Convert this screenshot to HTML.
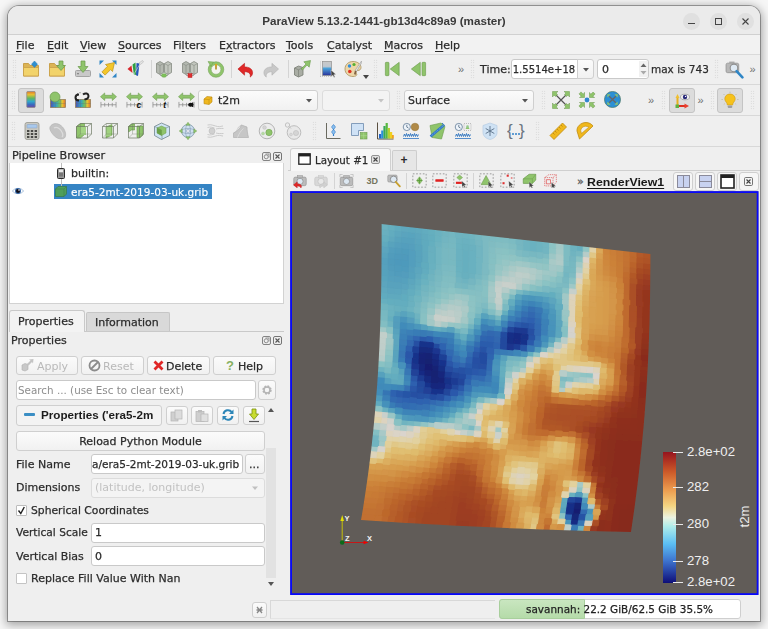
<!DOCTYPE html>
<html><head><meta charset="utf-8"><title>ParaView</title>
<style>
*{box-sizing:border-box;margin:0;padding:0}
html,body{width:768px;height:629px;overflow:hidden;background:#f6f6f6}
body{font-family:"DejaVu Sans","Liberation Sans",sans-serif;font-size:10.8px;color:#2c2c2c;position:relative}
.a{position:absolute}
.x{position:absolute;white-space:nowrap;line-height:1}
.btn{position:absolute;border:1px solid #cfcfcf;border-radius:3px;background:linear-gradient(#fbfbfb,#f1f1f1)}
.fld{position:absolute;border:1px solid #c9c9c9;border-radius:3px;background:#fff}
u{text-decoration:underline;text-underline-offset:1.5px;text-decoration-thickness:1px}
</style></head><body>
<div class="a" style="left:8px;top:6px;width:752px;height:615px;background:#efefef;border-radius:11px 11px 0 0;box-shadow:0 0 0 1px rgba(0,0,0,.30),0 2px 10px 2px rgba(0,0,0,.34)"></div>
<div class="a" style="left:8px;top:6px;width:752px;height:29px;background:#ebebeb;border-radius:11px 11px 0 0;border-bottom:1px solid #d0d0d0"></div>
<div class="x" style="left:8px;top:16px;font-size:11px;font-family:'Liberation Sans',sans-serif;font-weight:bold;color:#3a3a3a;width:752px;text-align:center;transform:scaleX(1.06);transform-origin:50% 50%;">ParaView 5.13.2-1441-gb13d4c89a9 (master)</div>
<div class="a" style="left:683px;top:13px;width:17px;height:17px;border-radius:50%;background:#e0e0e0"></div>
<div class="a" style="left:710px;top:13px;width:17px;height:17px;border-radius:50%;background:#e0e0e0"></div>
<div class="a" style="left:737px;top:13px;width:17px;height:17px;border-radius:50%;background:#e0e0e0"></div>
<svg class="a" style="left:683px;top:13px" width="17" height="17" viewBox="0 0 17 17"><path d="M5 10.500h7" stroke="#444" stroke-width="1" fill="none"/></svg>
<svg class="a" style="left:710px;top:13px" width="17" height="17" viewBox="0 0 17 17"><rect x="5.500" y="5.500" width="6" height="6" stroke="#444" stroke-width="1" fill="none"/></svg>
<svg class="a" style="left:737px;top:13px" width="17" height="17" viewBox="0 0 17 17"><path d="M5.500 5.500l6 6M11.500 5.500l-6 6" stroke="#444" stroke-width="1.100" fill="none"/></svg>
<div class="a" style="left:8px;top:35px;width:752px;height:19.5px;background:#f2f2f2;border-bottom:1px solid #dadada"></div>
<div class="x" style="left:16px;top:41px;font-size:10.8px;transform:scaleX(1.02);transform-origin:0 50%;-webkit-text-stroke:0.25px;"><u>F</u>ile</div>
<div class="x" style="left:47px;top:41px;font-size:10.8px;transform:scaleX(1.02);transform-origin:0 50%;-webkit-text-stroke:0.25px;"><u>E</u>dit</div>
<div class="x" style="left:80px;top:41px;font-size:10.8px;transform:scaleX(1.02);transform-origin:0 50%;-webkit-text-stroke:0.25px;"><u>V</u>iew</div>
<div class="x" style="left:118px;top:41px;font-size:10.8px;transform:scaleX(1.02);transform-origin:0 50%;-webkit-text-stroke:0.25px;"><u>S</u>ources</div>
<div class="x" style="left:173px;top:41px;font-size:10.8px;transform:scaleX(1.02);transform-origin:0 50%;-webkit-text-stroke:0.25px;">Fi<u>l</u>ters</div>
<div class="x" style="left:219px;top:41px;font-size:10.8px;transform:scaleX(1.02);transform-origin:0 50%;-webkit-text-stroke:0.25px;">E<u>x</u>tractors</div>
<div class="x" style="left:286px;top:41px;font-size:10.8px;transform:scaleX(1.02);transform-origin:0 50%;-webkit-text-stroke:0.25px;"><u>T</u>ools</div>
<div class="x" style="left:327px;top:41px;font-size:10.8px;transform:scaleX(1.02);transform-origin:0 50%;-webkit-text-stroke:0.25px;"><u>C</u>atalyst</div>
<div class="x" style="left:384px;top:41px;font-size:10.8px;transform:scaleX(1.02);transform-origin:0 50%;-webkit-text-stroke:0.25px;"><u>M</u>acros</div>
<div class="x" style="left:435px;top:41px;font-size:10.8px;transform:scaleX(1.02);transform-origin:0 50%;-webkit-text-stroke:0.25px;"><u>H</u>elp</div>
<div class="a" style="left:8px;top:55px;width:752px;height:30px;background:#efefef;border-bottom:1px solid #d8d8d8"></div>
<div class="a" style="left:8px;top:85px;width:752px;height:31px;background:#efefef;border-bottom:1px solid #d8d8d8"></div>
<div class="a" style="left:8px;top:116px;width:752px;height:31px;background:#efefef;border-bottom:1px solid #d8d8d8"></div>
<div class="x" style="left:11.5px;top:151px;font-size:10.8px;transform:scaleX(1.04);transform-origin:0 50%;-webkit-text-stroke:0.25px;">Pipeline Browser</div>
<div class="a" style="left:9px;top:163px;width:275px;height:141px;background:#fff;border:1px solid #d2d2d2;border-top:none"></div>
<div class="x" style="left:71px;top:169px;font-size:10.8px;transform:scaleX(1.02);transform-origin:0 50%;-webkit-text-stroke:0.25px;">builtin:</div>
<div class="a" style="left:54px;top:184px;width:158px;height:15px;background:#3584c4"></div>
<div class="x" style="left:71px;top:188px;font-size:10.8px;color:#fff;transform:scaleX(0.975);transform-origin:0 50%;-webkit-text-stroke:0.15px;">era5-2mt-2019-03-uk.grib</div>
<div class="a" style="left:86px;top:312px;width:84px;height:20px;background:#d9d9d9;border:1px solid #c6c6c6;border-bottom:none;border-radius:2px 2px 0 0"></div>
<div class="a" style="left:9px;top:331px;width:275px;height:1px;background:#c9c9c9"></div>
<div class="a" style="left:9px;top:310px;width:76px;height:22px;background:#f3f3f3;border:1px solid #c9c9c9;border-bottom:none;border-radius:3px 3px 0 0"></div>
<div class="x" style="left:18px;top:317px;font-size:10.8px;transform:scaleX(1.02);transform-origin:0 50%;-webkit-text-stroke:0.25px;">Properties</div>
<div class="x" style="left:95px;top:318px;font-size:10.8px;transform:scaleX(1.02);transform-origin:0 50%;-webkit-text-stroke:0.25px;">Information</div>
<div class="x" style="left:11px;top:336px;font-size:10.8px;transform:scaleX(1.02);transform-origin:0 50%;-webkit-text-stroke:0.25px;">Properties</div>
<div class="btn" style="left:16px;top:356px;width:62px;height:19px"></div>
<div class="btn" style="left:81px;top:356px;width:63px;height:19px"></div>
<div class="btn" style="left:147px;top:356px;width:63px;height:19px"></div>
<div class="btn" style="left:213px;top:356px;width:63px;height:19px"></div>
<div class="x" style="left:37px;top:362px;font-size:10.8px;color:#b9b9b9;transform:scaleX(1.02);transform-origin:0 50%;">Apply</div>
<div class="x" style="left:103px;top:362px;font-size:10.8px;color:#b9b9b9;transform:scaleX(1.02);transform-origin:0 50%;">Reset</div>
<div class="x" style="left:166px;top:362px;font-size:10.8px;transform:scaleX(1.02);transform-origin:0 50%;-webkit-text-stroke:0.25px;">Delete</div>
<div class="x" style="left:238px;top:362px;font-size:10.8px;transform:scaleX(1.02);transform-origin:0 50%;-webkit-text-stroke:0.25px;">Help</div>
<div class="fld" style="left:16px;top:380px;width:240px;height:20px"></div>
<div class="x" style="left:18px;top:386px;font-size:10.8px;color:#8d8d8d;transform:scaleX(0.96);transform-origin:0 50%;">Search ... (use Esc to clear text)</div>
<div class="btn" style="left:258px;top:380px;width:18px;height:20px"></div>
<div class="btn" style="left:16px;top:405px;width:146px;height:21px;background:#f3f3f3"></div>
<div class="a" style="left:24px;top:413px;width:11px;height:3px;background:#3a8ec4;border-radius:1px"></div>
<div class="x" style="left:41px;top:410px;font-size:11px;font-family:'Liberation Sans',sans-serif;font-weight:bold;color:#1c1c1c;transform:scaleX(1.06);transform-origin:0 50%;width:114px;overflow:hidden;">Properties ('era5-2m</div>
<div class="btn" style="left:166px;top:406px;width:22px;height:19px"></div>
<div class="btn" style="left:191px;top:406px;width:22px;height:19px"></div>
<div class="btn" style="left:217px;top:406px;width:22px;height:19px"></div>
<div class="btn" style="left:243px;top:406px;width:22px;height:19px"></div>
<div class="a" style="left:266px;top:448px;width:10px;height:130px;background:#e2e2e2"></div>
<svg class="a" style="left:265.5px;top:405.5px" width="10" height="8" viewBox="0 0 10 8"><path d="M2 6l3-4 3 4z" fill="#555"/></svg>
<svg class="a" style="left:266px;top:580px" width="10" height="8" viewBox="0 0 10 8"><path d="M2 2l3 4 3-4z" fill="#555"/></svg>
<div class="btn" style="left:16px;top:431px;width:249px;height:20px"></div>
<div class="x" style="left:16px;top:437px;font-size:10.8px;width:249px;text-align:center;transform:scaleX(1.02);transform-origin:50% 50%;-webkit-text-stroke:0.25px;">Reload Python Module</div>
<div class="x" style="left:16px;top:460px;font-size:10.8px;transform:scaleX(1.02);transform-origin:0 50%;-webkit-text-stroke:0.25px;">File Name</div>
<div class="fld" style="left:91px;top:454px;width:152px;height:20px;overflow:hidden"></div>
<div class="x" style="left:92px;top:460px;font-size:10.8px;transform:scaleX(0.975);transform-origin:0 50%;-webkit-text-stroke:0.25px;">a/era5-2mt-2019-03-uk.grib</div>
<div class="btn" style="left:245px;top:454px;width:20px;height:20px"></div>
<div class="x" style="left:249px;top:460px;font-size:10.8px;transform:scaleX(1.02);transform-origin:0 50%;-webkit-text-stroke:0.25px;">...</div>
<div class="x" style="left:16px;top:483px;font-size:10.8px;transform:scaleX(1.02);transform-origin:0 50%;-webkit-text-stroke:0.25px;">Dimensions</div>
<div class="fld" style="left:91px;top:478px;width:174px;height:20px;background:#f4f4f4;border-color:#dcdcdc"></div>
<div class="x" style="left:95px;top:483px;font-size:10.8px;color:#c2c2c2;transform:scaleX(1.02);transform-origin:0 50%;">(latitude, longitude)</div>
<svg class="a" style="left:251px;top:485px" width="8" height="6" viewBox="0 0 8 6"><path d="M1 1.500l3 3.500 3-3.500z" fill="#c0c0c0"/></svg>
<div class="fld" style="left:16px;top:505px;width:11px;height:11px;border-radius:1px;border-color:#bdbdbd"></div>
<svg class="a" style="left:16px;top:505px" width="11" height="11" viewBox="0 0 11 11"><path d="M2.500 5.500l2.300 3 3.500-6.500" stroke="#222" stroke-width="1.400" fill="none"/></svg>
<div class="x" style="left:31px;top:506px;font-size:10.8px;transform:scaleX(0.995);transform-origin:0 50%;-webkit-text-stroke:0.25px;">Spherical Coordinates</div>
<div class="x" style="left:16px;top:528px;font-size:10.8px;transform:scaleX(0.985);transform-origin:0 50%;-webkit-text-stroke:0.25px;">Vertical Scale</div>
<div class="fld" style="left:91px;top:523px;width:174px;height:20px"></div>
<div class="x" style="left:95px;top:528px;font-size:10.8px;transform:scaleX(1.02);transform-origin:0 50%;-webkit-text-stroke:0.25px;">1</div>
<div class="x" style="left:16px;top:552px;font-size:10.8px;transform:scaleX(1.02);transform-origin:0 50%;-webkit-text-stroke:0.25px;">Vertical Bias</div>
<div class="fld" style="left:91px;top:546px;width:174px;height:20px"></div>
<div class="x" style="left:95px;top:552px;font-size:10.8px;transform:scaleX(1.02);transform-origin:0 50%;-webkit-text-stroke:0.25px;">0</div>
<div class="fld" style="left:16px;top:573px;width:11px;height:11px;border-radius:1px;border-color:#c4c4c4"></div>
<div class="x" style="left:31px;top:574px;font-size:10.8px;transform:scaleX(1.02);transform-origin:0 50%;-webkit-text-stroke:0.25px;">Replace Fill Value With Nan</div>
<div class="a" style="left:288px;top:170px;width:472px;height:1px;background:#cfcfcf"></div>
<div class="a" style="left:290px;top:148px;width:101px;height:23px;background:#f7f7f7;border:1px solid #d0d0d0;border-bottom:none;border-radius:3px 3px 0 0"></div>
<div class="a" style="left:392px;top:150px;width:25px;height:20px;background:#e6e6e6;border:1px solid #cdcdcd;border-bottom:none;border-radius:2px 2px 0 0"></div>
<div class="x" style="left:314.5px;top:156px;font-size:10.8px;transform:scaleX(0.95);transform-origin:0 50%;-webkit-text-stroke:0.25px;">Layout #1</div>
<div class="x" style="left:400.5px;top:154px;font-size:12px;font-family:'Liberation Sans',sans-serif;font-weight:bold;transform:scaleX(1);transform-origin:0 50%;">+</div>
<div class="x" style="left:587px;top:177px;font-size:11px;font-family:'Liberation Sans',sans-serif;font-weight:bold;color:#1a1a1a;transform:scaleX(1.12);transform-origin:0 50%;"><u>RenderView1</u></div>
<div class="x" style="left:577px;top:176px;font-size:11px;color:#555;transform:scaleX(1);transform-origin:0 50%;-webkit-text-stroke:0.25px;">»</div>
<div class="btn" style="left:673px;top:172px;width:20px;height:19px;background:#f6f6f6"></div>
<div class="btn" style="left:695px;top:172px;width:20px;height:19px;background:#f6f6f6"></div>
<div class="btn" style="left:717px;top:172px;width:20px;height:19px;background:#f6f6f6"></div>
<div class="btn" style="left:739px;top:172px;width:20px;height:19px;background:#f6f6f6"></div>
<div class="btn" style="left:252px;top:602px;width:15px;height:16px"></div>
<div class="a" style="left:270px;top:600px;width:225px;height:19px;border:1px solid #d8d8d8;border-right:none;border-bottom-color:#e4e4e4"></div>
<div class="fld" style="left:499px;top:599px;width:242px;height:20px;border-color:#cfcfcf"></div>
<div class="a" style="left:499px;top:599px;width:86px;height:20px;background:linear-gradient(#c9e6c0,#b5dba9);border:1px solid #a8cf9c;border-radius:3px 0 0 3px"></div>
<div class="x" style="left:526px;top:605px;font-size:10.8px;color:#222;transform:scaleX(0.967);transform-origin:0 50%;-webkit-text-stroke:0.25px;">savannah: 22.2 GiB/62.5 GiB 35.5%</div>
<div class="a" style="left:12px;top:59px;width:5px;height:20px;background-image:radial-gradient(circle,#cdcdcd 0.600px,transparent 0.800px);background-size:2.500px 2.500px"></div>
<svg class="a" style="left:22px;top:60px;" width="18" height="18" viewBox="0 0 18 18"><path d="M1.500 3.500h5l1.500 2h8.500v10.500h-15z" fill="#dcb455" stroke="#c9a04a" stroke-width="1"/><path d="M1.500 16v-8.500h15v8.500z" fill="#f2d36b" stroke="#c9a04a" stroke-width=".8"/><path d="M12.500 1l3 3.200-3 3.200-3-3.200z" fill="#2f8fd0" stroke="#2a78b0" stroke-width=".5"/></svg>
<svg class="a" style="left:48px;top:60px;" width="18" height="18" viewBox="0 0 18 18"><path d="M1.500 3.500h5l1.500 2h8.500v10.500h-15z" fill="#dcb455" stroke="#c9a04a" stroke-width="1"/><path d="M1.500 16v-8.500h15v8.500z" fill="#f2d36b" stroke="#c9a04a" stroke-width=".8"/><path d="M11 1h4v4.500h2.500l-4.500 5-4.500-5h2.500z" fill="#8fc46b" stroke="#6a9a4c" stroke-width=".7"/></svg>
<svg class="a" style="left:74px;top:60px;" width="18" height="18" viewBox="0 0 18 18"><rect x="1.500" y="10.500" width="15" height="6" rx="1" fill="#c9c9c9" stroke="#a4a4a4"/><rect x="3" y="13" width="2" height="1.300" fill="#8a8a8a"/><path d="M7 1h4v5.500h3l-5 6-5-6h3z" fill="#8fc46b" stroke="#6a9a4c" stroke-width=".7"/></svg>
<svg class="a" style="left:99px;top:60px;" width="18" height="18" viewBox="0 0 18 18"><g fill="#2f86c6"><path d="M.5 .5h4.500l-4.500 4.500z"/><path d="M17.500 .5v4.500l-4.500-4.500z"/><path d="M.5 17.500v-4.500l4.500 4.500z"/><path d="M17.500 17.500h-4.500l4.500-4.500z"/></g><path d="M6.100 15.100l5.500-5.500 1.900 1.900 2-9-9 2 1.900 1.900-5.500 5.500z" fill="#f3c62a" stroke="#b8901c" stroke-width=".7" stroke-linejoin="round"/></svg>
<svg class="a" style="left:126px;top:60px;" width="18" height="18" viewBox="0 0 18 18"><path d="M1.500 9l4-3.500 1 7.500z" fill="#d8262c"/><path d="M6.500 4.500l3-2 0.500 12.500-2.200-.8z" fill="#2f9e44"/><path d="M10.500 3l3 .5-1.500 12.500-2-.7z" fill="#2657b8"/><path d="M13 3l3.500-2.500 1 1.500-3.300 2.600z" fill="#e6e6e6" stroke="#aaa" stroke-width=".5"/><path d="M8 14l6-10" stroke="#ddd" stroke-width=".6"/></svg>
<div class="a" style="left:151px;top:60px;width:1px;height:18px;background:#d4d4d4"></div>
<svg class="a" style="left:155px;top:60px;" width="18" height="18" viewBox="0 0 18 18"><path d="M1.500 3.500l3.500-2 3.500 2v9l-3.500 2-3.500-2z" fill="#b4b8b0" stroke="#858a82" stroke-width=".8"/><path d="M5 5.500v9" stroke="#858a82" stroke-width=".6"/><path d="M9.500 3.500l3.500-2 3.500 2v9l-3.500 2-3.500-2z" fill="#c2c6be" stroke="#858a82" stroke-width=".8"/><path d="M13 5.500v9" stroke="#858a82" stroke-width=".6"/><path d="M1.500 3.500l3.500 2 3.500-2M9.500 3.500l3.500 2 3.500-2" fill="none" stroke="#858a82" stroke-width=".6"/><path d="M5 15.500h8" stroke="#9a9a9a" stroke-width=".8"/><ellipse cx="9" cy="15.500" rx="2.600" ry="1.800" fill="#7ec35a" stroke="#5e9a42" stroke-width=".5"/></svg>
<svg class="a" style="left:181px;top:60px;" width="18" height="18" viewBox="0 0 18 18"><path d="M1.500 3.500l3.500-2 3.500 2v9l-3.500 2-3.500-2z" fill="#b4b8b0" stroke="#858a82" stroke-width=".8"/><path d="M5 5.500v9" stroke="#858a82" stroke-width=".6"/><path d="M9.500 3.500l3.500-2 3.500 2v9l-3.500 2-3.500-2z" fill="#c2c6be" stroke="#858a82" stroke-width=".8"/><path d="M13 5.500v9" stroke="#858a82" stroke-width=".6"/><path d="M1.500 3.500l3.500 2 3.500-2M9.500 3.500l3.500 2 3.500-2" fill="none" stroke="#858a82" stroke-width=".6"/><path d="M5 15.500h8" stroke="#9a9a9a" stroke-width=".8"/><rect x="7" y="13.500" width="4" height="4" fill="#e03030" stroke="#b02020" stroke-width=".5"/></svg>
<svg class="a" style="left:207px;top:60px;" width="18" height="18" viewBox="0 0 18 18"><circle cx="9" cy="9.500" r="6.300" fill="none" stroke="#8fc46b" stroke-width="3"/><circle cx="9" cy="9.500" r="7.800" fill="none" stroke="#6a9a4c" stroke-width=".5"/><circle cx="9" cy="9.500" r="4.800" fill="#f4f4f0" stroke="#6a9a4c" stroke-width=".5"/><path d="M1 1.500l5.500.5-2.500 4.500z" fill="#8fc46b" stroke="#6a9a4c" stroke-width=".5"/><path d="M9 4.500v5" stroke="#b08a20" stroke-width="1.600"/><circle cx="9" cy="5" r="1.200" fill="#d8a820"/></svg>
<div class="a" style="left:231px;top:60px;width:1px;height:18px;background:#d4d4d4"></div>
<svg class="a" style="left:237px;top:61px;" width="17" height="17" viewBox="0 0 18 18"><path d="M1 8.500l7-6v3.800c5 0 8.500 2.200 8.500 6.200 0 2-1 3.500-2.500 4.500 .8-3.500-1.500-5.700-6-5.700v3.700z" fill="#e02828" stroke="#b81818" stroke-width=".6"/></svg>
<svg class="a" style="left:262px;top:61px;" width="18" height="17" viewBox="0 0 18 18"><path d="M17 8.500l-7-6v3.800c-5 0-8.500 2.200-8.500 6.200 0 2 1 3.500 2.500 4.500-.8-3.500 1.500-5.700 6-5.700v3.700z" fill="#c8c8c8" stroke="#b0b0b0" stroke-width=".6"/></svg>
<div class="a" style="left:288px;top:60px;width:1px;height:18px;background:#d4d4d4"></div>
<svg class="a" style="left:293px;top:60px;" width="18" height="18" viewBox="0 0 18 18"><path d="M1.500 8l4-2 4.500 1.500v7.500l-4.500 2-4-2z" fill="#a9ada4" stroke="#777b72" stroke-width=".8"/><path d="M1.500 8l4 1.800 4.500-2.300M5.500 9.800v7" fill="none" stroke="#777b72" stroke-width=".6"/><path d="M8 9l5-5-2.200-2.200 6.700-1.300-1.300 6.700-2.200-2.200-4.500 5z" fill="#8fc46b" stroke="#6a9a4c" stroke-width=".6"/></svg>
<svg class="a" style="left:319px;top:60px;" width="18" height="18" viewBox="0 0 18 18"><defs><linearGradient id="lgc12" x1="0" y1="0" x2="0" y2="1"><stop offset="0" stop-color="#c8c8c8"/><stop offset=".35" stop-color="#c0c8d0"/><stop offset=".5" stop-color="#4aa0d8"/><stop offset="1" stop-color="#28309a"/></linearGradient></defs><rect x="3.500" y="1.500" width="9" height="14" fill="url(#lgc12)" stroke="#909090" stroke-width=".7"/><path d="M1.500 1.500v15M1 16.500h12" stroke="#aaa" stroke-width=".6" stroke-dasharray="1 1"/><path d="M12 10l5 4.500-2.200.2 1.200 2.300-1 .5-1.200-2.300-1.600 1.500z" fill="#444" stroke="#eee" stroke-width=".4"/></svg>
<svg class="a" style="left:344px;top:60px;" width="18" height="18" viewBox="0 0 18 18"><path d="M9 1.500c5 0 8 3 8 6 0 2-1.500 3-3 3-1.200 0-2 .6-2 1.600 0 1 .8 1.400.8 2.400 0 1.200-1.500 2-3.800 2-4.500 0-8-3-8-7.500s3.500-7.500 8-7.500z" fill="#ecd6a8" stroke="#a8905c" stroke-width=".8"/><circle cx="5.500" cy="6" r="1.700" fill="#2f8fe0"/><circle cx="10" cy="4.500" r="1.600" fill="#58b030"/><circle cx="5.800" cy="11.500" r="1.800" fill="#e03020"/><path d="M17.500 1l-6.500 9.500 1.500 1 5.500-9.500z" fill="#e8e8e8" stroke="#888" stroke-width=".5"/><path d="M11 10.500l1.500 1-1 3.500-1.500-1z" fill="#806040"/></svg>
<svg class="a" style="left:363px;top:75px" width="6" height="4" viewBox="0 0 6 4"><path d="M0 0h6l-3 4z" fill="#444"/></svg>
<div class="a" style="left:373px;top:59px;width:5px;height:20px;background-image:radial-gradient(circle,#cdcdcd 0.600px,transparent 0.800px);background-size:2.500px 2.500px"></div>
<svg class="a" style="left:384px;top:61px;" width="17" height="16" viewBox="0 0 18 18"><rect x="1" y="1.500" width="4" height="15" rx=".8" fill="#8fc46b" stroke="#6a9a4c" stroke-width=".7"/><path d="M16.500 1.500v15l-10-7.500z" fill="#8fc46b" stroke="#6a9a4c" stroke-width=".7"/></svg>
<svg class="a" style="left:410px;top:61px;" width="17" height="16" viewBox="0 0 18 18"><rect x="13" y="1.500" width="4" height="15" rx=".8" fill="#8fc46b" stroke="#6a9a4c" stroke-width=".7"/><path d="M11 1.500v15l-10-7.500z" fill="#8fc46b" stroke="#6a9a4c" stroke-width=".7"/></svg>
<div class="x" style="left:458px;top:64px;font-size:11px;font-family:'Liberation Sans',sans-serif;color:#707070;transform:scaleX(1);transform-origin:0 50%;">»</div>
<div class="a" style="left:470px;top:59px;width:5px;height:20px;background-image:radial-gradient(circle,#cdcdcd 0.600px,transparent 0.800px);background-size:2.500px 2.500px"></div>
<div class="x" style="left:479.5px;top:65px;font-size:10.8px;transform:scaleX(1.02);transform-origin:0 50%;-webkit-text-stroke:0.25px;">Time:</div>
<div class="fld" style="left:511px;top:59px;width:67px;height:20px;border-radius:3px 0 0 3px"></div>
<div class="a" style="left:512px;top:60px;width:64px;height:18px;overflow:hidden"><div class="x" style="right:1px;top:5px;font-size:10.8px;-webkit-text-stroke:.25px;transform:scaleX(.93);transform-origin:100% 50%">1.5514e+18</div></div>
<div class="btn" style="left:577px;top:59px;width:17px;height:20px;border-radius:0 3px 3px 0"></div>
<svg class="a" style="left:582px;top:67px" width="8" height="5" viewBox="0 0 8 5"><path d="M1 1h6l-3 3.500z" fill="#555"/></svg>
<div class="fld" style="left:597px;top:59px;width:52px;height:20px"></div>
<div class="x" style="left:602px;top:65px;font-size:10.8px;transform:scaleX(1.02);transform-origin:0 50%;-webkit-text-stroke:0.25px;">0</div>
<svg class="a" style="left:639px;top:61px" width="9" height="16" viewBox="0 0 9 16"><rect width="9" height="16" fill="#f1f1f1"/><path d="M1.500 6l3-3.500 3 3.500z" fill="#666"/><path d="M1.500 10l3 3.500 3-3.500z" fill="#aaa"/></svg>
<div class="x" style="left:651px;top:65px;font-size:10.8px;transform:scaleX(0.97);transform-origin:0 50%;-webkit-text-stroke:0.25px;">max is 743</div>
<div class="a" style="left:714px;top:59px;width:5px;height:20px;background-image:radial-gradient(circle,#cdcdcd 0.600px,transparent 0.800px);background-size:2.500px 2.500px"></div>
<svg class="a" style="left:725px;top:60px;" width="19" height="19" viewBox="0 0 18 18"><rect x="1" y="3" width="12" height="9" rx="1.500" fill="#b8b8b8" stroke="#8e8e8e" stroke-width=".7"/><rect x="4" y="1.500" width="5" height="2" fill="#a8a8a8"/><circle cx="8.500" cy="7.500" r="3.600" fill="#dfeaf4" stroke="#8e8e8e" stroke-width="1"/><path d="M11 10.500l5.500 6" stroke="#2f86c6" stroke-width="2.400" stroke-linecap="round"/></svg>
<div class="x" style="left:749.5px;top:64px;font-size:11px;font-family:'Liberation Sans',sans-serif;color:#707070;transform:scaleX(1);transform-origin:0 50%;">»</div>
<div class="a" style="left:11px;top:90px;width:5px;height:20px;background-image:radial-gradient(circle,#cdcdcd 0.600px,transparent 0.800px);background-size:2.500px 2.500px"></div>
<div class="a" style="left:18px;top:88px;width:26px;height:25px;background:#dcdcdc;border:1px solid #c4c4c4;border-radius:3px"></div>
<svg class="a" style="left:22px;top:91px;" width="18" height="17" viewBox="0 0 18 18"><defs><linearGradient id="rb17" x1="0" y1="0" x2="0" y2="1"><stop offset="0" stop-color="#e07830"/><stop offset=".2" stop-color="#e8c030"/><stop offset=".42" stop-color="#60b860"/><stop offset=".62" stop-color="#30a8c8"/><stop offset=".82" stop-color="#3868c0"/><stop offset="1" stop-color="#7048a0"/></linearGradient></defs><rect x="4.500" y=".5" width="9" height="17" rx="1" fill="url(#rb17)" stroke="#8a8a8a" stroke-width=".8"/></svg>
<svg class="a" style="left:49px;top:91px;" width="18" height="18" viewBox="0 0 18 18"><defs><linearGradient id="bk18" x1="0" y1="0" x2="1" y2="0"><stop offset="0" stop-color="#5050b0"/><stop offset=".35" stop-color="#30a0c8"/><stop offset=".6" stop-color="#70c060"/><stop offset=".8" stop-color="#e8c030"/><stop offset="1" stop-color="#e07030"/></linearGradient></defs><rect x="1.500" y="8.500" width="15" height="8" fill="url(#bk18)" stroke="#8a7a50" stroke-width=".7"/><path d="M1.500 12.500h15M6.500 8.500v8M11.500 8.500v8" stroke="#6a6a6a" stroke-width=".5" opacity=".6"/><circle cx="6" cy="6" r="5" fill="#8fc46b" stroke="#6a9a4c" stroke-width=".7"/></svg>
<svg class="a" style="left:74px;top:91px;" width="18" height="18" viewBox="0 0 18 18"><defs><linearGradient id="bk19" x1="0" y1="0" x2="1" y2="0"><stop offset="0" stop-color="#5050b0"/><stop offset=".35" stop-color="#30a0c8"/><stop offset=".6" stop-color="#70c060"/><stop offset=".8" stop-color="#e8c030"/><stop offset="1" stop-color="#e07030"/></linearGradient></defs><rect x="1.500" y="8.500" width="15" height="8" fill="url(#bk19)" stroke="#8a7a50" stroke-width=".7"/><path d="M1.500 12.500h15M6.500 8.500v8M11.500 8.500v8" stroke="#6a6a6a" stroke-width=".5" opacity=".6"/><path d="M5 9.500c-2.500 0-3.500-1.500-3.500-3s1.200-3 3.500-3M9 3.500c2.500-2 5.500-1 5.500 1.500s-2 3.500-4 3" fill="none" stroke="#222" stroke-width="2"/><path d="M3 2l1 1M6 1v1.300M1.500 4.500l1 .5" stroke="#444" stroke-width=".6"/></svg>
<svg class="a" style="left:99px;top:92px;" width="19" height="17" viewBox="0 0 18 18"><path d="M.5 5l4.500-4v2.500h8v-2.500l4.500 4-4.500 4v-2.500h-8v2.500z" fill="#8fc46b" stroke="#6a9a4c" stroke-width=".6"/><path d="M1 13.500h16M1 10.500v6M5 11.500v4M9 11.500v4M13 11.500v4M17 10.500v6" stroke="#8a8a8a" stroke-width=".8" fill="none"/></svg>
<svg class="a" style="left:125px;top:92px;" width="19" height="17" viewBox="0 0 18 18"><path d="M.5 5l4.500-4v2.500h8v-2.500l4.500 4-4.500 4v-2.500h-8v2.500z" fill="#8fc46b" stroke="#6a9a4c" stroke-width=".6"/><path d="M1 13.500h16M1 10.500v6M5 11.500v4M9 11.500v4M13 11.500v4M17 10.500v6" stroke="#8a8a8a" stroke-width=".8" fill="none"/><text x="11" y="17" font-family="Liberation Sans" font-weight="bold" font-style="italic" font-size="9" fill="#111">c</text></svg>
<svg class="a" style="left:151px;top:92px;" width="19" height="17" viewBox="0 0 18 18"><path d="M.5 5l4.500-4v2.500h8v-2.500l4.500 4-4.500 4v-2.500h-8v2.500z" fill="#8fc46b" stroke="#6a9a4c" stroke-width=".6"/><path d="M1 13.500h16M1 10.500v6M5 11.500v4M9 11.500v4M13 11.500v4M17 10.500v6" stroke="#8a8a8a" stroke-width=".8" fill="none"/><text x="12" y="17" font-family="Liberation Sans" font-weight="bold" font-style="italic" font-size="9" fill="#111">t</text></svg>
<svg class="a" style="left:177px;top:92px;" width="19" height="17" viewBox="0 0 18 18"><path d="M.5 5l4.500-4v2.500h8v-2.500l4.500 4-4.500 4v-2.500h-8v2.500z" fill="#8fc46b" stroke="#6a9a4c" stroke-width=".6"/><path d="M1 13.500h16M1 10.500v6M5 11.500v4M9 11.500v4M13 11.500v4M17 10.500v6" stroke="#8a8a8a" stroke-width=".8" fill="none"/><ellipse cx="13.500" cy="13.500" rx="2.800" ry="2.200" fill="#111"/><path d="M15.500 11v5" stroke="#111" stroke-width="1.200"/></svg>
<div class="btn" style="left:198px;top:90px;width:120px;height:21px"></div>
<svg class="a" style="left:203px;top:95px;" width="10" height="11" viewBox="0 0 10 11"><path d="M1 4l3-2.500 5 .5v5l-3 2.500-5-.8z" fill="#f0b820" stroke="#b88810" stroke-width=".6"/><path d="M1 4l5 .7 3-2.700M6 4.700v4.800" fill="none" stroke="#b88810" stroke-width=".5"/></svg>
<div class="x" style="left:218px;top:96px;font-size:10.8px;transform:scaleX(1.02);transform-origin:0 50%;-webkit-text-stroke:0.25px;">t2m</div>
<svg class="a" style="left:305px;top:98px" width="8" height="5" viewBox="0 0 8 5"><path d="M1 1h6l-3 3.500z" fill="#555"/></svg>
<div class="btn" style="left:322px;top:90px;width:68px;height:21px;border-color:#dcdcdc;background:#f3f3f3"></div>
<svg class="a" style="left:377px;top:98px" width="8" height="5" viewBox="0 0 8 5"><path d="M1 1h6l-3 3.500z" fill="#c4c4c4"/></svg>
<div class="a" style="left:396px;top:90px;width:5px;height:20px;background-image:radial-gradient(circle,#cdcdcd 0.600px,transparent 0.800px);background-size:2.500px 2.500px"></div>
<div class="btn" style="left:404px;top:90px;width:130px;height:21px"></div>
<div class="x" style="left:408px;top:96px;font-size:10.8px;transform:scaleX(1.02);transform-origin:0 50%;-webkit-text-stroke:0.25px;">Surface</div>
<svg class="a" style="left:521px;top:98px" width="8" height="5" viewBox="0 0 8 5"><path d="M1 1h6l-3 3.500z" fill="#555"/></svg>
<div class="a" style="left:541px;top:90px;width:5px;height:20px;background-image:radial-gradient(circle,#cdcdcd 0.600px,transparent 0.800px);background-size:2.500px 2.500px"></div>
<svg class="a" style="left:551.5px;top:91px;" width="18" height="18" viewBox="0 0 18 18"><path d="M3 3l12 12M15 3l-12 12" stroke="#555" stroke-width="1.200"/><g fill="#8fc46b" stroke="#6a9a4c" stroke-width=".5"><path d="M.5.500h5.500l-2 1.500 1.500 1.500-2 2-1.500-1.500-1.500 2z"/><path d="M17.500.5v5.500l-1.500-2-1.500 1.500-2-2 1.500-1.500-2-1.500z"/><path d="M.5 17.500v-5.500l1.500 2 1.500-1.500 2 2-1.500 1.500 2 1.500z"/><path d="M17.500 17.500h-5.500l2-1.500-1.500-1.500 2-2 1.500 1.500 1.500-2z"/></g></svg>
<svg class="a" style="left:577.5px;top:91px;" width="18" height="18" viewBox="0 0 18 18"><g fill="#8fc46b" stroke="#6a9a4c" stroke-width=".5"><path d="M6.500 6.500h-5l1.800-1.300-2.300-2.300 2-2 2.300 2.300 1.200-1.800z"/><path d="M11.500 6.500v-5l1.300 1.800 2.300-2.300 2 2-2.300 2.300 1.800 1.200z"/><path d="M6.500 11.500v5l-1.300-1.800-2.300 2.300-2-2 2.300-2.300-1.800-1.200z"/><path d="M11.500 11.500h5l-1.800 1.300 2.300 2.300-2 2-2.300-2.300-1.200 1.800z"/></g><circle cx="9" cy="9" r="2.400" fill="#2f86d0"/></svg>
<svg class="a" style="left:603.5px;top:91px;" width="17" height="17" viewBox="0 0 18 18"><circle cx="9" cy="9" r="8.500" fill="#2b8fd6" stroke="#4a7a6a" stroke-width=".8"/><path d="M5.500 5.500l7 7M12.500 5.500l-7 7" stroke="#666" stroke-width="1.400"/><g fill="#8fc46b"><path d="M3.500 3.500h3.500l-3.500 3.500z"/><path d="M14.500 3.500v3.500l-3.500-3.500z"/><path d="M3.500 14.500v-3.500l3.500 3.500z"/><path d="M14.500 14.500h-3.500l3.500-3.500z"/></g></svg>
<div class="x" style="left:648px;top:95px;font-size:11px;font-family:'Liberation Sans',sans-serif;color:#707070;transform:scaleX(1);transform-origin:0 50%;">»</div>
<div class="a" style="left:661px;top:90px;width:5px;height:20px;background-image:radial-gradient(circle,#cdcdcd 0.600px,transparent 0.800px);background-size:2.500px 2.500px"></div>
<div class="a" style="left:669px;top:88px;width:26px;height:25px;background:#dcdcdc;border:1px solid #c4c4c4;border-radius:3px"></div>
<svg class="a" style="left:673px;top:92px;" width="18" height="18" viewBox="0 0 18 18"><path d="M4.500 14.500v-9" stroke="#e8b020" stroke-width="2"/><path d="M2.500 6l2-4 2 4z" fill="#f0c030"/><path d="M5 14h7" stroke="#e03020" stroke-width="2"/><path d="M11.500 11.500l4.500 2.500-4.500 2.500z" fill="#e84030"/><rect x="2.500" y="12.500" width="3.500" height="3.500" fill="#60b040"/><ellipse cx="12" cy="5" rx="4.500" ry="2.800" fill="#f4f4f4" stroke="#888" stroke-width=".6"/><circle cx="12" cy="5" r="2.200" fill="#282878"/><circle cx="12.600" cy="4.400" r=".7" fill="#fff"/></svg>
<div class="x" style="left:697.5px;top:95px;font-size:11px;font-family:'Liberation Sans',sans-serif;color:#707070;transform:scaleX(1);transform-origin:0 50%;">»</div>
<div class="a" style="left:710px;top:90px;width:5px;height:20px;background-image:radial-gradient(circle,#cdcdcd 0.600px,transparent 0.800px);background-size:2.500px 2.500px"></div>
<div class="a" style="left:717px;top:88px;width:26px;height:25px;background:#dcdcdc;border:1px solid #c4c4c4;border-radius:3px"></div>
<svg class="a" style="left:721px;top:91px;" width="18" height="19" viewBox="0 0 18 18"><path d="M9 2.500c3.200 0 5.200 2.200 5.200 4.800 0 2-1.200 3-2 4.200-.4.600-.5 1.500-.5 2h-5.400c0-.5-.1-1.400-.5-2-.8-1.200-2-2.200-2-4.200 0-2.600 2-4.800 5.200-4.800z" fill="#f6c21c" stroke="#d09a10" stroke-width=".6"/><rect x="6.800" y="14" width="4.400" height="2.600" rx=".8" fill="#a0a0a0"/><path d="M9 .2v1.300M2.500 2.500l1 1M15.500 2.500l-1 1M.5 8h1.300M16.200 8h1.300M2.800 13l.9-.8M15.200 13l-.9-.8" stroke="#b8b8a0" stroke-width=".8"/></svg>
<div class="a" style="left:750px;top:90px;width:5px;height:20px;background-image:radial-gradient(circle,#cdcdcd 0.600px,transparent 0.800px);background-size:2.500px 2.500px"></div>
<div class="a" style="left:11px;top:121px;width:5px;height:20px;background-image:radial-gradient(circle,#cdcdcd 0.600px,transparent 0.800px);background-size:2.500px 2.500px"></div>
<svg class="a" style="left:23px;top:122px;" width="18" height="18" viewBox="0 0 18 18"><rect x="2" y=".5" width="14" height="17" rx="2" fill="#c9c9c2" stroke="#96968e" stroke-width=".8"/><rect x="4" y="2.500" width="10" height="3.500" rx=".6" fill="#a8c8ec" stroke="#88a0c0" stroke-width=".5"/><g fill="#4a4a46"><rect x="4" y="8" width="2.400" height="2"/><rect x="7.800" y="8" width="2.400" height="2"/><rect x="11.600" y="8" width="2.400" height="2"/><rect x="4" y="11" width="2.400" height="2"/><rect x="7.800" y="11" width="2.400" height="2"/><rect x="11.600" y="11" width="2.400" height="2"/><rect x="4" y="14" width="2.400" height="2"/><rect x="7.800" y="14" width="2.400" height="2"/><rect x="11.600" y="14" width="2.400" height="2"/></g></svg>
<svg class="a" style="left:49px;top:122px;" width="18" height="18" viewBox="0 0 18 18"><path d="M2 3.500c3-3 8-2.500 11.500 1.500s4 9 2 11c-2.500 2-8 1-11.500-3.500s-4-7-2-9z" fill="#c4c4c4" stroke="#b0b0b0" stroke-width=".6"/><path d="M5 6c2-1.500 5-.5 7 2.500s2 5.500 1 6.500" fill="none" stroke="#dcdcdc" stroke-width="1.300"/></svg>
<svg class="a" style="left:75px;top:122px;" width="18" height="18" viewBox="0 0 18 18"><path d="M1.500 4.500l4-3h4v11l-4 3.500h-4z" fill="#8fc46b" stroke="#6a9a4c" stroke-width=".6"/><path d="M5.500 5h5.500v8h-5.500z" fill="#a4d484"/><path d="M1.500 4.500l4-3h11v10.500l-4 4h-11zM1.500 4.500h11v11.500M12.500 4.500l4-3" fill="none" stroke="#6e7a64" stroke-width=".7"/><path d="M5.500 1.500v10.500h11M5.500 12l-4 4" fill="none" stroke="#6e7a64" stroke-width=".5" opacity=".7"/></svg>
<svg class="a" style="left:101px;top:122px;" width="18" height="18" viewBox="0 0 18 18"><path d="M5 5l6-2.500v10.500l-6 3z" fill="#8fc46b" stroke="#6a9a4c" stroke-width=".6"/><path d="M5 5h5v9h-5z" fill="#a4d484" opacity=".8"/><path d="M1.500 4.500l4-3h11v10.500l-4 4h-11zM1.500 4.500h11v11.500M12.500 4.500l4-3" fill="none" stroke="#6e7a64" stroke-width=".7"/><path d="M5.500 1.500v10.500h11M5.500 12l-4 4" fill="none" stroke="#6e7a64" stroke-width=".5" opacity=".7"/></svg>
<svg class="a" style="left:127px;top:122px;" width="18" height="18" viewBox="0 0 18 18"><path d="M1.500 4.500l3-2.500h3v6h-3l-3 2zM10 4h6v9l-3 2.500h-3z" fill="#8fc46b" stroke="#6a9a4c" stroke-width=".6"/><path d="M1.500 4.500l4-3h11v10.500l-4 4h-11zM1.500 4.500h11v11.500M12.500 4.500l4-3" fill="none" stroke="#6e7a64" stroke-width=".7"/><path d="M5.500 1.500v10.500h11M5.500 12l-4 4" fill="none" stroke="#6e7a64" stroke-width=".5" opacity=".7"/></svg>
<svg class="a" style="left:153px;top:122px;" width="18" height="18" viewBox="0 0 18 18"><path d="M1.500 4.500l7-3.500 8 3.500v9l-8 4-7-4z" fill="#cfe4f4" stroke="#70848c" stroke-width=".8"/><path d="M1.500 4.500l7.500 3 7.500-3M9 7.500v10" fill="none" stroke="#70848c" stroke-width=".6"/><path d="M4 6l4.500-2 4.500 2v5l-4.500 2.500-4.500-2.500z" fill="#8fc46b" stroke="#6a9a4c" stroke-width=".5"/><path d="M4 6l4.500 2v5.500" fill="none" stroke="#6a9a4c" stroke-width=".5"/><path d="M4 6l4.500 2 0 5.500-4.500-2.500z" fill="#6aa048"/></svg>
<svg class="a" style="left:179px;top:122px;" width="18" height="18" viewBox="0 0 18 18"><circle cx="9" cy="9" r="6.500" fill="#cfe0f0" stroke="#7890a8" stroke-width=".8"/><ellipse cx="9" cy="9" rx="6.500" ry="2.500" fill="none" stroke="#7890a8" stroke-width=".5"/><ellipse cx="9" cy="9" rx="2.500" ry="6.500" fill="none" stroke="#7890a8" stroke-width=".5"/><g fill="#8fc46b" stroke="#6a9a4c" stroke-width=".4"><path d="M9 .2l2.200 3h-4.400z"/><path d="M9 17.800l2.200-3h-4.400z"/><path d="M.2 9l3-2.200v4.400z"/><path d="M17.800 9l-3-2.200v4.400z"/></g><circle cx="9" cy="9" r="1.600" fill="#e8e8f0" stroke="#7890a8" stroke-width=".4"/></svg>
<svg class="a" style="left:206px;top:122px;" width="18" height="18" viewBox="0 0 18 18"><circle cx="6" cy="9" r="3" fill="#d0d0d0" stroke="#bcbcbc" stroke-width=".6"/><path d="M1.500 3c4-1 7 1 10 1.500s4-.5 5.500-.5M1.500 15c4 1 7-1 10-1.500s4 .5 5.500.5M10 7c2.500-.8 5-.5 7.500-.5M10 11c2.500.8 5 .5 7.500.5M1.500 5.500c3-1 5 0 7 .5M1.500 12.500c3 1 5 0 7-.5" fill="none" stroke="#c6c6c6" stroke-width=".9"/></svg>
<svg class="a" style="left:232px;top:122px;" width="18" height="18" viewBox="0 0 18 18"><path d="M1.500 15.500v-4.500c3-1 6-3.500 8-8l5.500 2c0 3 .5 7 1.500 10.500z" fill="#c6c6c6" stroke="#b0b0b0" stroke-width=".7"/><path d="M9.500 3l-3 2c-1 3-3 5-5 6" fill="none" stroke="#b8b8b8" stroke-width=".6"/><path d="M5.500 15.500c1.500-4 3.500-7 6-9" fill="none" stroke="#dadada" stroke-width="1"/></svg>
<svg class="a" style="left:258px;top:122px;" width="18" height="18" viewBox="0 0 18 18"><circle cx="9" cy="9" r="7.800" fill="#ececec" stroke="#b4b4b4" stroke-width="1"/><circle cx="11" cy="10.500" r="3.200" fill="#8fc46b" stroke="#6a9a4c" stroke-width=".5"/><circle cx="6.500" cy="5.500" r="1.800" fill="#d4d4d4" stroke="#bbb" stroke-width=".5"/><circle cx="5" cy="11.500" r="1.500" fill="#b8d8a0" stroke="#9c9" stroke-width=".4"/></svg>
<svg class="a" style="left:284px;top:122px;" width="18" height="18" viewBox="0 0 18 18"><circle cx="10" cy="10.500" r="6.800" fill="#e8e8e8" stroke="#bdbdbd" stroke-width="1"/><circle cx="3.500" cy="3" r="2.200" fill="#ececec" stroke="#bdbdbd" stroke-width=".9"/><path d="M5 4.500l2 2" stroke="#bdbdbd" stroke-width=".9"/><circle cx="12" cy="11" r="2.600" fill="#d4d4d4" stroke="#c0c0c0" stroke-width=".6"/><circle cx="7" cy="12.500" r="1.400" fill="#d8d8d8" stroke="#c0c0c0" stroke-width=".5"/></svg>
<div class="a" style="left:312px;top:121px;width:5px;height:20px;background-image:radial-gradient(circle,#cdcdcd 0.600px,transparent 0.800px);background-size:2.500px 2.500px"></div>
<svg class="a" style="left:324px;top:122px;" width="18" height="18" viewBox="0 0 18 18"><path d="M2.500 1v15.500h14" fill="none" stroke="#6a6a60" stroke-width="1"/><path d="M9.500 3v11" stroke="#3080d0" stroke-width="1.200"/><path d="M9.500 2.500l2 2.500-2 2.500 2 2.500-2 2.500-2-2.500 2-2.500-2-2.500z" fill="#8cc0f0" stroke="#2f78c4" stroke-width=".6"/></svg>
<svg class="a" style="left:350px;top:122px;" width="18" height="18" viewBox="0 0 18 18"><path d="M1.500 1.500h12v7h-5v5h-7z" fill="#cfe2f6" stroke="#7894b4" stroke-width=".9"/><rect x="10.500" y="10.500" width="6.500" height="6.500" fill="#8fc46b" stroke="#6a9a4c" stroke-width=".6"/><path d="M10.500 13.700h6.500M13.700 10.500v6.500" stroke="#b4dc9c" stroke-width=".5"/></svg>
<svg class="a" style="left:376px;top:122px;" width="18" height="18" viewBox="0 0 18 18"><path d="M1.500 .5v16.500h16" fill="none" stroke="#5a5040" stroke-width="1"/><rect x="3" y="12" width="2.200" height="4.500" fill="#2468c8"/><rect x="5.200" y="8.500" width="2.200" height="8" fill="#2a90d8"/><rect x="7.400" y="4" width="2.200" height="12.500" fill="#38a858"/><rect x="9.600" y="1" width="2.200" height="15.500" fill="#58b840"/><rect x="11.800" y="6" width="2.200" height="10.500" fill="#b8d030"/><rect x="14" y="10" width="2.200" height="6.500" fill="#f0d020"/><rect x="16" y="13" width="1.800" height="3.500" fill="#f0a020"/></svg>
<svg class="a" style="left:402px;top:122px;" width="18" height="18" viewBox="0 0 18 18"><circle cx="4.8" cy="5" r="3.6" fill="#eef4fa" stroke="#7088a0" stroke-width=".9"/><path d="M4.8 2.8v2.300l1.700 1" fill="none" stroke="#506880" stroke-width=".8"/><circle cx="13" cy="5" r="3.800" fill="#b08a48" stroke="#907030" stroke-width=".5"/><path d="M1 16.500h16" stroke="#2f74c0" stroke-width=".8"/><path d="M1.500 14.500l1-2.500 1 2.500 1-3 1 3 1-2.500 1 2.500 1-3 1 3 1-2.500 1 2.500 1-3 1 3 1-2.500 1 2.500 1-2" fill="none" stroke="#2f74c0" stroke-width=".9"/></svg>
<svg class="a" style="left:428px;top:122px;" width="18" height="18" viewBox="0 0 18 18"><path d="M2 3.500l11-2.500 4 3.500-3.500 12.500-9.500-1.500z" fill="#8fc46b" stroke="#6a9a4c" stroke-width=".6"/><path d="M2.500 14.500l13-11" stroke="#2f78c8" stroke-width="2.600"/><path d="M2.500 14.500l13-11" stroke="#88c0f0" stroke-width=".7" stroke-dasharray="1.200 1"/><path d="M14 1l3 2.800" stroke="#2f78c8" stroke-width="1"/></svg>
<svg class="a" style="left:454px;top:122px;" width="18" height="18" viewBox="0 0 18 18"><circle cx="4.8" cy="5" r="3.6" fill="#eef4fa" stroke="#7088a0" stroke-width=".9"/><path d="M4.8 2.8v2.300l1.700 1" fill="none" stroke="#506880" stroke-width=".8"/><rect x="10" y="1.500" width="7" height="7" fill="none" stroke="#999" stroke-width=".6" stroke-dasharray="1 1"/><path d="M11.500 7l2-4 2 4z" fill="#8fc46b"/><rect x="12" y="3.500" width="3" height="2.500" fill="#9c9" opacity=".7"/><path d="M1 16.500h16" stroke="#2f74c0" stroke-width=".8"/><path d="M1.500 14.500l1-2.500 1 2.500 1-3 1 3 1-2.500 1 2.500 1-3 1 3 1-2.500 1 2.500 1-3 1 3 1-2.500 1 2.500 1-2" fill="none" stroke="#2f74c0" stroke-width=".9"/></svg>
<svg class="a" style="left:481px;top:122px;" width="18" height="18" viewBox="0 0 18 18"><path d="M2 3.500l7-2.500 7 2.500v7c0 3.500-3 6-7 7-4-1-7-3.500-7-7z" fill="#cfe2f4" stroke="#b4cce4" stroke-width=".7"/><path d="M9 4v10M4.700 6.500l8.600 5M13.300 6.500l-8.600 5" stroke="#5a7088" stroke-width=".9"/></svg>
<svg class="a" style="left:507px;top:122px;" width="18" height="18" viewBox="0 0 18 18"><text x="0" y="14" font-family="Liberation Sans" font-size="17" fill="#6a7480">{</text><text x="12" y="14" font-family="Liberation Sans" font-size="17" fill="#6a7480">}</text><circle cx="6" cy="12" r="1" fill="#3080c8"/><circle cx="9" cy="12" r="1" fill="#3080c8"/><circle cx="12" cy="12" r="1" fill="#3080c8"/></svg>
<div class="a" style="left:535px;top:121px;width:5px;height:20px;background-image:radial-gradient(circle,#cdcdcd 0.600px,transparent 0.800px);background-size:2.500px 2.500px"></div>
<svg class="a" style="left:549px;top:122px;" width="18" height="18" viewBox="0 0 18 18"><path d="M1 13.500l12.500-12.500 4 4-12.500 12.500z" fill="#f0b81c" stroke="#c08c10" stroke-width=".8"/><path d="M4 11l1.500 1.500M6 9l1.500 1.500M8 7l1.500 1.500M10 5l1.500 1.500M12 3l1.500 1.500" stroke="#b07c08" stroke-width=".7"/></svg>
<svg class="a" style="left:576px;top:122px;" width="18" height="18" viewBox="0 0 18 18"><path d="M3.500 17l-2.500-8c-.5-4 3.500-8.500 9-8.500 3 0 5.500 1.500 7 3.500z" fill="#f0b81c" stroke="#c08c10" stroke-width=".8"/><path d="M5.500 11.500l-.8-2.800c0-2.500 2.500-4.500 5-4.500 1.200 0 2.200.5 3 1z" fill="#efefef" stroke="#c08c10" stroke-width=".6"/></svg>
<svg class="a" style="left:262px;top:152px" width="9" height="9" viewBox="0 0 9 9"><rect x=".5" y=".5" width="8" height="8" rx="1.500" fill="none" stroke="#777" stroke-width=".9"/><circle cx="4.200" cy="4.800" r="2" fill="none" stroke="#777" stroke-width=".8"/><path d="M3.500 2h3.500v3.500" fill="none" stroke="#777" stroke-width=".7"/></svg>
<svg class="a" style="left:273px;top:152px" width="9" height="9" viewBox="0 0 9 9"><rect x=".5" y=".5" width="8" height="8" rx="1.500" fill="none" stroke="#666" stroke-width=".9"/><path d="M2.500 2.500l4 4M6.500 2.500l-4 4" stroke="#555" stroke-width="1.100"/></svg>
<svg class="a" style="left:262px;top:336px" width="9" height="9" viewBox="0 0 9 9"><rect x=".5" y=".5" width="8" height="8" rx="1.500" fill="none" stroke="#777" stroke-width=".9"/><circle cx="4.200" cy="4.800" r="2" fill="none" stroke="#777" stroke-width=".8"/><path d="M3.500 2h3.500v3.500" fill="none" stroke="#777" stroke-width=".7"/></svg>
<svg class="a" style="left:273px;top:336px" width="9" height="9" viewBox="0 0 9 9"><rect x=".5" y=".5" width="8" height="8" rx="1.500" fill="none" stroke="#666" stroke-width=".9"/><path d="M2.500 2.500l4 4M6.500 2.500l-4 4" stroke="#555" stroke-width="1.100"/></svg>
<svg class="a" style="left:12px;top:187px" width="12" height="8" viewBox="0 0 12 8"><path d="M.5 4c2-3.500 9-3.500 11 0-2 3.500-9 3.500-11 0z" fill="#fff" stroke="#8aaad0" stroke-width=".7"/><circle cx="6" cy="4" r="3" fill="#3a6aa8"/><circle cx="6" cy="4" r="2" fill="#10101c"/><circle cx="7" cy="3" r=".8" fill="#fff"/></svg>
<div class="a" style="left:61px;top:163px;width:1px;height:5px;background:#bdbdbd"></div>
<div class="a" style="left:61px;top:179px;width:1px;height:7px;background:#bdbdbd"></div>
<svg class="a" style="left:57px;top:168px" width="8" height="11" viewBox="0 0 8 11"><rect x=".5" y=".5" width="7" height="10" rx="1" fill="#9a9a9a" stroke="#2a2a2a" stroke-width="1"/><rect x="2" y="1.500" width="4" height="2.500" fill="#e8e8e8"/><rect x="2" y="5" width="4" height="3.500" fill="#777"/></svg>
<svg class="a" style="left:55px;top:186px" width="12" height="11" viewBox="0 0 12 11"><path d="M.5 3l2.500-2.500h8.500v7.500l-2.500 2.500h-8.500z" fill="#4f9e5a" stroke="#3a7a48" stroke-width=".7"/><path d="M.5 3h8.500v7.500M9 3l2.500-2.500" fill="none" stroke="#3a7a48" stroke-width=".5"/></svg>
<svg class="a" style="left:21px;top:359px" width="13" height="13" viewBox="0 0 13 13"><path d="M1 6l3-1.500 3 1v5l-3 1.500-3-1z" fill="#c8c8c8" stroke="#b0b0b0" stroke-width=".6"/><path d="M6 5l3.500-3.500-1.500-1 4.500-.5-.5 4.500-1-1.500-3.500 3.500z" fill="#c4c4c4"/></svg>
<svg class="a" style="left:88px;top:359px" width="13" height="13" viewBox="0 0 13 13"><circle cx="6.500" cy="6.500" r="5" fill="none" stroke="#8c8c8c" stroke-width="1.800"/><path d="M3 10l7-7" stroke="#8c8c8c" stroke-width="1.800"/></svg>
<svg class="a" style="left:153px;top:360px" width="11" height="11" viewBox="0 0 11 11"><path d="M1.500 1.500l8 8M9.500 1.500l-8 8" stroke="#e02626" stroke-width="2.800"/></svg>
<div class="x" style="left:226px;top:359px;font-size:13px;font-family:'Liberation Sans',sans-serif;font-weight:bold;color:#86b060;transform:scaleX(1);transform-origin:0 50%;">?</div>
<svg class="a" style="left:261px;top:384px" width="12" height="12" viewBox="0 0 12 12"><circle cx="6" cy="6" r="3.600" fill="none" stroke="#b4b4b4" stroke-width="2.200" stroke-dasharray="1.700 1.130"/><circle cx="6" cy="6" r="3" fill="none" stroke="#b4b4b4" stroke-width="1.400"/></svg>
<svg class="a" style="left:170px;top:409px" width="14" height="13" viewBox="0 0 14 13"><rect x="1" y="3" width="7" height="9" fill="#d0d0d0" stroke="#b4b4b4" stroke-width=".7"/><rect x="5" y="1" width="7" height="9" fill="#dcdcdc" stroke="#b4b4b4" stroke-width=".7"/></svg>
<svg class="a" style="left:195px;top:409px" width="14" height="13" viewBox="0 0 14 13"><rect x="1" y="2.500" width="8" height="10" fill="#cfcfcf" stroke="#b4b4b4" stroke-width=".7"/><rect x="3" y="1" width="4" height="2.500" fill="#bdbdbd"/><rect x="6" y="5" width="7" height="7.500" fill="#e0e0e0" stroke="#b4b4b4" stroke-width=".7"/></svg>
<svg class="a" style="left:221px;top:408px" width="14" height="14" viewBox="0 0 14 14"><path d="M2.500 6a4.600 4.600 0 0 1 8.300-1.800" fill="none" stroke="#2c86b8" stroke-width="2"/><path d="M12.500 1.500v4.500h-4.500z" fill="#2c86b8"/><path d="M11.500 8a4.600 4.600 0 0 1-8.300 1.800" fill="none" stroke="#2c86b8" stroke-width="2"/><path d="M1.500 12.500v-4.500h4.500z" fill="#2c86b8"/></svg>
<svg class="a" style="left:247px;top:408px" width="14" height="15" viewBox="0 0 14 15"><path d="M5 1h4v5h2.500l-4.500 5.500-4.500-5.500h2.500z" fill="#c8dc30" stroke="#7a9010" stroke-width=".8"/><path d="M2 13.500h10" stroke="#555" stroke-width="1.200"/></svg>
<svg class="a" style="left:298px;top:153px" width="13" height="12" viewBox="0 0 13 12"><rect x=".8" y=".8" width="11.400" height="10.400" fill="#fff" stroke="#222" stroke-width="1.300"/><rect x=".8" y=".8" width="11.400" height="2.600" fill="#222"/></svg>
<svg class="a" style="left:371px;top:155px" width="9" height="9" viewBox="0 0 9 9"><rect x=".5" y=".5" width="8" height="8" rx="1.500" fill="#e4e4e4" stroke="#888" stroke-width=".9"/><path d="M2.500 2.500l4 4M6.500 2.500l-4 4" stroke="#444" stroke-width="1.100"/></svg>
<svg class="a" style="left:293px;top:174px;" width="14" height="14" viewBox="0 0 18 18"><rect x="1" y="4" width="16" height="11" rx="2" fill="#bcbcbc" stroke="#909090" stroke-width=".8"/><rect x="5.500" y="2" width="7" height="3" fill="#bcbcbc" stroke="#909090" stroke-width=".6"/><circle cx="9" cy="9.500" r="4" fill="#dde8f2" stroke="#909090" stroke-width="1"/><path d="M.5 14l5-4v2.500c3.500 0 5.500 1.500 5.500 3.500 0 1-.5 1.800-1.200 2.300.2-1.800-1.300-2.800-4.300-2.800v2.500z" fill="#e02828" stroke="#b01818" stroke-width=".4"/></svg>
<svg class="a" style="left:314px;top:174px;" width="14" height="14" viewBox="0 0 18 18"><rect x="1" y="4" width="16" height="11" rx="2" fill="#d8d8d8" stroke="#c4c4c4" stroke-width=".8"/><rect x="5.500" y="2" width="7" height="3" fill="#d8d8d8" stroke="#c4c4c4" stroke-width=".6"/><circle cx="9" cy="9.500" r="4" fill="#e8e8e8" stroke="#c4c4c4" stroke-width="1"/><path d="M17.500 14l-5-4v2.500c-3.500 0-5.500 1.500-5.500 3.500 0 1 .5 1.800 1.200 2.300-.2-1.800 1.300-2.800 4.300-2.800v2.500z" fill="#d0d0d0" stroke="#bbb" stroke-width=".4"/></svg>
<div class="a" style="left:334px;top:173px;width:1px;height:16px;background:#d4d4d4"></div>
<svg class="a" style="left:339px;top:174px;" width="15" height="14" viewBox="0 0 18 18"><rect x="1" y="4" width="16" height="11" rx="2" fill="#bcbcbc" stroke="#909090" stroke-width=".8"/><rect x="5.500" y="2" width="7" height="3" fill="#bcbcbc" stroke="#909090" stroke-width=".6"/><circle cx="9" cy="9.500" r="4" fill="#dde8f2" stroke="#909090" stroke-width="1"/><path d="M.5 4v-3.500h3.500M14 .5h3.500v3.500M17.500 14v3.500h-3.500M4 17.500h-3.500v-3.500" fill="none" stroke="#aaa" stroke-width=".8"/></svg>
<div class="x" style="left:366.5px;top:177px;font-size:9px;font-family:'Liberation Sans',sans-serif;font-weight:bold;color:#74745e;transform:scaleX(1);transform-origin:0 50%;">3D</div>
<svg class="a" style="left:387px;top:173px;" width="14" height="15" viewBox="0 0 18 18"><rect x="1" y="2" width="12" height="9" rx="1.500" fill="#bcbcbc" stroke="#909090" stroke-width=".7"/><circle cx="8.500" cy="7.500" r="4.200" fill="#dde8f2" stroke="#888" stroke-width="1.200"/><path d="M11.500 11l5 5.500" stroke="#c8a030" stroke-width="2.400" stroke-linecap="round"/></svg>
<div class="a" style="left:406px;top:173px;width:1px;height:16px;background:#d4d4d4"></div>
<svg class="a" style="left:412px;top:173px;" width="15" height="15" viewBox="0 0 18 18"><rect x="1" y="1" width="16" height="16" fill="none" stroke="#8a8a8a" stroke-width="1" stroke-dasharray="2 2"/><path d="M9 4.500l3.500 4.500-3.500 4.500-3.500-4.500z" fill="#8fc46b" stroke="#6a9a4c" stroke-width=".5"/><path d="M9 5.500v7M5.800 9h6.400" stroke="#5a9a3a" stroke-width="1"/></svg>
<svg class="a" style="left:432px;top:173px;" width="15" height="15" viewBox="0 0 18 18"><rect x="1" y="1" width="16" height="16" fill="none" stroke="#8a8a8a" stroke-width="1" stroke-dasharray="2 2"/><rect x="4" y="7.500" width="10" height="3" rx=".5" fill="#e02020"/></svg>
<svg class="a" style="left:453px;top:173px;" width="15" height="15" viewBox="0 0 18 18"><rect x="1" y="1" width="16" height="16" fill="none" stroke="#8a8a8a" stroke-width="1" stroke-dasharray="2 2"/><path d="M8 2.500l3.500 3-3.500 3-3.500-3z" fill="#8fc46b" stroke="#6a9a4c" stroke-width=".5"/><rect x="3.500" y="10.500" width="8" height="2.600" fill="#e02020"/><path d="M10.5 9.5l5.500 5-2.300.2 1.200 2.400-1.100.5-1.200-2.400-1.700 1.500z" fill="#444" stroke="#eee" stroke-width=".3"/></svg>
<div class="a" style="left:473px;top:173px;width:1px;height:16px;background:#d4d4d4"></div>
<svg class="a" style="left:479px;top:173px;" width="15" height="15" viewBox="0 0 18 18"><rect x="1" y="1" width="16" height="16" fill="none" stroke="#8a8a8a" stroke-width="1" stroke-dasharray="2 2"/><path d="M8.500 3l6 11h-12z" fill="#8fc46b" stroke="#6a9a4c" stroke-width=".7"/><path d="M11 10l5.500 5-2.300.2 1.200 2.400-1.100.5-1.200-2.400-1.700 1.500z" fill="#444" stroke="#eee" stroke-width=".3"/></svg>
<svg class="a" style="left:500px;top:173px;" width="15" height="15" viewBox="0 0 18 18"><rect x="1" y="1" width="16" height="16" fill="none" stroke="#8a8a8a" stroke-width="1" stroke-dasharray="2 2"/><rect x="8" y="2" width="2.500" height="2.500" fill="#e03030"/><rect x="3" y="11" width="2.500" height="2.500" fill="#e03030"/><rect x="13" y="5" width="2" height="2" fill="#e03030" opacity=".6"/><path d="M10.5 9.5l5.500 5-2.300.2 1.200 2.400-1.100.5-1.200-2.400-1.700 1.500z" fill="#444" stroke="#eee" stroke-width=".3"/></svg>
<svg class="a" style="left:522px;top:173px;" width="15" height="15" viewBox="0 0 18 18"><path d="M1.500 7l7-5.500h8v7l-4 4h-11z" fill="#8fc46b" stroke="#6a9a4c" stroke-width=".8"/><path d="M1.500 7h11l4-5.500M12.500 7v5.500" fill="none" stroke="#6a9a4c" stroke-width=".6"/><path d="M8.5 10.5l5.500 5-2.300.2 1.200 2.400-1.100.5-1.200-2.400-1.700 1.500z" fill="#444" stroke="#eee" stroke-width=".3"/></svg>
<svg class="a" style="left:543px;top:173px;" width="15" height="15" viewBox="0 0 18 18"><path d="M2 5.500l5-3.500h9v9l-4 4.500h-10z M2 5.500h10v10M12 5.500l4-3.500" fill="none" stroke="#e06060" stroke-width=".9" stroke-dasharray="1.500 1"/><path d="M4 8h5v5h-5z" fill="none" stroke="#e04040" stroke-width=".8"/><path d="M10 11l5.500 5-2.300.2 1.200 2.400-1.100.5-1.200-2.400-1.700 1.500z" fill="#444" stroke="#eee" stroke-width=".3"/></svg>
<svg class="a" style="left:677px;top:175px" width="13" height="13" viewBox="0 0 13 13"><rect x=".5" y=".5" width="12" height="12" fill="#c8d2f0" stroke="#8a8a9a" stroke-width="1"/><path d="M6.500 .5v12" stroke="#8a8a9a" stroke-width="1"/></svg>
<svg class="a" style="left:699px;top:175px" width="13" height="13" viewBox="0 0 13 13"><rect x=".5" y=".5" width="12" height="12" fill="#c8d2f0" stroke="#8a8a9a" stroke-width="1"/><path d="M.5 6.500h12" stroke="#8a8a9a" stroke-width="1"/></svg>
<svg class="a" style="left:720px;top:174px" width="15" height="15" viewBox="0 0 15 15"><rect x="1" y="1" width="13" height="13" fill="#fff" stroke="#222" stroke-width="1.600"/><rect x="1" y="1" width="13" height="3" fill="#222"/></svg>
<svg class="a" style="left:744px;top:177px" width="9" height="9" viewBox="0 0 9 9"><rect x=".5" y=".5" width="8" height="8" rx="1.200" fill="none" stroke="#666" stroke-width=".9"/><path d="M2.500 2.500l4 4M6.500 2.500l-4 4" stroke="#444" stroke-width="1.100"/></svg>
<svg class="a" style="left:255px;top:605px" width="9" height="10" viewBox="0 0 9 10"><path d="M2 2l5 6M7 2l-5 6M1.500 5h6" stroke="#888" stroke-width="1.300"/></svg>
<svg class="a" style="left:290px;top:191px" width="469" height="404" viewBox="0 0 469 404">
<defs><clipPath id="mc"><path d="M91.6 33.0L102.8 34.3L114.0 35.5L125.2 36.8L136.4 38.0L147.6 39.2L158.8 40.5L170.0 41.8L181.2 43.0L192.4 44.2L203.6 45.5L214.8 46.8L226.0 48.0L237.2 49.2L248.4 50.5L259.6 51.8L270.8 53.0L282.0 54.2L293.2 55.5L304.4 56.8L315.6 58.0L326.8 59.2L338.0 60.5L349.2 61.8L360.4 63.0L360.4 74.6L360.3 86.2L360.2 97.8L360.0 109.3L359.8 120.9L359.5 132.5L359.1 144.1L358.7 155.7L358.2 167.2L357.6 178.8L356.9 190.4L356.2 202.0L355.4 213.6L354.5 225.2L353.5 236.8L352.4 248.3L351.3 259.9L350.1 271.5L348.8 283.1L347.4 294.7L345.9 306.2L344.4 317.8L342.7 329.4L341.0 341.0L329.8 340.8L318.5 340.5L307.2 340.2L296.0 339.9L284.8 339.6L273.5 339.2L262.2 338.8L251.0 338.4L239.8 338.0L228.5 337.6L217.2 337.1L206.0 336.6L194.8 336.1L183.5 335.6L172.2 335.0L161.0 334.4L149.8 333.8L138.5 333.2L127.2 332.6L116.0 331.9L104.8 331.2L93.5 330.5L82.2 329.8L71.0 329.0L73.1 316.7L75.0 304.3L76.8 292.0L78.5 279.7L80.1 267.3L81.6 255.0L82.9 242.7L84.1 230.3L85.2 218.0L86.2 205.7L87.2 193.3L88.0 181.0L88.7 168.7L89.3 156.3L89.8 144.0L90.3 131.7L90.7 119.3L91.0 107.0L91.2 94.7L91.4 82.3L91.5 70.0L91.6 57.7L91.6 45.3z"/></clipPath><filter id="bl" x="-5%" y="-5%" width="110%" height="110%"><feGaussianBlur stdDeviation="0.7"/></filter>
<linearGradient id="lg" x1="0" y1="1" x2="0" y2="0">
<stop offset="0.0000" stop-color="#0e0e78"/>
<stop offset="0.1716" stop-color="#3e75cf"/>
<stop offset="0.2985" stop-color="#5bbef3"/>
<stop offset="0.4321" stop-color="#afedea"/>
<stop offset="0.5000" stop-color="#ecf3e1"/>
<stop offset="0.5882" stop-color="#f4d582"/>
<stop offset="0.7061" stop-color="#ed9e50"/>
<stop offset="0.8476" stop-color="#cc5a29"/>
<stop offset="1.0000" stop-color="#96141e"/>
</linearGradient></defs>
<rect x=".3" y=".3" width="468" height="403.500" fill="#615c58"/>
<g clip-path="url(#mc)"><g filter="url(#bl)">
<path d="M91.6 33.0L102.8 34.3L114.0 35.5L125.2 36.8L136.4 38.0L147.6 39.2L158.8 40.5L170.0 41.8L181.2 43.0L192.4 44.2L203.6 45.5L214.8 46.8L226.0 48.0L237.2 49.2L248.4 50.5L259.6 51.8L270.8 53.0L282.0 54.2L293.2 55.5L304.4 56.8L315.6 58.0L326.8 59.2L338.0 60.5L349.2 61.8L360.4 63.0L360.4 74.6L360.3 86.2L360.2 97.8L360.0 109.3L359.8 120.9L359.5 132.5L359.1 144.1L358.7 155.7L358.2 167.2L357.6 178.8L356.9 190.4L356.2 202.0L355.4 213.6L354.5 225.2L353.5 236.8L352.4 248.3L351.3 259.9L350.1 271.5L348.8 283.1L347.4 294.7L345.9 306.2L344.4 317.8L342.7 329.4L341.0 341.0L329.8 340.8L318.5 340.5L307.2 340.2L296.0 339.9L284.8 339.6L273.5 339.2L262.2 338.8L251.0 338.4L239.8 338.0L228.5 337.6L217.2 337.1L206.0 336.6L194.8 336.1L183.5 335.6L172.2 335.0L161.0 334.4L149.8 333.8L138.5 333.2L127.2 332.6L116.0 331.9L104.8 331.2L93.5 330.5L82.2 329.8L71.0 329.0L73.1 316.7L75.0 304.3L76.8 292.0L78.5 279.7L80.1 267.3L81.6 255.0L82.9 242.7L84.1 230.3L85.2 218.0L86.2 205.7L87.2 193.3L88.0 181.0L88.7 168.7L89.3 156.3L89.8 144.0L90.3 131.7L90.7 119.3L91.0 107.0L91.2 94.7L91.4 82.3L91.5 70.0L91.6 57.7L91.6 45.3z" fill="#b07040"/>
<path fill="#6cb2c0" stroke="#6cb2c0" stroke-width="1" d="M91.6 33.0L98.3 33.8L98.3 39.4L91.6 38.7zM165.5 46.9L172.2 47.6L172.2 53.2L165.5 52.5zM138.5 77.8L145.2 78.5L145.1 84.1L138.4 83.4zM178.8 82.0L185.5 82.7L185.4 88.3L178.7 87.6zM97.5 113.4L104.2 114.0L104.1 119.7L97.4 119.0zM92.2 215.7L98.9 216.3L98.4 222.0L91.7 221.4zM287.8 334.2L294.6 334.4L293.8 339.8L287.0 339.6z"/>
<path fill="#66afbf" stroke="#66afbf" stroke-width="1" d="M98.3 33.8L105.0 34.5L105.0 40.2L98.3 39.4zM286.5 54.8L293.2 55.5L293.2 61.0L286.5 60.2zM172.2 58.8L178.9 59.6L178.9 65.2L172.2 64.5zM172.2 64.5L178.9 65.2L178.9 70.8L172.2 70.1zM172.2 70.1L178.9 70.8L178.8 76.4L172.1 75.7zM172.1 75.7L178.8 76.4L178.8 82.0L172.1 81.3zM124.8 93.4L131.6 94.1L131.5 99.7L124.7 99.0zM91.0 107.0L97.7 107.7L97.5 113.4L90.8 112.7zM111.0 114.7L117.7 115.4L117.5 121.0L110.8 120.4z"/>
<path fill="#61abbf" stroke="#61abbf" stroke-width="1" d="M105.0 34.5L111.8 35.3L111.8 40.9L105.0 40.2zM245.8 100.0L252.5 100.6L252.4 106.1L245.7 105.5zM91.1 101.3L97.8 102.0L97.7 107.7L91.0 107.0zM102.0 170.8L108.7 171.4L108.4 177.1L101.7 176.5zM209.0 185.7L215.7 186.2L215.4 191.8L208.7 191.2zM85.9 209.5L92.7 210.0L92.2 215.7L85.5 215.2z"/>
<path fill="#5ea8be" stroke="#5ea8be" stroke-width="1" d="M111.8 35.3L118.5 36.0L118.5 41.7L111.8 40.9zM98.3 45.1L105.0 45.9L105.0 51.5L98.3 50.8zM125.0 82.0L131.7 82.7L131.6 88.4L124.9 87.7zM91.2 95.6L97.9 96.3L97.8 102.0L91.1 101.3zM111.3 97.7L118.0 98.4L117.9 104.0L111.2 103.3zM265.5 123.9L272.2 124.6L272.1 130.0L265.3 129.4zM150.7 135.6L157.4 136.2L157.2 141.8L150.5 141.2zM108.1 182.8L114.8 183.4L114.4 189.1L107.7 188.5zM208.7 191.2L215.4 191.8L215.0 197.3L208.3 196.8zM271.6 306.2L278.3 306.5L277.6 311.9L270.8 311.6z"/>
<path fill="#5da8be" stroke="#5da8be" stroke-width="1" d="M118.5 36.0L125.2 36.8L125.2 42.4L118.5 41.7zM137.3 134.3L144.0 134.9L143.8 140.6L137.1 139.9zM166.4 216.0L173.1 216.6L172.7 222.2L166.0 221.7z"/>
<path fill="#5fa9be" stroke="#5fa9be" stroke-width="1" d="M125.2 36.8L131.9 37.5L131.9 43.2L125.2 42.4zM131.9 60.1L138.6 60.8L138.6 66.5L131.9 65.8zM131.9 65.8L138.6 66.5L138.5 72.1L131.8 71.4zM118.1 92.7L124.8 93.4L124.7 99.0L118.0 98.4zM97.8 102.0L104.5 102.7L104.4 108.4L97.7 107.7zM104.5 102.7L111.2 103.3L111.1 109.0L104.4 108.4zM104.1 119.7L110.8 120.4L110.7 126.0L103.9 125.4zM101.0 187.9L107.7 188.5L107.3 194.1L100.6 193.6z"/>
<path fill="#62acbf" stroke="#62acbf" stroke-width="1" d="M131.9 37.5L138.6 38.2L138.6 43.9L131.9 43.2zM98.3 39.4L105.0 40.2L105.0 45.9L98.3 45.1zM131.8 77.1L138.5 77.8L138.4 83.4L131.7 82.7zM124.9 87.7L131.6 88.4L131.6 94.1L124.8 93.4zM239.1 99.3L245.8 100.0L245.7 105.5L239.0 104.8zM252.5 100.6L259.2 101.3L259.2 106.8L252.4 106.1zM159.2 221.1L166.0 221.7L165.5 227.3L158.8 226.8z"/>
<path fill="#65afbf" stroke="#65afbf" stroke-width="1" d="M138.6 38.2L145.4 39.0L145.4 44.6L138.6 43.9zM138.6 49.5L145.4 50.3L145.3 55.9L138.6 55.2zM131.7 82.7L138.4 83.4L138.4 89.1L131.6 88.4zM97.2 124.7L103.9 125.4L103.8 131.1L97.1 130.4zM124.1 127.4L130.8 128.0L130.6 133.7L123.9 133.0zM209.6 174.5L216.3 175.1L216.0 180.7L209.3 180.1z"/>
<path fill="#6bb1c0" stroke="#6bb1c0" stroke-width="1" d="M145.4 39.0L152.1 39.8L152.1 45.4L145.4 44.6zM239.4 49.5L246.2 50.2L246.2 55.8L239.4 55.0zM239.4 55.0L246.2 55.8L246.1 61.3L239.4 60.6zM165.4 69.4L172.2 70.1L172.1 75.7L165.4 75.0z"/>
<path fill="#70b4c0" stroke="#70b4c0" stroke-width="1" d="M152.1 39.8L158.8 40.5L158.8 46.1L152.1 45.4zM179.0 42.8L185.7 43.5L185.7 49.1L179.0 48.4zM279.8 59.5L286.5 60.2L286.5 65.7L279.7 65.0zM177.8 132.5L184.5 133.1L184.3 138.7L177.6 138.1zM216.9 164.0L223.6 164.6L223.3 170.1L216.6 169.5zM111.3 228.7L118.0 229.3L117.5 234.9L110.8 234.4z"/>
<path fill="#73b6c1" stroke="#73b6c1" stroke-width="1" d="M158.8 40.5L165.5 41.2L165.5 46.9L158.8 46.1zM272.9 80.7L279.7 81.4L279.6 86.9L272.9 86.2zM145.3 72.9L152.0 73.6L151.9 79.2L145.2 78.5z"/>
<path fill="#6eb3c0" stroke="#6eb3c0" stroke-width="1" d="M165.5 41.2L172.2 42.0L172.2 47.6L165.5 46.9zM232.7 48.8L239.4 49.5L239.4 55.0L232.7 54.3zM232.7 54.3L239.4 55.0L239.4 60.6L232.7 59.8zM145.4 50.3L152.1 51.0L152.1 56.7L145.3 55.9zM172.0 86.9L178.7 87.6L178.7 93.2L171.9 92.5zM124.2 121.7L130.9 122.3L130.8 128.0L124.1 127.4zM97.1 130.4L103.8 131.1L103.6 136.8L96.9 136.1zM88.3 175.3L95.0 175.9L94.7 181.6L88.0 181.0z"/>
<path fill="#6db3c0" stroke="#6db3c0" stroke-width="1" d="M172.2 42.0L179.0 42.8L179.0 48.4L172.2 47.6zM246.2 50.2L252.9 51.0L252.9 56.5L246.2 55.8zM279.8 54.0L286.5 54.8L286.5 60.2L279.8 59.5zM179.0 48.4L185.7 49.1L185.7 54.7L179.0 54.0zM246.2 55.8L252.9 56.5L252.9 62.0L246.1 61.3zM165.4 80.6L172.1 81.3L172.0 86.9L165.3 86.2zM117.7 115.4L124.4 116.0L124.2 121.7L117.5 121.0zM164.2 136.8L170.9 137.4L170.7 143.1L164.0 142.4zM152.1 226.3L158.8 226.8L158.3 232.4L151.6 231.9z"/>
<path fill="#75b7c1" stroke="#75b7c1" stroke-width="1" d="M185.7 43.5L192.4 44.2L192.4 49.8L185.7 49.1zM158.8 46.1L165.5 46.9L165.5 52.5L158.8 51.8zM226.0 53.6L232.7 54.3L232.7 59.8L226.0 59.1zM152.1 51.0L158.8 51.8L158.8 57.4L152.1 56.7zM185.5 82.7L192.2 83.4L192.2 89.0L185.4 88.3zM259.3 95.8L266.0 96.5L266.0 102.0L259.2 101.3zM171.9 92.5L178.7 93.2L178.6 98.8L171.9 98.1zM204.9 123.8L211.6 124.4L211.5 130.0L204.8 129.4zM173.1 216.6L179.8 217.1L179.4 222.7L172.7 222.2zM118.0 229.3L124.7 229.8L124.2 235.5L117.5 234.9z"/>
<path fill="#7cbac2" stroke="#7cbac2" stroke-width="1" d="M192.4 44.2L199.1 45.0L199.1 50.6L192.4 49.8zM192.4 49.8L199.1 50.6L199.1 56.2L192.4 55.4zM192.4 55.4L199.1 56.2L199.1 61.8L192.4 61.0zM192.4 61.0L199.1 61.8L199.1 67.3L192.4 66.6zM192.4 66.6L199.1 67.3L199.0 72.9L192.3 72.2zM272.8 91.6L279.6 92.3L279.5 97.8L272.8 97.1z"/>
<path fill="#7dbbc2" stroke="#7dbbc2" stroke-width="1" d="M199.1 45.0L205.8 45.7L205.8 51.3L199.1 50.6zM252.9 62.0L259.6 62.8L259.6 68.3L252.9 67.5zM279.7 81.4L286.4 82.1L286.3 87.5L279.6 86.9zM151.9 79.2L158.6 79.9L158.6 85.5L151.9 84.8zM158.6 79.9L165.4 80.6L165.3 86.2L158.6 85.5zM266.1 91.0L272.8 91.6L272.8 97.1L266.0 96.5z"/>
<path fill="#7ebcc2" stroke="#7ebcc2" stroke-width="1" d="M205.8 45.7L212.6 46.5L212.6 52.1L205.8 51.3zM273.0 53.2L279.8 54.0L279.8 59.5L273.0 58.7zM273.0 58.7L279.8 59.5L279.7 65.0L273.0 64.2zM273.0 64.2L279.7 65.0L279.7 70.4L273.0 69.7zM138.2 100.4L144.9 101.1L144.8 106.7L138.1 106.0z"/>
<path fill="#7fbcc2" stroke="#7fbcc2" stroke-width="1" d="M212.6 46.5L219.3 47.2L219.3 52.8L212.6 52.1zM192.2 83.4L198.9 84.1L198.9 89.7L192.2 89.0zM264.8 145.9L271.5 146.5L271.3 152.0L264.6 151.4z"/>
<path fill="#7cbbc2" stroke="#7cbbc2" stroke-width="1" d="M219.3 47.2L226.0 48.0L226.0 53.6L219.3 52.8zM273.0 69.7L279.7 70.4L279.7 75.9L273.0 75.2zM185.4 88.3L192.2 89.0L192.1 94.6L185.4 93.9zM178.7 93.2L185.4 93.9L185.3 99.5L178.6 98.8zM230.3 165.1L237.0 165.7L236.8 171.2L230.0 170.7z"/>
<path fill="#74b6c1" stroke="#74b6c1" stroke-width="1" d="M226.0 48.0L232.7 48.8L232.7 54.3L226.0 53.6zM185.7 49.1L192.4 49.8L192.4 55.4L185.7 54.7zM279.7 65.0L286.5 65.7L286.4 71.1L279.7 70.4zM178.7 87.6L185.4 88.3L185.4 93.9L178.7 93.2zM138.4 89.1L145.1 89.8L145.0 95.4L138.3 94.7zM124.5 110.4L131.2 111.0L131.1 116.7L124.4 116.0z"/>
<path fill="#71b5c1" stroke="#71b5c1" stroke-width="1" d="M252.9 51.0L259.6 51.8L259.6 57.3L252.9 56.5zM145.3 55.9L152.1 56.7L152.0 62.3L145.3 61.6zM145.3 61.6L152.0 62.3L152.0 67.9L145.3 67.2zM185.6 65.9L192.4 66.6L192.3 72.2L185.6 71.5zM145.3 67.2L152.0 67.9L152.0 73.6L145.3 72.9zM185.6 71.5L192.3 72.2L192.3 77.8L185.6 77.1zM185.6 77.1L192.3 77.8L192.2 83.4L185.5 82.7zM191.7 116.9L198.4 117.6L198.2 123.2L191.5 122.5zM184.8 121.9L191.5 122.5L191.4 128.1L184.6 127.5z"/>
<path fill="#8cc3c4" stroke="#8cc3c4" stroke-width="1" d="M259.6 51.8L266.3 52.5L266.3 58.0L259.6 57.3zM205.8 62.5L212.5 63.2L212.5 68.8L205.8 68.1zM226.0 64.7L232.7 65.4L232.7 70.9L225.9 70.2zM171.0 131.8L177.8 132.5L177.6 138.1L170.9 137.4zM85.5 215.2L92.2 215.7L91.7 221.4L85.0 220.8z"/>
<path fill="#a2c8c6" stroke="#a2c8c6" stroke-width="1" d="M266.3 52.5L273.0 53.2L273.0 58.7L266.3 58.0zM144.7 112.4L151.4 113.0L151.2 118.7L144.5 118.0zM90.1 135.5L96.9 136.1L96.6 141.8L89.9 141.2zM96.6 141.8L103.4 142.4L103.1 148.1L96.4 147.5zM283.1 185.9L289.8 186.4L289.5 191.9L282.8 191.4zM88.9 249.8L95.6 250.4L95.0 256.1L88.3 255.5z"/>
<path fill="#90c5c4" stroke="#90c5c4" stroke-width="1" d="M293.2 55.5L299.9 56.2L299.9 61.7L293.2 61.0z"/>
<path fill="#e1d2a8" stroke="#e1d2a8" stroke-width="1" d="M299.9 56.2L306.6 57.0L306.6 62.4L299.9 61.7zM96.2 244.7L102.9 245.2L102.3 250.9L95.6 250.4zM116.4 246.3L123.1 246.8L122.5 252.4L115.8 251.9z"/>
<path fill="#daa758" stroke="#daa758" stroke-width="1" d="M306.6 57.0L313.4 57.8L313.4 63.2L306.6 62.4zM299.7 94.4L306.4 95.0L306.3 100.5L299.6 99.8zM156.6 249.3L163.3 249.7L162.7 255.3L156.0 254.9z"/>
<path fill="#cd843a" stroke="#cd843a" stroke-width="1" d="M313.4 57.8L320.1 58.5L320.1 63.9L313.4 63.2zM305.1 149.4L311.8 150.0L311.6 155.4L304.8 154.8zM311.6 155.4L318.3 155.9L318.0 161.4L311.3 160.8zM284.7 251.9L291.4 252.3L290.8 257.7L284.1 257.4zM148.1 265.7L154.8 266.1L154.1 271.7L147.4 271.3zM133.3 276.0L140.0 276.5L139.3 282.1L132.6 281.6zM104.9 285.4L111.6 285.9L110.9 291.6L104.2 291.1zM84.0 289.6L90.7 290.1L89.9 295.8L83.2 295.3zM216.2 314.7L222.9 315.1L222.1 320.6L215.3 320.3zM255.8 322.0L262.5 322.3L261.7 327.8L255.0 327.5z"/>
<path fill="#ca7e37" stroke="#ca7e37" stroke-width="1" d="M320.1 58.5L326.8 59.2L326.8 64.7L320.1 63.9zM244.9 244.0L251.7 244.4L251.1 249.9L244.4 249.5zM176.2 256.3L182.9 256.7L182.3 262.3L175.6 261.9zM282.4 273.7L289.1 274.1L288.4 279.5L281.7 279.2zM125.8 281.2L132.6 281.6L131.8 287.3L125.1 286.8zM76.4 294.8L83.2 295.3L82.3 301.0L75.6 300.5zM83.2 295.3L89.9 295.8L89.1 301.5L82.3 301.0zM215.3 320.3L222.1 320.6L221.2 326.1L214.5 325.8z"/>
<path fill="#c77935" stroke="#c77935" stroke-width="1" d="M326.8 59.2L333.5 60.0L333.5 65.4L326.8 64.7zM325.0 156.5L331.7 157.1L331.4 162.4L324.7 161.9zM323.6 183.5L330.4 184.0L330.0 189.4L323.3 188.9zM315.9 199.3L322.7 199.7L322.3 205.1L315.6 204.7zM241.4 204.9L248.1 205.4L247.7 210.9L241.0 210.4zM285.2 246.5L291.9 246.8L291.4 252.3L284.7 251.9zM189.0 262.8L195.7 263.2L195.1 268.8L188.3 268.3zM147.4 271.3L154.1 271.7L153.4 277.4L146.7 276.9z"/>
<path fill="#c37332" stroke="#c37332" stroke-width="1" d="M333.5 60.0L340.2 60.8L340.2 66.1L333.5 65.4zM239.7 227.0L246.4 227.5L246.0 233.0L239.2 232.5zM168.8 261.4L175.6 261.9L174.9 267.5L168.2 267.0z"/>
<path fill="#be692d" stroke="#be692d" stroke-width="1" d="M340.2 60.8L347.0 61.5L347.0 66.9L340.2 66.1zM333.4 92.4L340.1 93.0L340.0 98.4L333.3 97.7zM333.3 97.7L340.0 98.4L339.9 103.8L333.2 103.1zM295.1 208.7L301.8 209.2L301.4 214.6L294.7 214.2zM154.1 271.7L160.8 272.2L160.1 277.8L153.4 277.4zM192.3 291.1L199.1 291.4L198.3 297.0L191.6 296.6zM116.8 297.7L123.5 298.1L122.7 303.8L116.0 303.3zM94.1 313.3L100.8 313.8L99.9 319.4L93.1 319.0zM254.1 333.0L260.9 333.3L260.0 338.7L253.2 338.5z"/>
<path fill="#b35a29" stroke="#b35a29" stroke-width="1" d="M347.0 61.5L353.7 62.2L353.7 67.6L347.0 66.9zM254.5 211.4L261.2 211.9L260.7 217.4L254.0 216.9z"/>
<path fill="#b05627" stroke="#b05627" stroke-width="1" d="M353.7 62.2L360.4 63.0L360.4 68.3L353.7 67.6zM338.8 146.8L345.5 147.4L345.3 152.8L338.6 152.2zM261.2 211.9L267.9 212.3L267.4 217.8L260.7 217.4zM254.0 216.9L260.7 217.4L260.3 222.9L253.6 222.4zM160.1 277.8L166.9 278.2L166.2 283.8L159.4 283.4zM180.3 279.1L187.0 279.5L186.3 285.1L179.6 284.7zM185.6 290.7L192.3 291.1L191.6 296.6L184.9 296.3z"/>
<path fill="#69b0c0" stroke="#69b0c0" stroke-width="1" d="M91.6 38.7L98.3 39.4L98.3 45.1L91.6 44.4zM232.4 98.6L239.1 99.3L239.0 104.8L232.3 104.2z"/>
<path fill="#5da7be" stroke="#5da7be" stroke-width="1" d="M105.0 40.2L111.8 40.9L111.8 46.6L105.0 45.9zM145.4 225.7L152.1 226.3L151.6 231.9L144.8 231.4zM270.8 311.6L277.6 311.9L276.8 317.4L270.0 317.1z"/>
<path fill="#5aa4be" stroke="#5aa4be" stroke-width="1" d="M111.8 40.9L118.5 41.7L118.5 47.3L111.8 46.6zM111.4 92.0L118.1 92.7L118.0 98.4L111.3 97.7z"/>
<path fill="#59a4be" stroke="#59a4be" stroke-width="1" d="M118.5 41.7L125.2 42.4L125.2 48.1L118.5 47.3zM125.1 70.7L131.8 71.4L131.8 77.1L125.1 76.4z"/>
<path fill="#5ca6be" stroke="#5ca6be" stroke-width="1" d="M125.2 42.4L131.9 43.2L131.9 48.8L125.2 48.1zM177.6 138.1L184.3 138.7L184.1 144.3L177.4 143.7z"/>
<path fill="#60aabe" stroke="#60aabe" stroke-width="1" d="M131.9 43.2L138.6 43.9L138.6 49.5L131.9 48.8zM91.6 50.1L98.3 50.8L98.3 56.5L91.6 55.8zM265.6 118.4L272.3 119.1L272.2 124.6L265.5 123.9zM198.2 123.2L204.9 123.8L204.8 129.4L198.1 128.8z"/>
<path fill="#64aebf" stroke="#64aebf" stroke-width="1" d="M138.6 43.9L145.4 44.6L145.4 50.3L138.6 49.5zM259.2 101.3L266.0 102.0L265.9 107.5L259.2 106.8zM97.7 107.7L104.4 108.4L104.2 114.0L97.5 113.4zM211.8 118.9L218.5 119.5L218.4 125.1L211.6 124.4zM237.3 160.1L244.0 160.7L243.7 166.2L237.0 165.7zM94.7 181.6L101.4 182.2L101.0 187.9L94.3 187.3z"/>
<path fill="#6bb2c0" stroke="#6bb2c0" stroke-width="1" d="M145.4 44.6L152.1 45.4L152.1 51.0L145.4 50.3zM165.5 52.5L172.2 53.2L172.2 58.8L165.5 58.1zM165.4 75.0L172.1 75.7L172.1 81.3L165.4 80.6zM131.6 88.4L138.4 89.1L138.3 94.7L131.6 94.1zM124.7 99.0L131.5 99.7L131.4 105.4L124.6 104.7zM97.4 119.0L104.1 119.7L103.9 125.4L97.2 124.7z"/>
<path fill="#72b5c1" stroke="#72b5c1" stroke-width="1" d="M152.1 45.4L158.8 46.1L158.8 51.8L152.1 51.0zM252.9 56.5L259.6 57.3L259.6 62.8L252.9 62.0zM185.7 54.7L192.4 55.4L192.4 61.0L185.7 60.3zM185.7 60.3L192.4 61.0L192.4 66.6L185.6 65.9zM165.3 86.2L172.0 86.9L171.9 92.5L165.2 91.8zM257.9 150.8L264.6 151.4L264.4 156.9L257.7 156.3zM223.6 164.6L230.3 165.1L230.0 170.7L223.3 170.1zM82.8 243.6L89.5 244.2L88.9 249.8L82.2 249.3z"/>
<path fill="#6ab1c0" stroke="#6ab1c0" stroke-width="1" d="M172.2 47.6L179.0 48.4L179.0 54.0L172.2 53.2zM179.0 54.0L185.7 54.7L185.7 60.3L178.9 59.6zM165.5 58.1L172.2 58.8L172.2 64.5L165.5 63.7zM165.5 63.7L172.2 64.5L172.2 70.1L165.4 69.4zM117.8 109.7L124.5 110.4L124.4 116.0L117.7 115.4z"/>
<path fill="#80bcc2" stroke="#80bcc2" stroke-width="1" d="M199.1 50.6L205.8 51.3L205.8 56.9L199.1 56.2zM124.7 229.8L131.4 230.3L130.9 236.0L124.2 235.5z"/>
<path fill="#83bec3" stroke="#83bec3" stroke-width="1" d="M205.8 51.3L212.6 52.1L212.5 57.6L205.8 56.9zM199.1 56.2L205.8 56.9L205.8 62.5L199.1 61.8z"/>
<path fill="#84bfc3" stroke="#84bfc3" stroke-width="1" d="M212.6 52.1L219.3 52.8L219.3 58.4L212.5 57.6zM199.1 61.8L205.8 62.5L205.8 68.1L199.1 67.3zM259.4 90.3L266.1 91.0L266.0 96.5L259.3 95.8zM158.5 91.2L165.2 91.8L165.1 97.5L158.4 96.8zM178.6 98.8L185.3 99.5L185.2 105.1L178.5 104.4zM185.1 110.7L191.8 111.3L191.7 116.9L184.9 116.3zM216.3 175.1L223.0 175.7L222.7 181.2L216.0 180.7zM276.4 185.4L283.1 185.9L282.8 191.4L276.1 190.9zM83.4 237.9L90.1 238.5L89.5 244.2L82.8 243.6z"/>
<path fill="#80bdc2" stroke="#80bdc2" stroke-width="1" d="M219.3 52.8L226.0 53.6L226.0 59.1L219.3 58.4zM151.9 84.8L158.6 85.5L158.5 91.2L151.8 90.5zM245.9 94.4L252.6 95.1L252.5 100.6L245.8 100.0zM145.0 95.4L151.7 96.1L151.6 101.7L144.9 101.1zM184.9 116.3L191.7 116.9L191.5 122.5L184.8 121.9zM158.8 226.8L165.5 227.3L165.0 232.9L158.3 232.4z"/>
<path fill="#8ec4c4" stroke="#8ec4c4" stroke-width="1" d="M259.6 57.3L266.3 58.0L266.3 63.5L259.6 62.8zM212.5 63.2L219.3 63.9L219.2 69.5L212.5 68.8zM266.2 80.0L272.9 80.7L272.9 86.2L266.2 85.5zM259.5 84.8L266.2 85.5L266.1 91.0L259.4 90.3zM144.8 106.7L151.5 107.4L151.4 113.0L144.7 112.4zM178.2 115.6L184.9 116.3L184.8 121.9L178.1 121.2zM272.1 130.0L278.8 130.7L278.6 136.1L271.9 135.5zM286.5 295.9L293.2 296.1L292.5 301.6L285.8 301.3z"/>
<path fill="#a5c9c7" stroke="#a5c9c7" stroke-width="1" d="M266.3 58.0L273.0 58.7L273.0 64.2L266.3 63.5zM239.2 88.2L246.0 88.9L245.9 94.4L239.2 93.8zM158.2 108.0L164.9 108.7L164.8 114.3L158.1 113.7zM138.1 230.9L144.8 231.4L144.3 237.0L137.6 236.5zM81.6 255.0L88.3 255.5L87.6 261.2L80.9 260.7z"/>
<path fill="#76b7c1" stroke="#76b7c1" stroke-width="1" d="M286.5 60.2L293.2 61.0L293.2 66.4L286.5 65.7zM145.2 78.5L151.9 79.2L151.9 84.8L145.1 84.1zM131.5 99.7L138.2 100.4L138.1 106.0L131.4 105.4z"/>
<path fill="#b6ccc9" stroke="#b6ccc9" stroke-width="1" d="M293.2 61.0L299.9 61.7L299.9 67.1L293.2 66.4zM164.8 114.3L171.5 115.0L171.4 120.6L164.7 120.0zM144.5 118.0L151.2 118.7L151.1 124.3L144.4 123.6zM104.1 233.9L110.8 234.4L110.2 240.1L103.5 239.5z"/>
<path fill="#e1c785" stroke="#e1c785" stroke-width="1" d="M299.9 61.7L306.6 62.4L306.6 67.9L299.9 67.1zM144.3 237.0L151.0 237.5L150.5 243.1L143.8 242.6zM122.5 252.4L129.2 252.9L128.6 258.6L121.8 258.1zM240.6 332.5L247.4 332.8L246.5 338.3L239.8 338.0z"/>
<path fill="#d89f50" stroke="#d89f50" stroke-width="1" d="M306.6 62.4L313.4 63.2L313.3 68.6L306.6 67.9z"/>
<path fill="#ce863c" stroke="#ce863c" stroke-width="1" d="M313.4 63.2L320.1 63.9L320.1 69.3L313.3 68.6zM304.6 160.3L311.3 160.8L311.1 166.2L304.4 165.7zM231.5 243.1L238.2 243.6L237.7 249.1L231.0 248.7zM259.6 294.6L266.3 294.9L265.6 300.4L258.8 300.1zM294.6 334.4L301.3 334.6L300.5 340.0L293.8 339.8z"/>
<path fill="#cb8038" stroke="#cb8038" stroke-width="1" d="M320.1 63.9L326.8 64.7L326.8 70.1L320.1 69.3zM326.7 86.3L333.4 87.0L333.4 92.4L326.6 91.7zM249.2 188.9L255.9 189.4L255.6 194.9L248.9 194.4zM233.0 226.5L239.7 227.0L239.2 232.5L232.5 232.1zM283.0 268.3L289.7 268.6L289.1 274.1L282.4 273.7zM195.1 268.8L201.8 269.2L201.1 274.7L194.4 274.3z"/>
<path fill="#c77a35" stroke="#c77a35" stroke-width="1" d="M326.8 64.7L333.5 65.4L333.5 70.8L326.8 70.1zM140.0 276.5L146.7 276.9L146.0 282.5L139.3 282.1z"/>
<path fill="#c47332" stroke="#c47332" stroke-width="1" d="M333.5 65.4L340.2 66.1L340.2 71.5L333.5 70.8zM324.5 167.3L331.2 167.8L330.9 173.2L324.2 172.7zM324.2 172.7L330.9 173.2L330.6 178.6L323.9 178.1zM272.3 240.2L279.0 240.6L278.5 246.1L271.8 245.7z"/>
<path fill="#bd682d" stroke="#bd682d" stroke-width="1" d="M340.2 66.1L347.0 66.9L346.9 72.2L340.2 71.5zM322.7 199.7L329.4 200.2L329.0 205.6L322.3 205.1zM247.7 210.9L254.5 211.4L254.0 216.9L247.3 216.4zM92.2 324.7L99.0 325.1L98.0 330.8L91.2 330.3z"/>
<path fill="#b15728" stroke="#b15728" stroke-width="1" d="M347.0 66.9L353.7 67.6L353.7 73.0L346.9 72.2zM295.2 279.8L301.9 280.2L301.2 285.6L294.5 285.3zM115.1 309.0L121.9 309.4L121.0 315.1L114.3 314.6z"/>
<path fill="#ae5326" stroke="#ae5326" stroke-width="1" d="M353.7 67.6L360.4 68.3L360.4 73.7L353.7 73.0zM339.0 141.5L345.7 142.0L345.5 147.4L338.8 146.8zM329.4 200.2L336.1 200.6L335.7 206.0L329.0 205.6zM260.7 217.4L267.4 217.8L267.0 223.3L260.3 222.9zM253.6 222.4L260.3 222.9L259.8 228.3L253.1 227.9zM266.6 228.8L273.3 229.2L272.8 234.7L266.1 234.3zM152.0 288.6L158.7 289.0L158.0 294.6L151.2 294.2zM190.8 302.2L197.6 302.6L196.8 308.1L190.0 307.8zM129.5 304.2L136.2 304.6L135.4 310.3L128.6 309.9zM112.5 326.0L119.2 326.4L118.2 332.0L111.5 331.6z"/>
<path fill="#65aebf" stroke="#65aebf" stroke-width="1" d="M91.6 44.4L98.3 45.1L98.3 50.8L91.6 50.1zM144.0 134.9L150.7 135.6L150.5 141.2L143.8 140.6zM209.3 180.1L216.0 180.7L215.7 186.2L209.0 185.7z"/>
<path fill="#59a3bd" stroke="#59a3bd" stroke-width="1" d="M105.0 45.9L111.8 46.6L111.7 52.3L105.0 51.5zM125.2 59.4L131.9 60.1L131.9 65.8L125.1 65.1zM110.8 120.4L117.5 121.0L117.4 126.7L110.7 126.0zM102.3 165.2L109.0 165.8L108.7 171.4L102.0 170.8zM270.0 317.1L276.8 317.4L276.0 322.8L269.3 322.6z"/>
<path fill="#56a1bd" stroke="#56a1bd" stroke-width="1" d="M111.8 46.6L118.5 47.3L118.5 53.0L111.7 52.3zM91.5 72.8L98.2 73.6L98.1 79.2L91.4 78.5zM111.5 86.3L118.2 87.0L118.1 92.7L111.4 92.0zM164.0 142.4L170.7 143.1L170.4 148.7L163.7 148.1zM88.0 181.0L94.7 181.6L94.3 187.3L87.6 186.7zM98.9 216.3L105.6 216.8L105.1 222.5L98.4 222.0z"/>
<path fill="#57a1bd" stroke="#57a1bd" stroke-width="1" d="M118.5 47.3L125.2 48.1L125.2 53.7L118.5 53.0zM218.6 114.0L225.4 114.6L225.2 120.1L218.5 119.5zM108.4 177.1L115.1 177.7L114.8 183.4L108.1 182.8z"/>
<path fill="#5aa5be" stroke="#5aa5be" stroke-width="1" d="M125.2 48.1L131.9 48.8L131.9 54.5L125.2 53.7zM265.2 134.9L271.9 135.5L271.7 141.0L265.0 140.4zM258.1 145.3L264.8 145.9L264.6 151.4L257.9 150.8zM102.9 153.8L109.6 154.4L109.3 160.1L102.6 159.5z"/>
<path fill="#5faabe" stroke="#5faabe" stroke-width="1" d="M131.9 48.8L138.6 49.5L138.6 55.2L131.9 54.5zM131.9 54.5L138.6 55.2L138.6 60.8L131.9 60.1zM117.5 121.0L124.2 121.7L124.1 127.4L117.4 126.7zM209.9 169.0L216.6 169.5L216.3 175.1L209.6 174.5zM107.7 188.5L114.4 189.1L114.0 194.7L107.3 194.1zM180.7 205.9L187.4 206.4L187.0 212.0L180.3 211.5z"/>
<path fill="#76b8c1" stroke="#76b8c1" stroke-width="1" d="M158.8 51.8L165.5 52.5L165.5 58.1L158.8 57.4z"/>
<path fill="#67b0bf" stroke="#67b0bf" stroke-width="1" d="M172.2 53.2L179.0 54.0L178.9 59.6L172.2 58.8zM138.6 60.8L145.3 61.6L145.3 67.2L138.6 66.5zM138.6 66.5L145.3 67.2L145.3 72.9L138.5 72.1zM172.1 81.3L178.8 82.0L178.7 87.6L172.0 86.9zM117.9 104.0L124.6 104.7L124.5 110.4L117.8 109.7zM104.2 114.0L111.0 114.7L110.8 120.4L104.1 119.7zM279.0 301.0L285.8 301.3L285.0 306.7L278.3 306.5z"/>
<path fill="#89c1c3" stroke="#89c1c3" stroke-width="1" d="M205.8 56.9L212.5 57.6L212.5 63.2L205.8 62.5zM232.7 65.4L239.4 66.1L239.4 71.6L232.7 70.9z"/>
<path fill="#89c2c3" stroke="#89c2c3" stroke-width="1" d="M212.5 57.6L219.3 58.4L219.3 63.9L212.5 63.2zM286.5 65.7L293.2 66.4L293.2 71.9L286.4 71.1zM88.6 169.6L95.3 170.2L95.0 175.9L88.3 175.3z"/>
<path fill="#86c0c3" stroke="#86c0c3" stroke-width="1" d="M219.3 58.4L226.0 59.1L226.0 64.7L219.3 63.9zM246.1 66.8L252.9 67.5L252.8 73.1L246.1 72.3zM266.2 85.5L272.9 86.2L272.8 91.6L266.1 91.0zM271.9 135.5L278.6 136.1L278.4 141.6L271.7 141.0zM271.7 141.0L278.4 141.6L278.2 147.1L271.5 146.5z"/>
<path fill="#7ebbc2" stroke="#7ebbc2" stroke-width="1" d="M226.0 59.1L232.7 59.8L232.7 65.4L226.0 64.7zM191.8 111.3L198.5 112.0L198.4 117.6L191.7 116.9zM269.7 184.9L276.4 185.4L276.1 190.9L269.4 190.4z"/>
<path fill="#79b9c2" stroke="#79b9c2" stroke-width="1" d="M232.7 59.8L239.4 60.6L239.4 66.1L232.7 65.4zM246.1 61.3L252.9 62.0L252.9 67.5L246.1 66.8zM225.7 98.0L232.4 98.6L232.3 104.2L225.6 103.5z"/>
<path fill="#77b8c1" stroke="#77b8c1" stroke-width="1" d="M239.4 60.6L246.1 61.3L246.1 66.8L239.4 66.1zM152.1 56.7L158.8 57.4L158.8 63.0L152.0 62.3zM279.7 70.4L286.4 71.1L286.4 76.6L279.7 75.9zM152.0 62.3L158.8 63.0L158.7 68.6L152.0 67.9zM273.0 75.2L279.7 75.9L279.7 81.4L272.9 80.7zM152.0 67.9L158.7 68.6L158.7 74.3L152.0 73.6zM266.0 96.5L272.8 97.1L272.7 102.6L266.0 102.0zM165.2 91.8L171.9 92.5L171.9 98.1L165.1 97.5zM218.9 102.8L225.6 103.5L225.5 109.1L218.8 108.4zM124.4 116.0L131.1 116.7L130.9 122.3L124.2 121.7zM90.7 118.4L97.4 119.0L97.2 124.7L90.5 124.1zM250.9 155.8L257.7 156.3L257.4 161.8L250.7 161.3zM180.3 211.5L187.0 212.0L186.5 217.6L179.8 217.1z"/>
<path fill="#9cc7c6" stroke="#9cc7c6" stroke-width="1" d="M259.6 62.8L266.3 63.5L266.3 69.0L259.6 68.3zM219.2 69.5L225.9 70.2L225.9 75.7L219.2 75.0zM205.1 118.2L211.8 118.9L211.6 124.4L204.9 123.8zM276.7 179.9L283.4 180.5L283.1 185.9L276.4 185.4zM89.5 244.2L96.2 244.7L95.6 250.4L88.9 249.8z"/>
<path fill="#adcbc8" stroke="#adcbc8" stroke-width="1" d="M266.3 63.5L273.0 64.2L273.0 69.7L266.3 69.0zM257.7 156.3L264.4 156.9L264.1 162.4L257.4 161.8z"/>
<path fill="#dbd4c9" stroke="#dbd4c9" stroke-width="1" d="M293.2 66.4L299.9 67.1L299.9 72.6L293.2 71.9zM186.5 217.6L193.2 218.1L192.8 223.7L186.1 223.2zM164.4 238.5L171.2 239.0L170.6 244.6L163.9 244.1z"/>
<path fill="#deb566" stroke="#deb566" stroke-width="1" d="M299.9 67.1L306.6 67.9L306.6 73.3L299.9 72.6zM284.7 153.1L291.4 153.7L291.2 159.2L284.5 158.6z"/>
<path fill="#d5994b" stroke="#d5994b" stroke-width="1" d="M306.6 67.9L313.3 68.6L313.3 74.0L306.6 73.3zM312.3 133.7L319.0 134.3L318.9 139.7L312.2 139.1zM261.6 278.2L268.3 278.5L267.6 284.0L260.9 283.6zM246.1 294.0L252.8 294.3L252.1 299.8L245.4 299.5z"/>
<path fill="#cf883d" stroke="#cf883d" stroke-width="1" d="M313.3 68.6L320.1 69.3L320.0 74.7L313.3 74.0zM326.4 107.9L333.1 108.5L333.0 113.9L326.3 113.3zM326.2 118.7L332.9 119.3L332.8 124.7L326.1 124.1zM283.6 262.8L290.3 263.2L289.7 268.6L283.0 268.3zM254.2 283.3L260.9 283.6L260.3 289.1L253.5 288.8zM249.0 321.8L255.8 322.0L255.0 327.5L248.2 327.3zM247.4 332.8L254.1 333.0L253.2 338.5L246.5 338.3z"/>
<path fill="#cc8239" stroke="#cc8239" stroke-width="1" d="M320.1 69.3L326.8 70.1L326.8 75.5L320.0 74.7zM318.5 150.5L325.2 151.1L325.0 156.5L318.3 155.9zM304.8 154.8L311.6 155.4L311.3 160.8L304.6 160.3zM317.8 166.8L324.5 167.3L324.2 172.7L317.5 172.2zM242.2 193.9L248.9 194.4L248.5 199.9L241.8 199.4zM234.7 204.4L241.4 204.9L241.0 210.4L234.3 209.9zM169.4 255.8L176.2 256.3L175.6 261.9L168.8 261.4zM199.8 285.9L206.5 286.3L205.8 291.8L199.1 291.4zM253.5 288.8L260.3 289.1L259.6 294.6L252.8 294.3zM205.8 291.8L212.5 292.2L211.8 297.8L205.0 297.4zM90.7 290.1L97.4 290.6L96.6 296.3L89.9 295.8z"/>
<path fill="#c87b36" stroke="#c87b36" stroke-width="1" d="M326.8 70.1L333.5 70.8L333.5 76.2L326.8 75.5zM323.3 188.9L330.0 189.4L329.7 194.8L323.0 194.3zM232.5 232.1L239.2 232.5L238.8 238.0L232.0 237.6zM232.0 237.6L238.8 238.0L238.2 243.6L231.5 243.1zM162.1 261.0L168.8 261.4L168.2 267.0L161.5 266.6zM104.2 291.1L110.9 291.6L110.1 297.2L103.4 296.8zM89.9 295.8L96.6 296.3L95.8 302.0L89.1 301.5zM304.5 312.9L311.2 313.2L310.5 318.6L303.7 318.4zM214.5 325.8L221.2 326.1L220.4 331.7L213.6 331.4z"/>
<path fill="#c37231" stroke="#c37231" stroke-width="1" d="M333.5 70.8L340.2 71.5L340.2 76.9L333.5 76.2zM323.0 194.3L329.7 194.8L329.4 200.2L322.7 199.7zM255.2 200.4L261.9 200.9L261.6 206.4L254.9 205.9zM300.6 291.0L307.3 291.3L306.6 296.7L299.9 296.4zM117.6 292.0L124.3 292.5L123.5 298.1L116.8 297.7zM103.4 296.8L110.1 297.2L109.3 302.9L102.5 302.4z"/>
<path fill="#ba642b" stroke="#ba642b" stroke-width="1" d="M340.2 71.5L346.9 72.2L346.9 77.6L340.2 76.9zM246.4 227.5L253.1 227.9L252.7 233.4L246.0 233.0zM246.0 233.0L252.7 233.4L252.2 238.9L245.5 238.5zM146.0 282.5L152.7 283.0L152.0 288.6L145.3 288.2z"/>
<path fill="#ad5226" stroke="#ad5226" stroke-width="1" d="M346.9 72.2L353.7 73.0L353.6 78.3L346.9 77.6zM339.2 136.1L345.9 136.7L345.7 142.0L339.0 141.5zM267.9 212.3L274.6 212.8L274.1 218.3L267.4 217.8zM274.6 212.8L281.3 213.3L280.9 218.7L274.1 218.3zM281.3 213.3L288.0 213.7L287.6 219.2L280.9 218.7zM288.0 213.7L294.7 214.2L294.3 219.6L287.6 219.2zM294.7 214.2L301.4 214.6L301.0 220.1L294.3 219.6zM137.0 299.0L143.7 299.4L142.9 305.1L136.2 304.6zM113.4 320.3L120.1 320.7L119.2 326.4L112.5 326.0zM201.0 325.2L207.8 325.5L206.9 331.0L200.1 330.7z"/>
<path fill="#a94c24" stroke="#a94c24" stroke-width="1" d="M353.7 73.0L360.4 73.7L360.4 79.0L353.6 78.3zM293.8 225.1L300.5 225.5L300.1 230.9L293.4 230.5zM158.7 289.0L165.4 289.4L164.7 295.1L158.0 294.6zM120.1 320.7L126.9 321.1L125.9 326.8L119.2 326.4z"/>
<path fill="#58a3bd" stroke="#58a3bd" stroke-width="1" d="M98.3 50.8L105.0 51.5L105.0 57.2L98.3 56.5zM91.5 61.5L98.3 62.2L98.2 67.9L91.5 67.2zM125.1 65.1L131.9 65.8L131.8 71.4L125.1 70.7zM225.6 103.5L232.3 104.2L232.2 109.7L225.5 109.1zM204.8 129.4L211.5 130.0L211.3 135.6L204.6 135.0zM102.6 159.5L109.3 160.1L109.0 165.8L102.3 165.2zM173.6 211.0L180.3 211.5L179.8 217.1L173.1 216.6z"/>
<path fill="#549fbd" stroke="#549fbd" stroke-width="1" d="M105.0 51.5L111.7 52.3L111.7 57.9L105.0 57.2zM118.5 53.0L125.2 53.7L125.2 59.4L118.4 58.7zM138.6 225.2L145.4 225.7L144.8 231.4L138.1 230.9z"/>
<path fill="#539ebd" stroke="#539ebd" stroke-width="1" d="M111.7 52.3L118.5 53.0L118.4 58.7L111.7 57.9zM98.3 56.5L105.0 57.2L105.0 62.9L98.3 62.2zM118.4 58.7L125.2 59.4L125.1 65.1L118.4 64.3zM118.4 64.3L125.1 65.1L125.1 70.7L118.4 70.0zM118.4 70.0L125.1 70.7L125.1 76.4L118.3 75.7zM98.1 79.2L104.8 79.9L104.8 85.6L98.1 84.9zM252.4 106.1L259.2 106.8L259.0 112.3L252.3 111.7zM259.0 112.3L265.8 112.9L265.6 118.4L258.9 117.8zM103.9 125.4L110.7 126.0L110.5 131.7L103.8 131.1zM152.5 220.6L159.2 221.1L158.8 226.8L152.1 226.3z"/>
<path fill="#59a4bd" stroke="#59a4bd" stroke-width="1" d="M125.2 53.7L131.9 54.5L131.9 60.1L125.2 59.4zM91.3 84.2L98.1 84.9L98.0 90.6L91.3 89.9z"/>
<path fill="#67afbf" stroke="#67afbf" stroke-width="1" d="M138.6 55.2L145.3 55.9L145.3 61.6L138.6 60.8z"/>
<path fill="#78b8c1" stroke="#78b8c1" stroke-width="1" d="M158.8 57.4L165.5 58.1L165.5 63.7L158.8 63.0zM158.8 63.0L165.5 63.7L165.4 69.4L158.7 68.6zM272.9 86.2L279.6 86.9L279.6 92.3L272.8 91.6z"/>
<path fill="#69b1c0" stroke="#69b1c0" stroke-width="1" d="M178.9 59.6L185.7 60.3L185.6 65.9L178.9 65.2zM178.9 65.2L185.6 65.9L185.6 71.5L178.9 70.8zM178.9 70.8L185.6 71.5L185.6 77.1L178.8 76.4zM138.5 72.1L145.3 72.9L145.2 78.5L138.5 77.8zM178.8 76.4L185.6 77.1L185.5 82.7L178.8 82.0zM265.9 107.5L272.6 108.1L272.5 113.6L265.8 112.9z"/>
<path fill="#8fc4c4" stroke="#8fc4c4" stroke-width="1" d="M219.3 63.9L226.0 64.7L225.9 70.2L219.2 69.5zM205.8 68.1L212.5 68.8L212.5 74.3L205.8 73.6zM290.1 181.0L296.8 181.5L296.5 186.9L289.8 186.4zM292.5 301.6L299.2 301.9L298.5 307.3L291.8 307.0z"/>
<path fill="#85bfc3" stroke="#85bfc3" stroke-width="1" d="M239.4 66.1L246.1 66.8L246.1 72.3L239.4 71.6zM192.2 89.0L198.9 89.7L198.8 95.3L192.1 94.6zM171.9 98.1L178.6 98.8L178.5 104.4L171.8 103.8zM185.3 99.5L192.0 100.2L191.9 105.8L185.2 105.1zM191.9 105.8L198.6 106.4L198.5 112.0L191.8 111.3zM138.1 106.0L144.8 106.7L144.7 112.4L137.9 111.7zM131.1 116.7L137.8 117.3L137.7 123.0L130.9 122.3zM177.9 126.9L184.6 127.5L184.5 133.1L177.8 132.5z"/>
<path fill="#88c1c3" stroke="#88c1c3" stroke-width="1" d="M252.9 67.5L259.6 68.3L259.5 73.8L252.8 73.1zM199.0 78.5L205.7 79.2L205.7 84.8L198.9 84.1zM239.2 93.8L245.9 94.4L245.8 100.0L239.1 99.3zM192.1 94.6L198.8 95.3L198.7 100.8L192.0 100.2zM192.0 100.2L198.7 100.8L198.6 106.4L191.9 105.8zM130.9 122.3L137.7 123.0L137.5 128.6L130.8 128.0zM130.8 128.0L137.5 128.6L137.3 134.3L130.6 133.7zM96.9 136.1L103.6 136.8L103.4 142.4L96.6 141.8z"/>
<path fill="#a8cac7" stroke="#a8cac7" stroke-width="1" d="M259.6 68.3L266.3 69.0L266.3 74.5L259.5 73.8zM246.1 77.9L252.8 78.6L252.7 84.1L246.0 83.4zM171.4 120.6L178.1 121.2L177.9 126.9L171.2 126.2zM172.2 227.8L178.9 228.3L178.4 233.9L171.7 233.4z"/>
<path fill="#b0cbc8" stroke="#b0cbc8" stroke-width="1" d="M266.3 69.0L273.0 69.7L273.0 75.2L266.3 74.5zM225.7 92.4L232.5 93.1L232.4 98.6L225.7 98.0z"/>
<path fill="#9fc8c6" stroke="#9fc8c6" stroke-width="1" d="M286.4 71.1L293.2 71.9L293.1 77.3L286.4 76.6zM266.3 74.5L273.0 75.2L272.9 80.7L266.2 80.0zM212.5 74.3L219.2 75.0L219.2 80.6L212.4 79.9zM279.6 92.3L286.3 93.0L286.2 98.5L279.5 97.8zM198.9 89.7L205.6 90.4L205.5 95.9L198.8 95.3z"/>
<path fill="#ded3b5" stroke="#ded3b5" stroke-width="1" d="M293.2 71.9L299.9 72.6L299.9 78.0L293.1 77.3zM214.6 202.9L221.3 203.4L220.9 208.9L214.2 208.4zM220.6 281.5L227.3 281.9L226.7 287.4L219.9 287.0zM234.1 282.2L240.8 282.6L240.1 288.1L233.4 287.8z"/>
<path fill="#dcad5e" stroke="#dcad5e" stroke-width="1" d="M299.9 72.6L306.6 73.3L306.6 78.7L299.9 78.0zM310.8 171.7L317.5 172.2L317.2 177.6L310.5 177.1zM210.3 252.9L217.0 253.4L216.4 258.9L209.7 258.5z"/>
<path fill="#d5984a" stroke="#d5984a" stroke-width="1" d="M306.6 73.3L313.3 74.0L313.3 79.4L306.6 78.7zM275.6 273.4L282.4 273.7L281.7 279.2L275.0 278.9zM113.1 274.6L119.8 275.1L119.1 280.7L112.4 280.2zM281.1 284.6L287.8 285.0L287.1 290.4L280.4 290.1zM223.7 309.5L230.4 309.8L229.6 315.4L222.9 315.1zM302.9 323.8L309.7 324.0L308.9 329.4L302.2 329.2z"/>
<path fill="#cf8a3f" stroke="#cf8a3f" stroke-width="1" d="M313.3 74.0L320.0 74.7L320.0 80.2L313.3 79.4zM242.5 188.3L249.2 188.9L248.9 194.4L242.2 193.9zM227.2 215.0L233.9 215.5L233.5 221.0L226.8 220.5zM225.3 237.2L232.0 237.6L231.5 243.1L224.8 242.7zM284.1 257.4L290.8 257.7L290.3 263.2L283.6 262.8zM98.2 284.9L104.9 285.4L104.2 291.1L97.4 290.6z"/>
<path fill="#cc833a" stroke="#cc833a" stroke-width="1" d="M320.0 74.7L326.8 75.5L326.7 80.9L320.0 80.2z"/>
<path fill="#c87c36" stroke="#c87c36" stroke-width="1" d="M326.8 75.5L333.5 76.2L333.5 81.6L326.7 80.9z"/>
<path fill="#c16f30" stroke="#c16f30" stroke-width="1" d="M333.5 76.2L340.2 76.9L340.2 82.3L333.5 81.6zM239.2 232.5L246.0 233.0L245.5 238.5L238.8 238.0zM258.9 239.3L265.6 239.8L265.1 245.2L258.4 244.8zM146.7 276.9L153.4 277.4L152.7 283.0L146.0 282.5zM86.4 318.5L93.1 319.0L92.2 324.7L85.5 324.2z"/>
<path fill="#b65e2a" stroke="#b65e2a" stroke-width="1" d="M340.2 76.9L346.9 77.6L346.9 83.0L340.2 82.3zM291.9 246.8L298.6 247.2L298.1 252.7L291.4 252.3zM108.4 308.6L115.1 309.0L114.3 314.6L107.5 314.2z"/>
<path fill="#a84b24" stroke="#a84b24" stroke-width="1" d="M346.9 77.6L353.6 78.3L353.6 83.7L346.9 83.0zM308.1 215.1L314.8 215.5L314.4 220.9L307.7 220.5zM286.7 230.1L293.4 230.5L292.9 236.0L286.2 235.5zM151.2 294.2L158.0 294.6L157.2 300.3L150.5 299.8z"/>
<path fill="#a44623" stroke="#a44623" stroke-width="1" d="M353.6 78.3L360.4 79.0L360.3 84.4L353.6 83.7zM329.0 205.6L335.7 206.0L335.3 211.4L328.6 211.0zM164.7 295.1L171.4 295.5L170.6 301.1L163.9 300.7zM157.2 300.3L163.9 300.7L163.1 306.3L156.4 305.9zM183.3 307.4L190.0 307.8L189.2 313.4L182.5 313.0zM189.2 313.4L196.0 313.7L195.1 319.3L188.4 318.9zM134.5 315.9L141.2 316.3L140.3 321.9L133.6 321.5zM194.3 324.8L201.0 325.2L200.1 330.7L193.4 330.4z"/>
<path fill="#5ba5be" stroke="#5ba5be" stroke-width="1" d="M91.6 55.8L98.3 56.5L98.3 62.2L91.5 61.5zM91.3 89.9L98.0 90.6L97.9 96.3L91.2 95.6zM259.2 106.8L265.9 107.5L265.8 112.9L259.0 112.3zM97.9 96.3L104.6 97.0L104.5 102.7L97.8 102.0zM103.1 148.1L109.8 148.7L109.6 154.4L102.9 153.8zM208.3 196.8L215.0 197.3L214.6 202.9L207.9 202.4z"/>
<path fill="#519cbc" stroke="#519cbc" stroke-width="1" d="M105.0 57.2L111.7 57.9L111.7 63.6L105.0 62.9zM98.3 62.2L105.0 62.9L104.9 68.6L98.2 67.9zM98.2 73.6L104.9 74.3L104.8 79.9L98.1 79.2zM104.8 79.9L111.6 80.6L111.5 86.3L104.8 85.6zM170.4 148.7L177.1 149.3L176.9 154.9L170.2 154.3zM187.8 200.8L194.5 201.3L194.1 206.9L187.4 206.4zM201.2 201.9L207.9 202.4L207.5 207.9L200.8 207.4zM285.8 301.3L292.5 301.6L291.8 307.0L285.0 306.7z"/>
<path fill="#509cbc" stroke="#509cbc" stroke-width="1" d="M111.7 57.9L118.4 58.7L118.4 64.3L111.7 63.6z"/>
<path fill="#85c0c3" stroke="#85c0c3" stroke-width="1" d="M199.1 67.3L205.8 68.1L205.8 73.6L199.0 72.9zM144.9 101.1L151.6 101.7L151.5 107.4L144.8 106.7z"/>
<path fill="#96c6c5" stroke="#96c6c5" stroke-width="1" d="M212.5 68.8L219.2 69.5L219.2 75.0L212.5 74.3zM239.4 71.6L246.1 72.3L246.1 77.9L239.4 77.2zM272.2 124.6L278.9 125.2L278.8 130.7L272.1 130.0zM157.6 130.6L164.3 131.2L164.2 136.8L157.4 136.2z"/>
<path fill="#a0c8c6" stroke="#a0c8c6" stroke-width="1" d="M225.9 70.2L232.7 70.9L232.6 76.5L225.9 75.7zM252.8 78.6L259.5 79.3L259.5 84.8L252.7 84.1z"/>
<path fill="#9ec7c6" stroke="#9ec7c6" stroke-width="1" d="M232.7 70.9L239.4 71.6L239.4 77.2L232.6 76.5zM259.5 79.3L266.2 80.0L266.2 85.5L259.5 84.8zM272.5 113.6L279.2 114.2L279.1 119.7L272.3 119.1z"/>
<path fill="#94c5c5" stroke="#94c5c5" stroke-width="1" d="M246.1 72.3L252.8 73.1L252.8 78.6L246.1 77.9z"/>
<path fill="#92c5c4" stroke="#92c5c4" stroke-width="1" d="M252.8 73.1L259.5 73.8L259.5 79.3L252.8 78.6zM244.0 160.7L250.7 161.3L250.4 166.8L243.7 166.2z"/>
<path fill="#a3c8c7" stroke="#a3c8c7" stroke-width="1" d="M259.5 73.8L266.3 74.5L266.2 80.0L259.5 79.3zM272.6 108.1L279.3 108.8L279.2 114.2L272.5 113.6zM171.6 109.4L178.4 110.0L178.2 115.6L171.5 115.0z"/>
<path fill="#78b9c1" stroke="#78b9c1" stroke-width="1" d="M279.7 75.9L286.4 76.6L286.4 82.1L279.7 81.4zM158.7 68.6L165.4 69.4L165.4 75.0L158.7 74.3zM138.3 94.7L145.0 95.4L144.9 101.1L138.2 100.4zM95.0 175.9L101.7 176.5L101.4 182.2L94.7 181.6z"/>
<path fill="#b2ccc8" stroke="#b2ccc8" stroke-width="1" d="M286.4 76.6L293.1 77.3L293.1 82.8L286.4 82.1zM225.9 75.7L232.6 76.5L232.6 82.0L225.9 81.3zM269.0 195.9L275.7 196.4L275.3 201.8L268.6 201.4z"/>
<path fill="#e1d2a6" stroke="#e1d2a6" stroke-width="1" d="M293.1 77.3L299.9 78.0L299.8 83.5L293.1 82.8zM257.4 161.8L264.1 162.4L263.9 167.9L257.1 167.4zM270.3 173.9L277.0 174.5L276.7 179.9L270.0 179.4zM222.4 186.8L229.1 187.3L228.8 192.8L222.1 192.3zM102.9 245.2L109.6 245.7L109.0 251.4L102.3 250.9z"/>
<path fill="#daa858" stroke="#daa858" stroke-width="1" d="M299.9 78.0L306.6 78.7L306.5 84.2L299.8 83.5zM299.8 88.9L306.5 89.6L306.4 95.0L299.7 94.4zM223.1 259.3L229.9 259.7L229.3 265.3L222.5 264.9zM229.6 315.4L236.4 315.7L235.6 321.2L228.8 320.9z"/>
<path fill="#d49749" stroke="#d49749" stroke-width="1" d="M306.6 78.7L313.3 79.4L313.3 84.9L306.5 84.2zM312.2 139.1L318.9 139.7L318.7 145.1L312.0 144.5zM256.3 183.9L263.0 184.4L262.6 189.9L255.9 189.4zM217.6 247.8L224.3 248.2L223.7 253.8L217.0 253.4zM224.3 248.2L231.0 248.7L230.4 254.2L223.7 253.8zM237.1 254.6L243.9 255.0L243.3 260.5L236.6 260.1zM78.8 277.8L85.5 278.3L84.8 284.0L78.0 283.5z"/>
<path fill="#d08c41" stroke="#d08c41" stroke-width="1" d="M313.3 79.4L320.0 80.2L320.0 85.6L313.3 84.9z"/>
<path fill="#cd853b" stroke="#cd853b" stroke-width="1" d="M320.0 80.2L326.7 80.9L326.7 86.3L320.0 85.6zM326.6 97.1L333.3 97.7L333.2 103.1L326.5 102.5zM251.7 244.4L258.4 244.8L257.8 250.3L251.1 249.9zM155.4 260.5L162.1 261.0L161.5 266.6L154.8 266.1zM119.1 280.7L125.8 281.2L125.1 286.8L118.4 286.4zM77.2 289.2L84.0 289.6L83.2 295.3L76.4 294.8z"/>
<path fill="#c97c36" stroke="#c97c36" stroke-width="1" d="M326.7 80.9L333.5 81.6L333.4 87.0L326.7 86.3zM241.8 199.4L248.5 199.9L248.1 205.4L241.4 204.9zM251.4 305.3L258.1 305.6L257.4 311.1L250.6 310.8z"/>
<path fill="#c06c2f" stroke="#c06c2f" stroke-width="1" d="M333.5 81.6L340.2 82.3L340.1 87.7L333.4 87.0zM288.4 208.3L295.1 208.7L294.7 214.2L288.0 213.7zM161.5 266.6L168.2 267.0L167.5 272.6L160.8 272.2z"/>
<path fill="#b25928" stroke="#b25928" stroke-width="1" d="M340.2 82.3L346.9 83.0L346.9 88.3L340.1 87.7zM252.7 233.4L259.4 233.8L258.9 239.3L252.2 238.9zM137.8 293.4L144.5 293.8L143.7 299.4L137.0 299.0zM122.7 303.8L129.5 304.2L128.6 309.9L121.9 309.4zM106.6 319.9L113.4 320.3L112.5 326.0L105.7 325.5z"/>
<path fill="#a34623" stroke="#a34623" stroke-width="1" d="M346.9 83.0L353.6 83.7L353.6 89.0L346.9 88.3zM293.4 230.5L300.1 230.9L299.6 236.4L292.9 236.0zM172.2 289.9L178.9 290.3L178.1 295.9L171.4 295.5zM149.6 305.5L156.4 305.9L155.6 311.5L148.8 311.1zM142.1 310.7L148.8 311.1L148.0 316.7L141.2 316.3z"/>
<path fill="#9f4022" stroke="#9f4022" stroke-width="1" d="M353.6 83.7L360.3 84.4L360.3 89.7L353.6 89.0zM346.9 88.3L353.6 89.0L353.5 94.4L346.8 93.7zM300.1 230.9L306.8 231.3L306.3 236.8L299.6 236.4zM292.9 236.0L299.6 236.4L299.1 241.8L292.4 241.4zM175.8 312.6L182.5 313.0L181.7 318.6L174.9 318.2z"/>
<path fill="#4f9abc" stroke="#4f9abc" stroke-width="1" d="M105.0 62.9L111.7 63.6L111.7 69.3L104.9 68.6zM111.7 63.6L118.4 64.3L118.4 70.0L111.7 69.3zM211.6 124.4L218.4 125.1L218.2 130.6L211.5 130.0zM111.8 223.1L118.5 223.6L118.0 229.3L111.3 228.7zM291.8 307.0L298.5 307.3L297.7 312.7L291.0 312.4z"/>
<path fill="#7bbac2" stroke="#7bbac2" stroke-width="1" d="M192.3 72.2L199.0 72.9L199.0 78.5L192.3 77.8zM158.7 74.3L165.4 75.0L165.4 80.6L158.6 79.9zM192.3 77.8L199.0 78.5L198.9 84.1L192.2 83.4zM145.1 89.8L151.8 90.5L151.7 96.1L145.0 95.4zM131.4 105.4L138.1 106.0L137.9 111.7L131.2 111.0zM216.6 169.5L223.3 170.1L223.0 175.7L216.3 175.1z"/>
<path fill="#87c0c3" stroke="#87c0c3" stroke-width="1" d="M199.0 72.9L205.8 73.6L205.7 79.2L199.0 78.5zM151.7 96.1L158.4 96.8L158.3 102.4L151.6 101.7zM165.1 97.5L171.9 98.1L171.8 103.8L165.0 103.1zM185.2 105.1L191.9 105.8L191.8 111.3L185.1 110.7zM212.0 107.7L218.8 108.4L218.6 114.0L211.9 113.3z"/>
<path fill="#95c5c5" stroke="#95c5c5" stroke-width="1" d="M205.8 73.6L212.5 74.3L212.4 79.9L205.7 79.2zM164.3 131.2L171.0 131.8L170.9 137.4L164.2 136.8zM179.8 217.1L186.5 217.6L186.1 223.2L179.4 222.7z"/>
<path fill="#a9cac7" stroke="#a9cac7" stroke-width="1" d="M219.2 75.0L225.9 75.7L225.9 81.3L219.2 80.6zM150.9 129.9L157.6 130.6L157.4 136.2L150.7 135.6zM110.8 234.4L117.5 234.9L116.9 240.6L110.2 240.1z"/>
<path fill="#b3ccc8" stroke="#b3ccc8" stroke-width="1" d="M232.6 76.5L239.4 77.2L239.3 82.7L232.6 82.0zM239.3 82.7L246.0 83.4L246.0 88.9L239.2 88.2zM237.0 165.7L243.7 166.2L243.5 171.8L236.8 171.2z"/>
<path fill="#afcbc8" stroke="#afcbc8" stroke-width="1" d="M239.4 77.2L246.1 77.9L246.0 83.4L239.3 82.7z"/>
<path fill="#cbd1cb" stroke="#cbd1cb" stroke-width="1" d="M286.4 82.1L293.1 82.8L293.1 88.2L286.3 87.5zM151.1 124.3L157.8 124.9L157.6 130.6L150.9 129.9z"/>
<path fill="#e1cc91" stroke="#e1cc91" stroke-width="1" d="M293.1 82.8L299.8 83.5L299.8 88.9L293.1 88.2zM286.2 98.5L292.9 99.1L292.8 104.6L286.1 103.9zM263.3 178.9L270.0 179.4L269.7 184.9L263.0 184.4zM275.7 196.4L282.4 196.9L282.1 202.3L275.3 201.8z"/>
<path fill="#daa757" stroke="#daa757" stroke-width="1" d="M299.8 83.5L306.5 84.2L306.5 89.6L299.8 88.9zM292.5 121.0L299.2 121.6L299.1 127.0L292.3 126.4zM291.2 159.2L297.9 159.7L297.7 165.2L290.9 164.6zM107.1 268.4L113.8 268.9L113.1 274.6L106.4 274.1zM247.5 283.0L254.2 283.3L253.5 288.8L246.8 288.5z"/>
<path fill="#d69a4b" stroke="#d69a4b" stroke-width="1" d="M306.5 84.2L313.3 84.9L313.2 90.3L306.5 89.6zM235.8 187.8L242.5 188.3L242.2 193.9L235.5 193.3zM282.1 202.3L288.8 202.8L288.4 208.3L281.7 207.8zM243.9 255.0L250.6 255.4L250.0 260.9L243.3 260.5z"/>
<path fill="#d39245" stroke="#d39245" stroke-width="1" d="M313.3 84.9L320.0 85.6L319.9 91.0L313.2 90.3z"/>
<path fill="#d08b40" stroke="#d08b40" stroke-width="1" d="M320.0 85.6L326.7 86.3L326.6 91.7L319.9 91.0zM225.8 231.6L232.5 232.1L232.0 237.6L225.3 237.2zM237.7 249.1L244.4 249.5L243.9 255.0L237.1 254.6zM162.7 255.3L169.4 255.8L168.8 261.4L162.1 261.0zM260.3 289.1L267.0 289.5L266.3 294.9L259.6 294.6z"/>
<path fill="#bf6a2e" stroke="#bf6a2e" stroke-width="1" d="M333.4 87.0L340.1 87.7L340.1 93.0L333.4 92.4zM333.2 103.1L339.9 103.8L339.8 109.2L333.1 108.5zM252.2 238.9L258.9 239.3L258.4 244.8L251.7 244.4zM181.6 267.9L188.3 268.3L187.7 273.9L181.0 273.5z"/>
<path fill="#ae5427" stroke="#ae5427" stroke-width="1" d="M340.1 87.7L346.9 88.3L346.8 93.7L340.1 93.0zM259.8 228.3L266.6 228.8L266.1 234.3L259.4 233.8z"/>
<path fill="#9a3b20" stroke="#9a3b20" stroke-width="1" d="M353.6 89.0L360.3 89.7L360.2 95.1L353.5 94.4zM346.5 115.2L353.2 115.8L353.0 121.2L346.3 120.6zM345.3 152.8L352.0 153.3L351.8 158.7L345.1 158.1zM335.7 206.0L342.4 206.5L342.0 211.8L335.3 211.4zM306.8 231.3L313.5 231.7L313.0 237.2L306.3 236.8z"/>
<path fill="#55a0bd" stroke="#55a0bd" stroke-width="1" d="M91.5 67.2L98.2 67.9L98.2 73.6L91.5 72.8zM118.3 75.7L125.1 76.4L125.0 82.0L118.3 81.4zM98.1 84.9L104.8 85.6L104.7 91.3L98.0 90.6zM130.6 133.7L137.3 134.3L137.1 139.9L130.4 139.3zM94.3 187.3L101.0 187.9L100.6 193.6L93.9 193.0zM194.5 201.3L201.2 201.9L200.8 207.4L194.1 206.9z"/>
<path fill="#509bbc" stroke="#509bbc" stroke-width="1" d="M98.2 67.9L104.9 68.6L104.9 74.3L98.2 73.6zM111.6 75.0L118.3 75.7L118.3 81.4L111.6 80.6zM244.2 155.2L250.9 155.8L250.7 161.3L244.0 160.7zM86.4 203.8L93.1 204.3L92.7 210.0L85.9 209.5zM159.7 215.5L166.4 216.0L166.0 221.7L159.2 221.1z"/>
<path fill="#4e99bc" stroke="#4e99bc" stroke-width="1" d="M104.9 68.6L111.7 69.3L111.6 75.0L104.9 74.3zM258.9 117.8L265.6 118.4L265.5 123.9L258.8 123.3z"/>
<path fill="#4e9abc" stroke="#4e9abc" stroke-width="1" d="M111.7 69.3L118.4 70.0L118.3 75.7L111.6 75.0z"/>
<path fill="#60abbe" stroke="#60abbe" stroke-width="1" d="M131.8 71.4L138.5 72.1L138.5 77.8L131.8 77.1z"/>
<path fill="#7abac2" stroke="#7abac2" stroke-width="1" d="M152.0 73.6L158.7 74.3L158.6 79.9L151.9 79.2zM211.9 113.3L218.6 114.0L218.5 119.5L211.8 118.9zM178.4 233.9L185.1 234.4L184.6 239.9L177.9 239.5z"/>
<path fill="#9ac7c5" stroke="#9ac7c5" stroke-width="1" d="M205.7 79.2L212.4 79.9L212.4 85.5L205.7 84.8zM151.5 107.4L158.2 108.0L158.1 113.7L151.4 113.0z"/>
<path fill="#a7c9c7" stroke="#a7c9c7" stroke-width="1" d="M212.4 79.9L219.2 80.6L219.1 86.2L212.4 85.5zM137.7 123.0L144.4 123.6L144.2 129.3L137.5 128.6z"/>
<path fill="#b4ccc9" stroke="#b4ccc9" stroke-width="1" d="M219.2 80.6L225.9 81.3L225.8 86.8L219.1 86.2zM88.9 163.9L95.6 164.5L95.3 170.2L88.6 169.6zM229.8 176.2L236.5 176.7L236.2 182.3L229.4 181.7z"/>
<path fill="#bececa" stroke="#bececa" stroke-width="1" d="M225.9 81.3L232.6 82.0L232.5 87.5L225.8 86.8zM219.1 86.2L225.8 86.8L225.7 92.4L219.0 91.7z"/>
<path fill="#bccec9" stroke="#bccec9" stroke-width="1" d="M232.6 82.0L239.3 82.7L239.2 88.2L232.5 87.5zM151.2 118.7L157.9 119.3L157.8 124.9L151.1 124.3z"/>
<path fill="#a6c9c7" stroke="#a6c9c7" stroke-width="1" d="M246.0 83.4L252.7 84.1L252.7 89.6L246.0 88.9zM198.8 95.3L205.5 95.9L205.4 101.5L198.7 100.8zM172.7 222.2L179.4 222.7L178.9 228.3L172.2 227.8z"/>
<path fill="#98c6c5" stroke="#98c6c5" stroke-width="1" d="M252.7 84.1L259.5 84.8L259.4 90.3L252.7 89.6zM194.1 206.9L200.8 207.4L200.4 213.0L193.7 212.5z"/>
<path fill="#8ac2c4" stroke="#8ac2c4" stroke-width="1" d="M279.6 86.9L286.3 87.5L286.3 93.0L279.6 92.3zM272.8 97.1L279.5 97.8L279.4 103.3L272.7 102.6zM178.1 121.2L184.8 121.9L184.6 127.5L177.9 126.9zM269.3 322.6L276.0 322.8L275.2 328.3L268.4 328.0z"/>
<path fill="#ddd3bc" stroke="#ddd3bc" stroke-width="1" d="M286.3 87.5L293.1 88.2L293.0 93.7L286.3 93.0z"/>
<path fill="#e0c178" stroke="#e0c178" stroke-width="1" d="M293.1 88.2L299.8 88.9L299.7 94.4L293.0 93.7zM157.2 243.6L163.9 244.1L163.3 249.7L156.6 249.3z"/>
<path fill="#d79e4f" stroke="#d79e4f" stroke-width="1" d="M306.5 89.6L313.2 90.3L313.1 95.7L306.4 95.0zM309.6 193.4L316.3 193.8L315.9 199.3L309.2 198.8zM228.8 192.8L235.5 193.3L235.1 198.9L228.4 198.4zM220.9 208.9L227.6 209.4L227.2 215.0L220.5 214.5zM163.3 249.7L170.0 250.2L169.4 255.8L162.7 255.3zM223.7 253.8L230.4 254.2L229.9 259.7L223.1 259.3zM93.0 273.1L99.7 273.6L99.0 279.3L92.2 278.8zM212.5 292.2L219.2 292.6L218.5 298.1L211.8 297.8z"/>
<path fill="#d5994a" stroke="#d5994a" stroke-width="1" d="M313.2 90.3L319.9 91.0L319.9 96.4L313.1 95.7zM249.9 177.8L256.6 178.4L256.3 183.9L249.6 183.3zM220.5 214.5L227.2 215.0L226.8 220.5L220.1 220.1zM267.6 284.0L274.4 284.3L273.7 289.8L267.0 289.5zM265.6 300.4L272.3 300.7L271.6 306.2L264.8 305.9z"/>
<path fill="#d29245" stroke="#d29245" stroke-width="1" d="M319.9 91.0L326.6 91.7L326.6 97.1L319.9 96.4zM311.1 166.2L317.8 166.8L317.5 172.2L310.8 171.7zM288.8 202.8L295.5 203.3L295.1 208.7L288.4 208.3z"/>
<path fill="#cc8339" stroke="#cc8339" stroke-width="1" d="M326.6 91.7L333.4 92.4L333.3 97.7L326.6 97.1zM249.8 316.3L256.6 316.6L255.8 322.0L249.0 321.8z"/>
<path fill="#ab4f25" stroke="#ab4f25" stroke-width="1" d="M340.1 93.0L346.8 93.7L346.7 99.1L340.0 98.4zM340.0 98.4L346.7 99.1L346.7 104.5L339.9 103.8zM339.9 103.8L346.7 104.5L346.6 109.8L339.8 109.2zM339.8 109.2L346.6 109.8L346.5 115.2L339.7 114.6zM315.2 210.1L321.9 210.5L321.5 215.9L314.8 215.5zM294.3 219.6L301.0 220.1L300.5 225.5L293.8 225.1zM267.0 223.3L273.7 223.8L273.3 229.2L266.6 228.8zM273.7 223.8L280.4 224.2L280.0 229.7L273.3 229.2zM280.4 224.2L287.1 224.6L286.7 230.1L280.0 229.7zM280.0 229.7L286.7 230.1L286.2 235.5L279.5 235.1zM279.5 235.1L286.2 235.5L285.7 241.0L279.0 240.6zM173.6 278.7L180.3 279.1L179.6 284.7L172.9 284.3z"/>
<path fill="#9b3c21" stroke="#9b3c21" stroke-width="1" d="M346.8 93.7L353.5 94.4L353.4 99.8L346.7 99.1zM346.2 125.9L352.9 126.5L352.8 131.9L346.1 131.3zM346.1 131.3L352.8 131.9L352.6 137.3L345.9 136.7zM345.5 147.4L352.2 148.0L352.0 153.3L345.3 152.8zM299.1 241.8L305.8 242.2L305.3 247.6L298.6 247.2zM301.9 280.2L308.6 280.5L308.0 285.9L301.2 285.6z"/>
<path fill="#963720" stroke="#963720" stroke-width="1" d="M353.5 94.4L360.2 95.1L360.2 100.4L353.4 99.8z"/>
<path fill="#4f9bbc" stroke="#4f9bbc" stroke-width="1" d="M104.9 74.3L111.6 75.0L111.6 80.6L104.8 79.9z"/>
<path fill="#5ba6be" stroke="#5ba6be" stroke-width="1" d="M125.1 76.4L131.8 77.1L131.7 82.7L125.0 82.0zM118.2 87.0L124.9 87.7L124.8 93.4L118.1 92.7zM104.6 97.0L111.3 97.7L111.2 103.3L104.5 102.7zM265.3 129.4L272.1 130.0L271.9 135.5L265.2 134.9zM265.0 140.4L271.7 141.0L271.5 146.5L264.8 145.9zM103.4 142.4L110.1 143.1L109.8 148.7L103.1 148.1z"/>
<path fill="#90c4c4" stroke="#90c4c4" stroke-width="1" d="M198.9 84.1L205.7 84.8L205.6 90.4L198.9 89.7zM131.4 230.3L138.1 230.9L137.6 236.5L130.9 236.0zM171.7 233.4L178.4 233.9L177.9 239.5L171.2 239.0z"/>
<path fill="#accac8" stroke="#accac8" stroke-width="1" d="M205.7 84.8L212.4 85.5L212.3 91.0L205.6 90.4zM151.4 113.0L158.1 113.7L157.9 119.3L151.2 118.7zM297.7 312.7L304.5 312.9L303.7 318.4L297.0 318.1z"/>
<path fill="#b8cdc9" stroke="#b8cdc9" stroke-width="1" d="M212.4 85.5L219.1 86.2L219.0 91.7L212.3 91.0zM215.7 186.2L222.4 186.8L222.1 192.3L215.4 191.8z"/>
<path fill="#bacdc9" stroke="#bacdc9" stroke-width="1" d="M225.8 86.8L232.5 87.5L232.5 93.1L225.7 92.4zM205.2 112.7L211.9 113.3L211.8 118.9L205.1 118.2zM164.5 125.6L171.2 126.2L171.0 131.8L164.3 131.2zM144.2 129.3L150.9 129.9L150.7 135.6L144.0 134.9zM89.2 158.2L95.9 158.9L95.6 164.5L88.9 163.9z"/>
<path fill="#b1cbc8" stroke="#b1cbc8" stroke-width="1" d="M232.5 87.5L239.2 88.2L239.2 93.8L232.5 93.1z"/>
<path fill="#97c6c5" stroke="#97c6c5" stroke-width="1" d="M246.0 88.9L252.7 89.6L252.6 95.1L245.9 94.4zM232.5 93.1L239.2 93.8L239.1 99.3L232.4 98.6zM219.0 97.3L225.7 98.0L225.6 103.5L218.9 102.8zM158.3 102.4L165.0 103.1L164.9 108.7L158.2 108.0zM283.4 180.5L290.1 181.0L289.8 186.4L283.1 185.9z"/>
<path fill="#8bc3c4" stroke="#8bc3c4" stroke-width="1" d="M252.7 89.6L259.4 90.3L259.3 95.8L252.6 95.1zM158.4 96.8L165.1 97.5L165.0 103.1L158.3 102.4zM178.5 104.4L185.2 105.1L185.1 110.7L178.4 110.0zM269.4 190.4L276.1 190.9L275.7 196.4L269.0 195.9z"/>
<path fill="#e2d2a3" stroke="#e2d2a3" stroke-width="1" d="M286.3 93.0L293.0 93.7L292.9 99.1L286.2 98.5z"/>
<path fill="#deb869" stroke="#deb869" stroke-width="1" d="M293.0 93.7L299.7 94.4L299.6 99.8L292.9 99.1zM236.0 265.7L242.7 266.1L242.1 271.6L235.4 271.2z"/>
<path fill="#d8a050" stroke="#d8a050" stroke-width="1" d="M306.4 95.0L313.1 95.7L313.1 101.1L306.3 100.5zM275.3 201.8L282.1 202.3L281.7 207.8L275.0 207.3zM271.8 245.7L278.5 246.1L278.0 251.5L271.2 251.1zM196.9 252.0L203.6 252.5L203.0 258.0L196.3 257.6zM149.3 254.4L156.0 254.9L155.4 260.5L148.7 260.0zM142.0 259.5L148.7 260.0L148.1 265.7L141.3 265.2zM262.2 272.7L268.9 273.0L268.3 278.5L261.6 278.2zM79.5 272.1L86.2 272.6L85.5 278.3L78.8 277.8zM246.8 288.5L253.5 288.8L252.8 294.3L246.1 294.0zM218.5 298.1L225.2 298.5L224.5 304.0L217.7 303.6z"/>
<path fill="#d69b4c" stroke="#d69b4c" stroke-width="1" d="M313.1 95.7L319.9 96.4L319.8 101.8L313.1 101.1zM313.1 101.1L319.8 101.8L319.7 107.2L313.0 106.6zM313.0 106.6L319.7 107.2L319.6 112.6L312.9 112.0zM312.9 112.0L319.6 112.6L319.5 118.1L312.8 117.4zM312.8 117.4L319.5 118.1L319.3 123.5L312.6 122.8zM312.6 122.8L319.3 123.5L319.2 128.9L312.5 128.3zM312.5 128.3L319.2 128.9L319.0 134.3L312.3 133.7zM305.6 133.1L312.3 133.7L312.2 139.1L305.4 138.5zM298.7 137.9L305.4 138.5L305.3 144.0L298.6 143.4zM268.6 201.4L275.3 201.8L275.0 207.3L268.3 206.8zM209.1 264.0L215.8 264.5L215.2 270.0L208.5 269.6zM268.3 278.5L275.0 278.9L274.4 284.3L267.6 284.0zM106.4 274.1L113.1 274.6L112.4 280.2L105.7 279.8zM267.0 289.5L273.7 289.8L273.0 295.2L266.3 294.9z"/>
<path fill="#d39447" stroke="#d39447" stroke-width="1" d="M319.9 96.4L326.6 97.1L326.5 102.5L319.8 101.8zM231.0 248.7L237.7 249.1L237.1 254.6L230.4 254.2zM203.0 258.0L209.7 258.5L209.1 264.0L202.4 263.6zM245.4 299.5L252.1 299.8L251.4 305.3L244.7 305.0z"/>
<path fill="#9a3b21" stroke="#9a3b21" stroke-width="1" d="M346.7 99.1L353.4 99.8L353.4 105.1L346.7 104.5zM346.3 120.6L353.0 121.2L352.9 126.5L346.2 125.9zM166.4 329.1L173.2 329.4L172.2 335.0L165.5 334.7z"/>
<path fill="#95351f" stroke="#95351f" stroke-width="1" d="M353.4 99.8L360.2 100.4L360.1 105.8L353.4 105.1zM335.3 211.4L342.0 211.8L341.6 217.2L334.9 216.8zM321.1 221.3L327.8 221.8L327.4 227.1L320.7 226.7zM313.5 231.7L320.2 232.1L319.7 237.5L313.0 237.2z"/>
<path fill="#57a2bd" stroke="#57a2bd" stroke-width="1" d="M91.4 78.5L98.1 79.2L98.1 84.9L91.3 84.2zM118.3 81.4L125.0 82.0L124.9 87.7L118.2 87.0zM191.5 122.5L198.2 123.2L198.1 128.8L191.4 128.1zM210.2 163.4L216.9 164.0L216.6 169.5L209.9 169.0z"/>
<path fill="#529dbd" stroke="#529dbd" stroke-width="1" d="M111.6 80.6L118.3 81.4L118.2 87.0L111.5 86.3zM184.5 133.1L191.2 133.7L191.0 139.3L184.3 138.7z"/>
<path fill="#6fb4c0" stroke="#6fb4c0" stroke-width="1" d="M138.4 83.4L145.1 84.1L145.1 89.8L138.4 89.1zM266.0 102.0L272.7 102.6L272.6 108.1L265.9 107.5zM82.2 249.3L88.9 249.8L88.3 255.5L81.6 255.0z"/>
<path fill="#79b9c1" stroke="#79b9c1" stroke-width="1" d="M145.1 84.1L151.9 84.8L151.8 90.5L145.1 89.8zM90.5 124.1L97.2 124.7L97.1 130.4L90.3 129.8zM187.4 206.4L194.1 206.9L193.7 212.5L187.0 212.0z"/>
<path fill="#81bdc2" stroke="#81bdc2" stroke-width="1" d="M158.6 85.5L165.3 86.2L165.2 91.8L158.5 91.2zM131.2 111.0L137.9 111.7L137.8 117.3L131.1 116.7zM223.3 170.1L230.0 170.7L229.8 176.2L223.0 175.7zM166.0 221.7L172.7 222.2L172.2 227.8L165.5 227.3z"/>
<path fill="#c0ceca" stroke="#c0ceca" stroke-width="1" d="M205.6 90.4L212.3 91.0L212.2 96.6L205.5 95.9zM89.5 152.5L96.2 153.2L95.9 158.9L89.2 158.2z"/>
<path fill="#c9d0cb" stroke="#c9d0cb" stroke-width="1" d="M212.3 91.0L219.0 91.7L219.0 97.3L212.2 96.6zM144.4 123.6L151.1 124.3L150.9 129.9L144.2 129.3zM91.7 221.4L98.4 222.0L97.9 227.6L91.2 227.1z"/>
<path fill="#c8d0cb" stroke="#c8d0cb" stroke-width="1" d="M219.0 91.7L225.7 92.4L225.7 98.0L219.0 97.3zM205.4 101.5L212.1 102.2L212.0 107.7L205.3 107.1zM157.8 124.9L164.5 125.6L164.3 131.2L157.6 130.6zM179.4 222.7L186.1 223.2L185.6 228.8L178.9 228.3z"/>
<path fill="#7ab9c2" stroke="#7ab9c2" stroke-width="1" d="M252.6 95.1L259.3 95.8L259.2 101.3L252.5 100.6zM170.9 137.4L177.6 138.1L177.4 143.7L170.7 143.1z"/>
<path fill="#c6d0cb" stroke="#c6d0cb" stroke-width="1" d="M279.5 97.8L286.2 98.5L286.1 103.9L279.4 103.3zM205.5 95.9L212.2 96.6L212.1 102.2L205.4 101.5zM171.2 239.0L177.9 239.5L177.3 245.1L170.6 244.6z"/>
<path fill="#ddb365" stroke="#ddb365" stroke-width="1" d="M292.9 99.1L299.6 99.8L299.5 105.3L292.8 104.6zM128.6 258.6L135.3 259.1L134.6 264.7L127.9 264.2zM101.1 262.2L107.8 262.8L107.1 268.4L100.4 267.9z"/>
<path fill="#d9a455" stroke="#d9a455" stroke-width="1" d="M299.6 99.8L306.3 100.5L306.3 105.9L299.5 105.3zM113.8 268.9L120.5 269.4L119.8 275.1L113.1 274.6z"/>
<path fill="#d79f4f" stroke="#d79f4f" stroke-width="1" d="M306.3 100.5L313.1 101.1L313.0 106.6L306.3 105.9zM316.9 183.0L323.6 183.5L323.3 188.9L316.6 188.4zM237.2 310.2L243.9 310.5L243.1 316.0L236.4 315.7z"/>
<path fill="#d49548" stroke="#d49548" stroke-width="1" d="M319.8 101.8L326.5 102.5L326.4 107.9L319.7 107.2zM92.2 278.8L99.0 279.3L98.2 284.9L91.5 284.5z"/>
<path fill="#ce873c" stroke="#ce873c" stroke-width="1" d="M326.5 102.5L333.2 103.1L333.1 108.5L326.4 107.9zM311.8 150.0L318.5 150.5L318.3 155.9L311.6 155.4zM248.2 327.3L255.0 327.5L254.1 333.0L247.4 332.8z"/>
<path fill="#993a20" stroke="#993a20" stroke-width="1" d="M346.7 104.5L353.4 105.1L353.3 110.5L346.6 109.8zM313.9 226.3L320.7 226.7L320.2 232.1L313.5 231.7z"/>
<path fill="#94341f" stroke="#94341f" stroke-width="1" d="M353.4 105.1L360.1 105.8L360.0 111.1L353.3 110.5zM353.3 110.5L360.0 111.1L359.9 116.5L353.2 115.8zM353.2 115.8L359.9 116.5L359.8 121.8L353.0 121.2zM353.0 121.2L359.8 121.8L359.6 127.2L352.9 126.5zM352.9 126.5L359.6 127.2L359.5 132.5L352.8 131.9zM352.8 131.9L359.5 132.5L359.3 137.8L352.6 137.3zM352.6 137.3L359.3 137.8L359.1 143.2L352.4 142.6zM344.3 174.3L351.1 174.8L350.8 180.1L344.1 179.6zM344.1 179.6L350.8 180.1L350.5 185.5L343.8 185.0zM343.8 185.0L350.5 185.5L350.2 190.8L343.4 190.4zM343.4 190.4L350.2 190.8L349.8 196.2L343.1 195.7zM306.3 236.8L313.0 237.2L312.5 242.6L305.8 242.2zM304.3 258.5L311.0 258.8L310.4 264.2L303.7 263.9zM302.5 274.7L309.2 275.1L308.6 280.5L301.9 280.2zM312.7 302.4L319.4 302.6L318.7 308.0L311.9 307.8zM310.5 318.6L317.2 318.8L316.4 324.2L309.7 324.0z"/>
<path fill="#559fbd" stroke="#559fbd" stroke-width="1" d="M104.8 85.6L111.5 86.3L111.4 92.0L104.7 91.3z"/>
<path fill="#82bec3" stroke="#82bec3" stroke-width="1" d="M151.8 90.5L158.5 91.2L158.4 96.8L151.7 96.1zM185.4 93.9L192.1 94.6L192.0 100.2L185.3 99.5zM198.4 117.6L205.1 118.2L204.9 123.8L198.2 123.2zM90.3 129.8L97.1 130.4L96.9 136.1L90.1 135.5zM95.3 170.2L102.0 170.8L101.7 176.5L95.0 175.9z"/>
<path fill="#b5ccc9" stroke="#b5ccc9" stroke-width="1" d="M212.2 96.6L219.0 97.3L218.9 102.8L212.1 102.2z"/>
<path fill="#a1c8c6" stroke="#a1c8c6" stroke-width="1" d="M272.7 102.6L279.4 103.3L279.3 108.8L272.6 108.1zM205.2 235.8L211.9 236.2L211.4 241.8L204.7 241.3z"/>
<path fill="#ddd3bd" stroke="#ddd3bd" stroke-width="1" d="M279.4 103.3L286.1 103.9L286.0 109.4L279.3 108.8z"/>
<path fill="#e1c47e" stroke="#e1c47e" stroke-width="1" d="M286.1 103.9L292.8 104.6L292.7 110.1L286.0 109.4zM285.1 142.2L291.8 142.8L291.6 148.2L284.9 147.7zM137.1 242.1L143.8 242.6L143.2 248.3L136.5 247.8z"/>
<path fill="#dcaf60" stroke="#dcaf60" stroke-width="1" d="M292.8 104.6L299.5 105.3L299.4 110.7L292.7 110.1zM302.5 198.3L309.2 198.8L308.9 204.2L302.2 203.7z"/>
<path fill="#d9a252" stroke="#d9a252" stroke-width="1" d="M299.5 105.3L306.3 105.9L306.2 111.4L299.4 110.7zM256.6 178.4L263.3 178.9L263.0 184.4L256.3 183.9zM265.1 245.2L271.8 245.7L271.2 251.1L264.5 250.7zM228.0 326.4L234.7 326.7L233.9 332.2L227.1 331.9z"/>
<path fill="#d79e4e" stroke="#d79e4e" stroke-width="1" d="M306.3 105.9L313.0 106.6L312.9 112.0L306.2 111.4zM306.2 111.4L312.9 112.0L312.8 117.4L306.0 116.8zM306.0 116.8L312.8 117.4L312.6 122.8L305.9 122.2zM305.9 122.2L312.6 122.8L312.5 128.3L305.8 127.7zM305.8 127.7L312.5 128.3L312.3 133.7L305.6 133.1zM298.9 132.5L305.6 133.1L305.4 138.5L298.7 137.9zM291.6 148.2L298.4 148.8L298.1 154.3L291.4 153.7zM134.6 264.7L141.3 265.2L140.7 270.8L134.0 270.4z"/>
<path fill="#d49648" stroke="#d49648" stroke-width="1" d="M319.7 107.2L326.4 107.9L326.3 113.3L319.6 112.6zM319.6 112.6L326.3 113.3L326.2 118.7L319.5 118.1zM319.5 118.1L326.2 118.7L326.1 124.1L319.3 123.5zM170.0 250.2L176.8 250.7L176.2 256.3L169.4 255.8zM254.9 277.8L261.6 278.2L260.9 283.6L254.2 283.3zM85.5 278.3L92.2 278.8L91.5 284.5L84.8 284.0zM217.7 303.6L224.5 304.0L223.7 309.5L217.0 309.2zM222.9 315.1L229.6 315.4L228.8 320.9L222.1 320.6z"/>
<path fill="#bf6b2e" stroke="#bf6b2e" stroke-width="1" d="M333.1 108.5L339.8 109.2L339.7 114.6L333.0 113.9zM333.0 113.9L339.7 114.6L339.6 119.9L332.9 119.3zM332.9 119.3L339.6 119.9L339.5 125.3L332.8 124.7zM332.8 124.7L339.5 125.3L339.3 130.7L332.6 130.1zM332.6 130.1L339.3 130.7L339.2 136.1L332.5 135.5zM332.5 135.5L339.2 136.1L339.0 141.5L332.3 140.9zM332.3 140.9L339.0 141.5L338.8 146.8L332.1 146.3zM290.3 263.2L297.0 263.5L296.4 269.0L289.7 268.6zM131.8 287.3L138.5 287.7L137.8 293.4L131.1 292.9zM124.3 292.5L131.1 292.9L130.3 298.6L123.5 298.1zM102.5 302.4L109.3 302.9L108.4 308.6L101.7 308.1z"/>
<path fill="#9a3a20" stroke="#9a3a20" stroke-width="1" d="M346.6 109.8L353.3 110.5L353.2 115.8L346.5 115.2zM173.2 329.4L179.9 329.8L179.0 335.3L172.2 335.0z"/>
<path fill="#58a2bd" stroke="#58a2bd" stroke-width="1" d="M98.0 90.6L104.7 91.3L104.6 97.0L97.9 96.3zM104.7 91.3L111.4 92.0L111.3 97.7L104.6 97.0zM157.4 136.2L164.2 136.8L164.0 142.4L157.2 141.8zM103.6 136.8L110.3 137.4L110.1 143.1L103.4 142.4z"/>
<path fill="#71b5c0" stroke="#71b5c0" stroke-width="1" d="M131.6 94.1L138.3 94.7L138.2 100.4L131.5 99.7z"/>
<path fill="#a8c9c7" stroke="#a8c9c7" stroke-width="1" d="M198.7 100.8L205.4 101.5L205.3 107.1L198.6 106.4zM200.8 207.4L207.5 207.9L207.1 213.5L200.4 213.0zM90.1 238.5L96.8 239.0L96.2 244.7L89.5 244.2z"/>
<path fill="#9bc7c5" stroke="#9bc7c5" stroke-width="1" d="M212.1 102.2L218.9 102.8L218.8 108.4L212.0 107.7z"/>
<path fill="#4b97bc" stroke="#4b97bc" stroke-width="1" d="M232.3 104.2L239.0 104.8L238.9 110.4L232.2 109.7z"/>
<path fill="#4995bb" stroke="#4995bb" stroke-width="1" d="M239.0 104.8L245.7 105.5L245.6 111.0L238.9 110.4z"/>
<path fill="#4d98bc" stroke="#4d98bc" stroke-width="1" d="M245.7 105.5L252.4 106.1L252.3 111.7L245.6 111.0zM251.2 150.3L257.9 150.8L257.7 156.3L250.9 155.8zM181.1 200.3L187.8 200.8L187.4 206.4L180.7 205.9zM118.5 223.6L125.2 224.2L124.7 229.8L118.0 229.3z"/>
<path fill="#ded3b8" stroke="#ded3b8" stroke-width="1" d="M279.3 108.8L286.0 109.4L285.9 114.9L279.2 114.2zM278.9 125.2L285.6 125.8L285.5 131.3L278.8 130.7zM271.3 152.0L278.0 152.6L277.8 158.0L271.1 157.5z"/>
<path fill="#e0c176" stroke="#e0c176" stroke-width="1" d="M286.0 109.4L292.7 110.1L292.6 115.5L285.9 114.9zM302.9 192.9L309.6 193.4L309.2 198.8L302.5 198.3zM214.2 208.4L220.9 208.9L220.5 214.5L213.8 214.0zM170.6 244.6L177.3 245.1L176.8 250.7L170.0 250.2z"/>
<path fill="#dbac5d" stroke="#dbac5d" stroke-width="1" d="M292.7 110.1L299.4 110.7L299.3 116.2L292.6 115.5zM250.2 172.3L256.9 172.9L256.6 178.4L249.9 177.8zM243.2 177.3L249.9 177.8L249.6 183.3L242.9 182.8zM212.9 225.1L219.6 225.6L219.1 231.2L212.4 230.7zM184.0 245.5L190.7 246.0L190.2 251.6L183.5 251.1zM142.6 253.9L149.3 254.4L148.7 260.0L142.0 259.5zM273.0 295.2L279.7 295.6L279.0 301.0L272.3 300.7zM264.1 311.4L270.8 311.6L270.0 317.1L263.3 316.8zM261.7 327.8L268.4 328.0L267.6 333.5L260.9 333.3z"/>
<path fill="#d8a252" stroke="#d8a252" stroke-width="1" d="M299.4 110.7L306.2 111.4L306.0 116.8L299.3 116.2zM207.8 275.2L214.6 275.5L213.9 281.1L207.2 280.7zM207.2 280.7L213.9 281.1L213.2 286.6L206.5 286.3zM224.5 304.0L231.2 304.3L230.4 309.8L223.7 309.5zM264.8 305.9L271.6 306.2L270.8 311.6L264.1 311.4z"/>
<path fill="#cf893e" stroke="#cf893e" stroke-width="1" d="M326.3 113.3L333.0 113.9L332.9 119.3L326.2 118.7zM298.4 148.8L305.1 149.4L304.8 154.8L298.1 154.3zM316.3 193.8L323.0 194.3L322.7 199.7L315.9 199.3zM183.5 251.1L190.2 251.6L189.6 257.2L182.9 256.7zM196.3 257.6L203.0 258.0L202.4 263.6L195.7 263.2zM281.7 279.2L288.4 279.5L287.8 285.0L281.1 284.6zM211.8 297.8L218.5 298.1L217.7 303.6L211.0 303.3z"/>
<path fill="#ab5025" stroke="#ab5025" stroke-width="1" d="M339.7 114.6L346.5 115.2L346.3 120.6L339.6 119.9zM144.5 293.8L151.2 294.2L150.5 299.8L143.7 299.4z"/>
<path fill="#63adbf" stroke="#63adbf" stroke-width="1" d="M118.0 98.4L124.7 99.0L124.6 104.7L117.9 104.0zM218.8 108.4L225.5 109.1L225.4 114.6L218.6 114.0zM265.8 112.9L272.5 113.6L272.3 119.1L265.6 118.4zM104.4 108.4L111.1 109.0L111.0 114.7L104.2 114.0zM111.1 109.0L117.8 109.7L117.7 115.4L111.0 114.7zM170.7 143.1L177.4 143.7L177.1 149.3L170.4 148.7zM101.4 182.2L108.1 182.8L107.7 188.5L101.0 187.9zM105.1 222.5L111.8 223.1L111.3 228.7L104.6 228.2z"/>
<path fill="#8dc3c4" stroke="#8dc3c4" stroke-width="1" d="M151.6 101.7L158.3 102.4L158.2 108.0L151.5 107.4zM178.4 110.0L185.1 110.7L184.9 116.3L178.2 115.6zM137.9 111.7L144.7 112.4L144.5 118.0L137.8 117.3zM296.8 181.5L303.5 182.0L303.2 187.4L296.5 186.9z"/>
<path fill="#9dc7c6" stroke="#9dc7c6" stroke-width="1" d="M165.0 103.1L171.8 103.8L171.6 109.4L164.9 108.7z"/>
<path fill="#9bc7c6" stroke="#9bc7c6" stroke-width="1" d="M171.8 103.8L178.5 104.4L178.4 110.0L171.6 109.4zM216.0 180.7L222.7 181.2L222.4 186.8L215.7 186.2z"/>
<path fill="#a3c8c6" stroke="#a3c8c6" stroke-width="1" d="M198.6 106.4L205.3 107.1L205.2 112.7L198.5 112.0zM171.2 126.2L177.9 126.9L177.8 132.5L171.0 131.8zM137.5 128.6L144.2 129.3L144.0 134.9L137.3 134.3z"/>
<path fill="#c4cfca" stroke="#c4cfca" stroke-width="1" d="M205.3 107.1L212.0 107.7L211.9 113.3L205.2 112.7z"/>
<path fill="#4c97bc" stroke="#4c97bc" stroke-width="1" d="M225.5 109.1L232.2 109.7L232.1 115.2L225.4 114.6zM123.9 133.0L130.6 133.7L130.4 139.3L123.7 138.7zM131.9 224.7L138.6 225.2L138.1 230.9L131.4 230.3z"/>
<path fill="#3f8ab9" stroke="#3f8ab9" stroke-width="1" d="M232.2 109.7L238.9 110.4L238.8 115.9L232.1 115.2zM252.2 117.2L258.9 117.8L258.8 123.3L252.1 122.7zM181.5 194.7L188.2 195.2L187.8 200.8L181.1 200.3zM87.2 192.4L93.9 193.0L93.5 198.7L86.8 198.1zM139.1 219.6L145.8 220.1L145.4 225.7L138.6 225.2z"/>
<path fill="#3c83b8" stroke="#3c83b8" stroke-width="1" d="M238.9 110.4L245.6 111.0L245.5 116.5L238.8 115.9zM157.2 141.8L164.0 142.4L163.7 148.1L157.0 147.4zM125.7 218.5L132.4 219.0L131.9 224.7L125.2 224.2z"/>
<path fill="#3f89b9" stroke="#3f89b9" stroke-width="1" d="M245.6 111.0L252.3 111.7L252.2 117.2L245.5 116.5zM114.4 189.1L121.1 189.6L120.7 195.3L114.0 194.7z"/>
<path fill="#4893bb" stroke="#4893bb" stroke-width="1" d="M252.3 111.7L259.0 112.3L258.9 117.8L252.2 117.2zM258.6 128.8L265.3 129.4L265.2 134.9L258.5 134.3zM163.7 148.1L170.4 148.7L170.2 154.3L163.5 153.7z"/>
<path fill="#ded3b7" stroke="#ded3b7" stroke-width="1" d="M279.2 114.2L285.9 114.9L285.8 120.3L279.1 119.7zM279.1 119.7L285.8 120.3L285.6 125.8L278.9 125.2zM303.2 187.4L309.9 187.9L309.6 193.4L302.9 192.9z"/>
<path fill="#e0be70" stroke="#e0be70" stroke-width="1" d="M285.9 114.9L292.6 115.5L292.5 121.0L285.8 120.3zM285.5 131.3L292.2 131.9L292.0 137.3L285.3 136.7zM257.1 167.4L263.9 167.9L263.6 173.4L256.9 172.9zM199.9 218.6L206.7 219.1L206.2 224.6L199.5 224.2zM271.2 251.1L278.0 251.5L277.4 257.0L270.7 256.6zM270.7 256.6L277.4 257.0L276.8 262.5L270.1 262.1zM263.4 261.7L270.1 262.1L269.5 267.6L262.8 267.2zM115.1 257.6L121.8 258.1L121.2 263.7L114.5 263.3z"/>
<path fill="#daa859" stroke="#daa859" stroke-width="1" d="M292.6 115.5L299.3 116.2L299.2 121.6L292.5 121.0zM100.4 267.9L107.1 268.4L106.4 274.1L99.7 273.6zM231.2 304.3L237.9 304.7L237.2 310.2L230.4 309.8z"/>
<path fill="#d8a151" stroke="#d8a151" stroke-width="1" d="M299.3 116.2L306.0 116.8L305.9 122.2L299.2 121.6zM299.2 121.6L305.9 122.2L305.8 127.7L299.1 127.0zM299.1 127.0L305.8 127.7L305.6 133.1L298.9 132.5zM297.7 165.2L304.4 165.7L304.1 171.1L297.4 170.6zM219.1 231.2L225.8 231.6L225.3 237.2L218.6 236.7zM276.3 267.9L283.0 268.3L282.4 273.7L275.6 273.4zM120.5 269.4L127.2 269.9L126.6 275.5L119.8 275.1zM230.4 309.8L237.2 310.2L236.4 315.7L229.6 315.4z"/>
<path fill="#ac5025" stroke="#ac5025" stroke-width="1" d="M339.6 119.9L346.3 120.6L346.2 125.9L339.5 125.3z"/>
<path fill="#61acbf" stroke="#61acbf" stroke-width="1" d="M111.2 103.3L117.9 104.0L117.8 109.7L111.1 109.0z"/>
<path fill="#70b5c0" stroke="#70b5c0" stroke-width="1" d="M124.6 104.7L131.4 105.4L131.2 111.0L124.5 110.4zM90.8 112.7L97.5 113.4L97.4 119.0L90.7 118.4zM207.9 202.4L214.6 202.9L214.2 208.4L207.5 207.9z"/>
<path fill="#aacac7" stroke="#aacac7" stroke-width="1" d="M164.9 108.7L171.6 109.4L171.5 115.0L164.8 114.3zM185.1 234.4L191.8 234.8L191.3 240.4L184.6 239.9z"/>
<path fill="#95c6c5" stroke="#95c6c5" stroke-width="1" d="M198.5 112.0L205.2 112.7L205.1 118.2L198.4 117.6z"/>
<path fill="#418dba" stroke="#418dba" stroke-width="1" d="M225.4 114.6L232.1 115.2L231.9 120.8L225.2 120.1zM203.5 162.8L210.2 163.4L209.9 169.0L203.2 168.4zM87.6 186.7L94.3 187.3L93.9 193.0L87.2 192.4z"/>
<path fill="#397bb6" stroke="#397bb6" stroke-width="1" d="M232.1 115.2L238.8 115.9L238.6 121.4L231.9 120.8zM109.0 165.8L115.7 166.4L115.4 172.1L108.7 171.4zM188.5 189.6L195.2 190.2L194.9 195.8L188.2 195.2zM99.4 210.6L106.1 211.2L105.6 216.8L98.9 216.3z"/>
<path fill="#346fb3" stroke="#346fb3" stroke-width="1" d="M238.8 115.9L245.5 116.5L245.4 122.1L238.6 121.4zM225.1 125.7L231.8 126.3L231.6 131.9L224.9 131.2zM195.9 179.0L202.6 179.6L202.3 185.1L195.6 184.6z"/>
<path fill="#3878b5" stroke="#3878b5" stroke-width="1" d="M245.5 116.5L252.2 117.2L252.1 122.7L245.4 122.1zM203.7 157.3L210.5 157.8L210.2 163.4L203.5 162.8z"/>
<path fill="#9ac6c5" stroke="#9ac6c5" stroke-width="1" d="M272.3 119.1L279.1 119.7L278.9 125.2L272.2 124.6zM96.2 153.2L102.9 153.8L102.6 159.5L95.9 158.9z"/>
<path fill="#dfbc6e" stroke="#dfbc6e" stroke-width="1" d="M285.8 120.3L292.5 121.0L292.3 126.4L285.6 125.8zM284.9 147.7L291.6 148.2L291.4 153.7L284.7 153.1zM221.7 197.9L228.4 198.4L228.0 203.9L221.3 203.4z"/>
<path fill="#d49547" stroke="#d49547" stroke-width="1" d="M319.3 123.5L326.1 124.1L325.9 129.5L319.2 128.9zM156.0 254.9L162.7 255.3L162.1 261.0L155.4 260.5z"/>
<path fill="#ce873d" stroke="#ce873d" stroke-width="1" d="M326.1 124.1L332.8 124.7L332.6 130.1L325.9 129.5zM318.7 145.1L325.4 145.7L325.2 151.1L318.5 150.5zM298.1 154.3L304.8 154.8L304.6 160.3L297.9 159.7z"/>
<path fill="#ac5026" stroke="#ac5026" stroke-width="1" d="M339.5 125.3L346.2 125.9L346.1 131.3L339.3 130.7zM338.4 157.6L345.1 158.1L344.9 163.5L338.2 163.0zM301.4 214.6L308.1 215.1L307.7 220.5L301.0 220.1zM280.9 218.7L287.6 219.2L287.1 224.6L280.4 224.2zM287.6 219.2L294.3 219.6L293.8 225.1L287.1 224.6zM159.4 283.4L166.2 283.8L165.4 289.4L158.7 289.0z"/>
<path fill="#b4ccc8" stroke="#b4ccc8" stroke-width="1" d="M158.1 113.7L164.8 114.3L164.7 120.0L157.9 119.3zM177.9 239.5L184.6 239.9L184.0 245.5L177.3 245.1z"/>
<path fill="#accac7" stroke="#accac7" stroke-width="1" d="M171.5 115.0L178.2 115.6L178.1 121.2L171.4 120.6z"/>
<path fill="#4692bb" stroke="#4692bb" stroke-width="1" d="M218.5 119.5L225.2 120.1L225.1 125.7L218.4 125.1zM145.8 220.1L152.5 220.6L152.1 226.3L145.4 225.7z"/>
<path fill="#3a7eb7" stroke="#3a7eb7" stroke-width="1" d="M225.2 120.1L231.9 120.8L231.8 126.3L225.1 125.7zM218.4 125.1L225.1 125.7L224.9 131.2L218.2 130.6zM197.9 134.3L204.6 135.0L204.4 140.5L197.7 139.9z"/>
<path fill="#3470b3" stroke="#3470b3" stroke-width="1" d="M231.9 120.8L238.6 121.4L238.5 127.0L231.8 126.3zM244.7 144.1L251.4 144.7L251.2 150.3L244.5 149.7zM114.0 194.7L120.7 195.3L120.3 201.0L113.6 200.4zM160.6 204.3L167.3 204.8L166.9 210.4L160.2 209.9zM106.1 211.2L112.8 211.7L112.3 217.4L105.6 216.8zM126.2 212.8L132.9 213.4L132.4 219.0L125.7 218.5z"/>
<path fill="#3168b1" stroke="#3168b1" stroke-width="1" d="M238.6 121.4L245.4 122.1L245.2 127.6L238.5 127.0zM211.3 135.6L218.0 136.2L217.8 141.7L211.1 141.1zM196.5 167.8L203.2 168.4L202.9 174.0L196.2 173.4zM167.7 199.2L174.4 199.7L174.0 205.3L167.3 204.8z"/>
<path fill="#3573b4" stroke="#3573b4" stroke-width="1" d="M245.4 122.1L252.1 122.7L251.9 128.2L245.2 127.6zM116.8 143.7L123.5 144.3L123.3 150.0L116.5 149.4z"/>
<path fill="#3d85b8" stroke="#3d85b8" stroke-width="1" d="M252.1 122.7L258.8 123.3L258.6 128.8L251.9 128.2zM107.3 194.1L114.0 194.7L113.6 200.4L106.9 199.8z"/>
<path fill="#4a96bb" stroke="#4a96bb" stroke-width="1" d="M258.8 123.3L265.5 123.9L265.3 129.4L258.6 128.8z"/>
<path fill="#dfbb6d" stroke="#dfbb6d" stroke-width="1" d="M285.6 125.8L292.3 126.4L292.2 131.9L285.5 131.3zM207.1 213.5L213.8 214.0L213.4 219.6L206.7 219.1zM197.4 246.5L204.2 246.9L203.6 252.5L196.9 252.0zM86.9 266.9L93.7 267.4L93.0 273.1L86.2 272.6z"/>
<path fill="#d9a555" stroke="#d9a555" stroke-width="1" d="M292.3 126.4L299.1 127.0L298.9 132.5L292.2 131.9zM292.2 131.9L298.9 132.5L298.7 137.9L292.0 137.3zM190.7 246.0L197.4 246.5L196.9 252.0L190.2 251.6zM229.9 259.7L236.6 260.1L236.0 265.7L229.3 265.3z"/>
<path fill="#d39346" stroke="#d39346" stroke-width="1" d="M319.2 128.9L325.9 129.5L325.8 134.9L319.0 134.3zM298.6 143.4L305.3 144.0L305.1 149.4L298.4 148.8zM228.4 198.4L235.1 198.9L234.7 204.4L228.0 203.9zM258.4 244.8L265.1 245.2L264.5 250.7L257.8 250.3zM134.0 270.4L140.7 270.8L140.0 276.5L133.3 276.0zM119.8 275.1L126.6 275.5L125.8 281.2L119.1 280.7zM258.1 305.6L264.8 305.9L264.1 311.4L257.4 311.1zM243.9 310.5L250.6 310.8L249.8 316.3L243.1 316.0z"/>
<path fill="#ce863b" stroke="#ce863b" stroke-width="1" d="M325.9 129.5L332.6 130.1L332.5 135.5L325.8 134.9zM235.1 198.9L241.8 199.4L241.4 204.9L234.7 204.4zM302.2 203.7L308.9 204.2L308.5 209.6L301.8 209.2zM140.7 270.8L147.4 271.3L146.7 276.9L140.0 276.5z"/>
<path fill="#ac5126" stroke="#ac5126" stroke-width="1" d="M339.3 130.7L346.1 131.3L345.9 136.7L339.2 136.1zM267.4 217.8L274.1 218.3L273.7 223.8L267.0 223.3zM274.1 218.3L280.9 218.7L280.4 224.2L273.7 223.8zM260.3 222.9L267.0 223.3L266.6 228.8L259.8 228.3zM121.9 309.4L128.6 309.9L127.8 315.5L121.0 315.1zM200.1 330.7L206.9 331.0L206.0 336.6L199.2 336.3z"/>
<path fill="#99c6c5" stroke="#99c6c5" stroke-width="1" d="M137.8 117.3L144.5 118.0L144.4 123.6L137.7 123.0zM98.4 222.0L105.1 222.5L104.6 228.2L97.9 227.6zM165.5 227.3L172.2 227.8L171.7 233.4L165.0 232.9z"/>
<path fill="#bfceca" stroke="#bfceca" stroke-width="1" d="M157.9 119.3L164.7 120.0L164.5 125.6L157.8 124.9z"/>
<path fill="#b9cdc9" stroke="#b9cdc9" stroke-width="1" d="M164.7 120.0L171.4 120.6L171.2 126.2L164.5 125.6zM271.5 146.5L278.2 147.1L278.0 152.6L271.3 152.0zM158.3 232.4L165.0 232.9L164.4 238.5L157.7 238.0z"/>
<path fill="#3065b1" stroke="#3065b1" stroke-width="1" d="M231.8 126.3L238.5 127.0L238.3 132.5L231.6 131.9zM106.5 205.5L113.2 206.1L112.8 211.7L106.1 211.2z"/>
<path fill="#2e61b0" stroke="#2e61b0" stroke-width="1" d="M238.5 127.0L245.2 127.6L245.0 133.1L238.3 132.5zM183.6 155.5L190.3 156.1L190.1 161.7L183.4 161.1zM156.3 164.3L163.0 164.9L162.7 170.5L156.0 170.0z"/>
<path fill="#336db2" stroke="#336db2" stroke-width="1" d="M245.2 127.6L251.9 128.2L251.8 133.7L245.0 133.1zM191.0 139.3L197.7 139.9L197.5 145.5L190.8 144.9zM183.9 149.9L190.6 150.5L190.3 156.1L183.6 155.5z"/>
<path fill="#3b81b7" stroke="#3b81b7" stroke-width="1" d="M251.9 128.2L258.6 128.8L258.5 134.3L251.8 133.7zM174.4 199.7L181.1 200.3L180.7 205.9L174.0 205.3z"/>
<path fill="#dcd3c0" stroke="#dcd3c0" stroke-width="1" d="M278.8 130.7L285.5 131.3L285.3 136.7L278.6 136.1zM264.4 156.9L271.1 157.5L270.8 163.0L264.1 162.4zM91.2 227.1L97.9 227.6L97.4 233.3L90.7 232.8zM279.7 295.6L286.5 295.9L285.8 301.3L279.0 301.0z"/>
<path fill="#d29044" stroke="#d29044" stroke-width="1" d="M319.0 134.3L325.8 134.9L325.6 140.3L318.9 139.7zM299.2 301.9L305.9 302.1L305.2 307.5L298.5 307.3z"/>
<path fill="#cd833a" stroke="#cd833a" stroke-width="1" d="M325.8 134.9L332.5 135.5L332.3 140.9L325.6 140.3z"/>
<path fill="#9b3d21" stroke="#9b3d21" stroke-width="1" d="M345.9 136.7L352.6 137.3L352.4 142.6L345.7 142.0zM345.7 142.0L352.4 142.6L352.2 148.0L345.5 147.4z"/>
<path fill="#62adbf" stroke="#62adbf" stroke-width="1" d="M184.6 127.5L191.4 128.1L191.2 133.7L184.5 133.1z"/>
<path fill="#428eba" stroke="#428eba" stroke-width="1" d="M191.4 128.1L198.1 128.8L197.9 134.3L191.2 133.7zM184.3 138.7L191.0 139.3L190.8 144.9L184.1 144.3zM86.8 198.1L93.5 198.7L93.1 204.3L86.4 203.8z"/>
<path fill="#4994bb" stroke="#4994bb" stroke-width="1" d="M198.1 128.8L204.8 129.4L204.6 135.0L197.9 134.3zM110.7 126.0L117.4 126.7L117.2 132.4L110.5 131.7zM297.0 318.1L303.7 318.4L302.9 323.8L296.2 323.6z"/>
<path fill="#3d84b8" stroke="#3d84b8" stroke-width="1" d="M211.5 130.0L218.2 130.6L218.0 136.2L211.3 135.6zM110.3 137.4L117.0 138.0L116.8 143.7L110.1 143.1zM150.5 141.2L157.2 141.8L157.0 147.4L150.3 146.8zM177.1 149.3L183.9 149.9L183.6 155.5L176.9 154.9zM114.8 183.4L121.5 184.0L121.1 189.6L114.4 189.1zM112.3 217.4L119.0 218.0L118.5 223.6L111.8 223.1zM119.0 218.0L125.7 218.5L125.2 224.2L118.5 223.6z"/>
<path fill="#3066b1" stroke="#3066b1" stroke-width="1" d="M218.2 130.6L224.9 131.2L224.7 136.8L218.0 136.2zM123.5 144.3L130.2 145.0L130.0 150.6L123.3 150.0z"/>
<path fill="#2a59aa" stroke="#2a59aa" stroke-width="1" d="M224.9 131.2L231.6 131.9L231.4 137.4L224.7 136.8zM238.3 132.5L245.0 133.1L244.9 138.6L238.2 138.0zM130.2 145.0L136.9 145.6L136.7 151.2L130.0 150.6zM168.1 193.6L174.8 194.1L174.4 199.7L167.7 199.2z"/>
<path fill="#2752a5" stroke="#2752a5" stroke-width="1" d="M231.6 131.9L238.3 132.5L238.2 138.0L231.4 137.4zM238.0 143.6L244.7 144.1L244.5 149.7L237.8 149.1zM149.8 158.1L156.5 158.7L156.3 164.3L149.6 163.7zM162.4 176.2L169.1 176.7L168.8 182.4L162.1 181.8zM133.8 202.1L140.5 202.6L140.0 208.3L133.3 207.7z"/>
<path fill="#326bb2" stroke="#326bb2" stroke-width="1" d="M245.0 133.1L251.8 133.7L251.6 139.2L244.9 138.6zM196.2 173.4L202.9 174.0L202.6 179.6L195.9 179.0zM188.9 184.0L195.6 184.6L195.2 190.2L188.5 189.6zM99.8 204.9L106.5 205.5L106.1 211.2L99.4 210.6zM290.3 317.9L297.0 318.1L296.2 323.6L289.5 323.3z"/>
<path fill="#3b80b7" stroke="#3b80b7" stroke-width="1" d="M251.8 133.7L258.5 134.3L258.3 139.8L251.6 139.2zM110.1 143.1L116.8 143.7L116.5 149.4L109.8 148.7z"/>
<path fill="#4793bb" stroke="#4793bb" stroke-width="1" d="M258.5 134.3L265.2 134.9L265.0 140.4L258.3 139.8zM203.2 168.4L209.9 169.0L209.6 174.5L202.9 174.0zM174.0 205.3L180.7 205.9L180.3 211.5L173.6 211.0zM275.2 328.3L281.9 328.5L281.1 334.0L274.4 333.7z"/>
<path fill="#d6d3cd" stroke="#d6d3cd" stroke-width="1" d="M278.6 136.1L285.3 136.7L285.1 142.2L278.4 141.6z"/>
<path fill="#e1c37d" stroke="#e1c37d" stroke-width="1" d="M285.3 136.7L292.0 137.3L291.8 142.8L285.1 142.2zM191.8 234.8L198.5 235.3L198.0 240.9L191.3 240.4z"/>
<path fill="#d9a556" stroke="#d9a556" stroke-width="1" d="M292.0 137.3L298.7 137.9L298.6 143.4L291.8 142.8z"/>
<path fill="#d59849" stroke="#d59849" stroke-width="1" d="M305.4 138.5L312.2 139.1L312.0 144.5L305.3 144.0zM304.4 165.7L311.1 166.2L310.8 171.7L304.1 171.1zM260.9 333.3L267.6 333.5L266.8 339.0L260.0 338.7z"/>
<path fill="#d18d41" stroke="#d18d41" stroke-width="1" d="M318.9 139.7L325.6 140.3L325.4 145.7L318.7 145.1zM201.1 274.7L207.8 275.2L207.2 280.7L200.5 280.3zM84.8 284.0L91.5 284.5L90.7 290.1L84.0 289.6z"/>
<path fill="#cb8139" stroke="#cb8139" stroke-width="1" d="M325.6 140.3L332.3 140.9L332.1 146.3L325.4 145.7zM233.5 221.0L240.2 221.5L239.7 227.0L233.0 226.5zM189.6 257.2L196.3 257.6L195.7 263.2L189.0 262.8z"/>
<path fill="#93331f" stroke="#93331f" stroke-width="1" d="M352.4 142.6L359.1 143.2L358.9 148.5L352.2 148.0zM344.9 163.5L351.6 164.0L351.3 169.4L344.6 168.9zM343.1 195.7L349.8 196.2L349.5 201.6L342.8 201.1zM342.8 201.1L349.5 201.6L349.1 206.9L342.4 206.5zM305.3 247.6L312.0 248.0L311.5 253.4L304.8 253.0zM304.8 253.0L311.5 253.4L311.0 258.8L304.3 258.5zM303.7 263.9L310.4 264.2L309.8 269.6L303.1 269.3zM307.3 291.3L314.0 291.6L313.3 297.0L306.6 296.7zM309.7 324.0L316.4 324.2L315.6 329.6L308.9 329.4z"/>
<path fill="#549ebd" stroke="#549ebd" stroke-width="1" d="M117.4 126.7L124.1 127.4L123.9 133.0L117.2 132.4z"/>
<path fill="#3a7eb6" stroke="#3a7eb6" stroke-width="1" d="M191.2 133.7L197.9 134.3L197.7 139.9L191.0 139.3z"/>
<path fill="#3e88b9" stroke="#3e88b9" stroke-width="1" d="M204.6 135.0L211.3 135.6L211.1 141.1L204.4 140.5zM201.6 196.3L208.3 196.8L207.9 202.4L201.2 201.9zM100.6 193.6L107.3 194.1L106.9 199.8L100.2 199.2z"/>
<path fill="#21449a" stroke="#21449a" stroke-width="1" d="M218.0 136.2L224.7 136.8L224.5 142.3L217.8 141.7z"/>
<path fill="#1b3790" stroke="#1b3790" stroke-width="1" d="M224.7 136.8L231.4 137.4L231.3 143.0L224.5 142.3z"/>
<path fill="#1b3890" stroke="#1b3890" stroke-width="1" d="M231.4 137.4L238.2 138.0L238.0 143.6L231.3 143.0z"/>
<path fill="#264fa3" stroke="#264fa3" stroke-width="1" d="M238.2 138.0L244.9 138.6L244.7 144.1L238.0 143.6zM123.3 150.0L130.0 150.6L129.7 156.3L123.0 155.7z"/>
<path fill="#3169b1" stroke="#3169b1" stroke-width="1" d="M244.9 138.6L251.6 139.2L251.4 144.7L244.7 144.1zM116.5 149.4L123.3 150.0L123.0 155.7L116.3 155.0zM115.4 172.1L122.1 172.7L121.8 178.3L115.1 177.7zM140.0 208.3L146.7 208.8L146.3 214.5L139.6 213.9z"/>
<path fill="#3b7fb7" stroke="#3b7fb7" stroke-width="1" d="M251.6 139.2L258.3 139.8L258.1 145.3L251.4 144.7zM117.0 138.0L123.7 138.7L123.5 144.3L116.8 143.7zM217.2 158.4L223.9 159.0L223.6 164.6L216.9 164.0zM195.2 190.2L202.0 190.7L201.6 196.3L194.9 195.8z"/>
<path fill="#4792bb" stroke="#4792bb" stroke-width="1" d="M258.3 139.8L265.0 140.4L264.8 145.9L258.1 145.3zM230.6 159.6L237.3 160.1L237.0 165.7L230.3 165.1zM202.6 179.6L209.3 180.1L209.0 185.7L202.3 185.1z"/>
<path fill="#d4d3cc" stroke="#d4d3cc" stroke-width="1" d="M278.4 141.6L285.1 142.2L284.9 147.7L278.2 147.1z"/>
<path fill="#d9a353" stroke="#d9a353" stroke-width="1" d="M291.8 142.8L298.6 143.4L298.4 148.8L291.6 148.2zM236.6 260.1L243.3 260.5L242.7 266.1L236.0 265.7z"/>
<path fill="#d18f42" stroke="#d18f42" stroke-width="1" d="M305.3 144.0L312.0 144.5L311.8 150.0L305.1 149.4zM309.2 198.8L315.9 199.3L315.6 204.7L308.9 204.2z"/>
<path fill="#d18f43" stroke="#d18f43" stroke-width="1" d="M312.0 144.5L318.7 145.1L318.5 150.5L311.8 150.0zM226.8 220.5L233.5 221.0L233.0 226.5L226.3 226.1zM244.4 249.5L251.1 249.9L250.6 255.4L243.9 255.0zM105.7 279.8L112.4 280.2L111.6 285.9L104.9 285.4zM244.7 305.0L251.4 305.3L250.6 310.8L243.9 310.5zM221.2 326.1L228.0 326.4L227.1 331.9L220.4 331.7z"/>
<path fill="#ca7f38" stroke="#ca7f38" stroke-width="1" d="M325.4 145.7L332.1 146.3L331.9 151.7L325.2 151.1zM318.3 155.9L325.0 156.5L324.7 161.9L318.0 161.4zM234.3 209.9L241.0 210.4L240.6 216.0L233.9 215.5zM233.9 215.5L240.6 216.0L240.2 221.5L233.5 221.0zM111.6 285.9L118.4 286.4L117.6 292.0L110.9 291.6zM97.4 290.6L104.2 291.1L103.4 296.8L96.6 296.3zM211.0 303.3L217.7 303.6L217.0 309.2L210.2 308.9z"/>
<path fill="#c06c2e" stroke="#c06c2e" stroke-width="1" d="M332.1 146.3L338.8 146.8L338.6 152.2L331.9 151.7zM248.1 205.4L254.9 205.9L254.5 211.4L247.7 210.9zM245.5 238.5L252.2 238.9L251.7 244.4L244.9 244.0zM290.8 257.7L297.5 258.1L297.0 263.5L290.3 263.2z"/>
<path fill="#91311e" stroke="#91311e" stroke-width="1" d="M352.2 148.0L358.9 148.5L358.7 153.9L352.0 153.3zM342.0 211.8L348.7 212.3L348.3 217.6L341.6 217.2z"/>
<path fill="#529dbc" stroke="#529dbc" stroke-width="1" d="M103.8 131.1L110.5 131.7L110.3 137.4L103.6 136.8z"/>
<path fill="#408bba" stroke="#408bba" stroke-width="1" d="M110.5 131.7L117.2 132.4L117.0 138.0L110.3 137.4zM188.2 195.2L194.9 195.8L194.5 201.3L187.8 200.8zM291.0 312.4L297.7 312.7L297.0 318.1L290.3 317.9z"/>
<path fill="#4490bb" stroke="#4490bb" stroke-width="1" d="M117.2 132.4L123.9 133.0L123.7 138.7L117.0 138.0zM153.0 215.0L159.7 215.5L159.2 221.1L152.5 220.6z"/>
<path fill="#3067b1" stroke="#3067b1" stroke-width="1" d="M197.7 139.9L204.4 140.5L204.2 146.1L197.5 145.5zM169.4 171.1L176.1 171.7L175.8 177.3L169.1 176.7z"/>
<path fill="#326cb2" stroke="#326cb2" stroke-width="1" d="M204.4 140.5L211.1 141.1L210.9 146.7L204.2 146.1zM176.7 160.5L183.4 161.1L183.1 166.7L176.4 166.1z"/>
<path fill="#244ca0" stroke="#244ca0" stroke-width="1" d="M211.1 141.1L217.8 141.7L217.6 147.3L210.9 146.7zM143.4 151.9L150.1 152.5L149.8 158.1L143.1 157.5zM140.5 202.6L147.2 203.2L146.7 208.8L140.0 208.3z"/>
<path fill="#182e87" stroke="#182e87" stroke-width="1" d="M217.8 141.7L224.5 142.3L224.3 147.9L217.6 147.3z"/>
<path fill="#172c83" stroke="#172c83" stroke-width="1" d="M224.5 142.3L231.3 143.0L231.0 148.5L224.3 147.9z"/>
<path fill="#193089" stroke="#193089" stroke-width="1" d="M231.3 143.0L238.0 143.6L237.8 149.1L231.0 148.5z"/>
<path fill="#408cba" stroke="#408cba" stroke-width="1" d="M251.4 144.7L258.1 145.3L257.9 150.8L251.2 150.3zM194.9 195.8L201.6 196.3L201.2 201.9L194.5 201.3z"/>
<path fill="#dfd3b0" stroke="#dfd3b0" stroke-width="1" d="M278.2 147.1L284.9 147.7L284.7 153.1L278.0 152.6z"/>
<path fill="#c97d37" stroke="#c97d37" stroke-width="1" d="M325.2 151.1L331.9 151.7L331.7 157.1L325.0 156.5zM255.6 194.9L262.3 195.4L261.9 200.9L255.2 200.4zM182.9 256.7L189.6 257.2L189.0 262.8L182.3 262.3zM299.9 296.4L306.6 296.7L305.9 302.1L299.2 301.9zM252.1 299.8L258.8 300.1L258.1 305.6L251.4 305.3zM250.6 310.8L257.4 311.1L256.6 316.6L249.8 316.3z"/>
<path fill="#c06d2f" stroke="#c06d2f" stroke-width="1" d="M331.9 151.7L338.6 152.2L338.4 157.6L331.7 157.1zM139.3 282.1L146.0 282.5L145.3 288.2L138.5 287.7zM110.1 297.2L116.8 297.7L116.0 303.3L109.3 302.9zM204.3 302.9L211.0 303.3L210.2 308.9L203.5 308.5z"/>
<path fill="#b25828" stroke="#b25828" stroke-width="1" d="M338.6 152.2L345.3 152.8L345.1 158.1L338.4 157.6zM330.6 178.6L337.4 179.1L337.1 184.5L330.4 184.0zM259.4 233.8L266.1 234.3L265.6 239.8L258.9 239.3z"/>
<path fill="#8e301e" stroke="#8e301e" stroke-width="1" d="M352.0 153.3L358.7 153.9L358.5 159.2L351.8 158.7zM351.1 174.8L357.8 175.3L357.5 180.6L350.8 180.1zM341.2 222.6L347.9 223.0L347.5 228.3L340.8 227.9z"/>
<path fill="#397cb6" stroke="#397cb6" stroke-width="1" d="M123.7 138.7L130.4 139.3L130.2 145.0L123.5 144.3zM157.0 147.4L163.7 148.1L163.5 153.7L156.8 153.1zM210.5 157.8L217.2 158.4L216.9 164.0L210.2 163.4zM163.2 159.3L170.0 159.9L169.7 165.5L163.0 164.9zM167.3 204.8L174.0 205.3L173.6 211.0L166.9 210.4zM153.4 209.4L160.2 209.9L159.7 215.5L153.0 215.0zM139.6 213.9L146.3 214.5L145.8 220.1L139.1 219.6z"/>
<path fill="#387ab5" stroke="#387ab5" stroke-width="1" d="M130.4 139.3L137.1 139.9L136.9 145.6L130.2 145.0z"/>
<path fill="#3a7db6" stroke="#3a7db6" stroke-width="1" d="M137.1 139.9L143.8 140.6L143.6 146.2L136.9 145.6zM184.1 144.3L190.8 144.9L190.6 150.5L183.9 149.9zM109.8 148.7L116.5 149.4L116.3 155.0L109.6 154.4z"/>
<path fill="#3e87b9" stroke="#3e87b9" stroke-width="1" d="M143.8 140.6L150.5 141.2L150.3 146.8L143.6 146.2zM163.5 153.7L170.2 154.3L170.0 159.9L163.2 159.3zM202.0 190.7L208.7 191.2L208.3 196.8L201.6 196.3zM160.2 209.9L166.9 210.4L166.4 216.0L159.7 215.5z"/>
<path fill="#4b96bb" stroke="#4b96bb" stroke-width="1" d="M177.4 143.7L184.1 144.3L183.9 149.9L177.1 149.3z"/>
<path fill="#2f65b0" stroke="#2f65b0" stroke-width="1" d="M190.8 144.9L197.5 145.5L197.3 151.1L190.6 150.5zM196.8 162.3L203.5 162.8L203.2 168.4L196.5 167.8zM276.0 322.8L282.7 323.1L281.9 328.5L275.2 328.3z"/>
<path fill="#2e62b0" stroke="#2e62b0" stroke-width="1" d="M197.5 145.5L204.2 146.1L204.0 151.7L197.3 151.1zM100.2 199.2L106.9 199.8L106.5 205.5L99.8 204.9zM153.9 203.7L160.6 204.3L160.2 209.9L153.4 209.4zM113.2 206.1L119.9 206.6L119.5 212.3L112.8 211.7zM126.6 207.2L133.3 207.7L132.9 213.4L126.2 212.8z"/>
<path fill="#3167b1" stroke="#3167b1" stroke-width="1" d="M204.2 146.1L210.9 146.7L210.7 152.3L204.0 151.7z"/>
<path fill="#23499e" stroke="#23499e" stroke-width="1" d="M210.9 146.7L217.6 147.3L217.4 152.9L210.7 152.3zM161.4 193.0L168.1 193.6L167.7 199.2L161.0 198.7z"/>
<path fill="#182d85" stroke="#182d85" stroke-width="1" d="M217.6 147.3L224.3 147.9L224.1 153.4L217.4 152.9z"/>
<path fill="#182c84" stroke="#182c84" stroke-width="1" d="M224.3 147.9L231.0 148.5L230.8 154.0L224.1 153.4zM128.5 178.9L135.2 179.5L134.9 185.1L128.2 184.6zM281.9 328.5L288.7 328.8L287.8 334.2L281.1 334.0z"/>
<path fill="#19328b" stroke="#19328b" stroke-width="1" d="M231.0 148.5L237.8 149.1L237.5 154.6L230.8 154.0z"/>
<path fill="#2b5aab" stroke="#2b5aab" stroke-width="1" d="M237.8 149.1L244.5 149.7L244.2 155.2L237.5 154.6zM115.7 166.4L122.5 167.0L122.1 172.7L115.4 172.1zM106.9 199.8L113.6 200.4L113.2 206.1L106.5 205.5z"/>
<path fill="#387ab6" stroke="#387ab6" stroke-width="1" d="M244.5 149.7L251.2 150.3L250.9 155.8L244.2 155.2zM109.6 154.4L116.3 155.0L116.0 160.7L109.3 160.1zM169.7 165.5L176.4 166.1L176.1 171.7L169.4 171.1zM281.1 334.0L287.8 334.2L287.0 339.6L280.2 339.4z"/>
<path fill="#bbcdc9" stroke="#bbcdc9" stroke-width="1" d="M264.6 151.4L271.3 152.0L271.1 157.5L264.4 156.9z"/>
<path fill="#e1c98a" stroke="#e1c98a" stroke-width="1" d="M278.0 152.6L284.7 153.1L284.5 158.6L277.8 158.0z"/>
<path fill="#d79d4e" stroke="#d79d4e" stroke-width="1" d="M291.4 153.7L298.1 154.3L297.9 159.7L291.2 159.2zM218.1 242.2L224.8 242.7L224.3 248.2L217.6 247.8zM99.7 273.6L106.4 274.1L105.7 279.8L99.0 279.3z"/>
<path fill="#bc672c" stroke="#bc672c" stroke-width="1" d="M331.7 157.1L338.4 157.6L338.2 163.0L331.4 162.4z"/>
<path fill="#973720" stroke="#973720" stroke-width="1" d="M345.1 158.1L351.8 158.7L351.6 164.0L344.9 163.5zM301.3 334.6L308.1 334.8L307.2 340.2L300.5 340.0z"/>
<path fill="#8c2e1e" stroke="#8c2e1e" stroke-width="1" d="M351.8 158.7L358.5 159.2L358.3 164.6L351.6 164.0zM351.3 169.4L358.0 169.9L357.8 175.3L351.1 174.8zM348.7 212.3L355.4 212.7L355.0 218.0L348.3 217.6zM347.5 228.3L354.2 228.7L353.7 234.1L347.0 233.7zM347.0 233.7L353.7 234.1L353.3 239.4L346.6 239.1zM326.4 237.9L333.1 238.3L332.7 243.7L326.0 243.3zM333.1 238.3L339.9 238.7L339.4 244.1L332.7 243.7zM339.9 238.7L346.6 239.1L346.1 244.4L339.4 244.1zM346.6 239.1L353.3 239.4L352.8 244.8L346.1 244.4zM315.9 275.4L322.6 275.7L322.0 281.1L315.3 280.8zM315.3 280.8L322.0 281.1L321.4 286.5L314.7 286.2zM314.7 286.2L321.4 286.5L320.7 291.8L314.0 291.6zM320.1 297.2L326.8 297.5L326.1 302.9L319.4 302.6zM308.9 329.4L315.6 329.6L314.8 335.0L308.1 334.8zM308.1 334.8L314.8 335.0L314.0 340.4L307.2 340.2z"/>
<path fill="#c2cfca" stroke="#c2cfca" stroke-width="1" d="M89.9 141.2L96.6 141.8L96.4 147.5L89.7 146.8z"/>
<path fill="#2c5dae" stroke="#2c5dae" stroke-width="1" d="M136.9 145.6L143.6 146.2L143.4 151.9L136.7 151.2zM175.5 182.9L182.2 183.5L181.8 189.1L175.1 188.5z"/>
<path fill="#336cb2" stroke="#336cb2" stroke-width="1" d="M143.6 146.2L150.3 146.8L150.1 152.5L143.4 151.9zM112.8 211.7L119.5 212.3L119.0 218.0L112.3 217.4z"/>
<path fill="#3673b4" stroke="#3673b4" stroke-width="1" d="M150.3 146.8L157.0 147.4L156.8 153.1L150.1 152.5z"/>
<path fill="#2b5bac" stroke="#2b5bac" stroke-width="1" d="M190.6 150.5L197.3 151.1L197.0 156.7L190.3 156.1zM197.3 151.1L204.0 151.7L203.7 157.3L197.0 156.7zM176.1 171.7L182.8 172.3L182.5 177.9L175.8 177.3z"/>
<path fill="#2f63b0" stroke="#2f63b0" stroke-width="1" d="M204.0 151.7L210.7 152.3L210.5 157.8L203.7 157.3zM150.1 152.5L156.8 153.1L156.5 158.7L149.8 158.1zM176.4 166.1L183.1 166.7L182.8 172.3L176.1 171.7zM162.7 170.5L169.4 171.1L169.1 176.7L162.4 176.2zM133.3 207.7L140.0 208.3L139.6 213.9L132.9 213.4z"/>
<path fill="#234a9e" stroke="#234a9e" stroke-width="1" d="M210.7 152.3L217.4 152.9L217.2 158.4L210.5 157.8z"/>
<path fill="#1a348e" stroke="#1a348e" stroke-width="1" d="M217.4 152.9L224.1 153.4L223.9 159.0L217.2 158.4z"/>
<path fill="#1e3d95" stroke="#1e3d95" stroke-width="1" d="M224.1 153.4L230.8 154.0L230.6 159.6L223.9 159.0z"/>
<path fill="#2854a6" stroke="#2854a6" stroke-width="1" d="M230.8 154.0L237.5 154.6L237.3 160.1L230.6 159.6z"/>
<path fill="#397ab6" stroke="#397ab6" stroke-width="1" d="M237.5 154.6L244.2 155.2L244.0 160.7L237.3 160.1z"/>
<path fill="#e1d2a3" stroke="#e1d2a3" stroke-width="1" d="M271.1 157.5L277.8 158.0L277.5 163.5L270.8 163.0zM211.9 236.2L218.6 236.7L218.1 242.2L211.4 241.8z"/>
<path fill="#e1c683" stroke="#e1c683" stroke-width="1" d="M277.8 158.0L284.5 158.6L284.2 164.1L277.5 163.5zM243.5 171.8L250.2 172.3L249.9 177.8L243.2 177.3zM232.7 293.3L239.4 293.6L238.7 299.1L231.9 298.8z"/>
<path fill="#dfb96b" stroke="#dfb96b" stroke-width="1" d="M284.5 158.6L291.2 159.2L290.9 164.6L284.2 164.1zM192.8 223.7L199.5 224.2L199.0 229.7L192.3 229.3zM143.2 248.3L149.9 248.8L149.3 254.4L142.6 253.9zM256.7 261.3L263.4 261.7L262.8 267.2L256.1 266.8zM215.2 270.0L221.9 270.4L221.3 275.9L214.6 275.5z"/>
<path fill="#d29043" stroke="#d29043" stroke-width="1" d="M297.9 159.7L304.6 160.3L304.4 165.7L297.7 165.2zM235.5 193.3L242.2 193.9L241.8 199.4L235.1 198.9zM226.3 226.1L233.0 226.5L232.5 232.1L225.8 231.6z"/>
<path fill="#cd853a" stroke="#cd853a" stroke-width="1" d="M311.3 160.8L318.0 161.4L317.8 166.8L311.1 166.2z"/>
<path fill="#c97e37" stroke="#c97e37" stroke-width="1" d="M318.0 161.4L324.7 161.9L324.5 167.3L317.8 166.8zM238.2 243.6L244.9 244.0L244.4 249.5L237.7 249.1z"/>
<path fill="#c57533" stroke="#c57533" stroke-width="1" d="M324.7 161.9L331.4 162.4L331.2 167.8L324.5 167.3zM323.9 178.1L330.6 178.6L330.4 184.0L323.6 183.5zM308.9 204.2L315.6 204.7L315.2 210.1L308.5 209.6zM240.2 221.5L246.9 221.9L246.4 227.5L239.7 227.0zM188.3 268.3L195.1 268.8L194.4 274.3L187.7 273.9zM199.1 291.4L205.8 291.8L205.0 297.4L198.3 297.0zM205.0 297.4L211.8 297.8L211.0 303.3L204.3 302.9z"/>
<path fill="#b7602a" stroke="#b7602a" stroke-width="1" d="M331.4 162.4L338.2 163.0L337.9 168.4L331.2 167.8zM186.3 285.1L193.0 285.5L192.3 291.1L185.6 290.7zM99.0 325.1L105.7 325.5L104.8 331.2L98.0 330.8z"/>
<path fill="#a64823" stroke="#a64823" stroke-width="1" d="M338.2 163.0L344.9 163.5L344.6 168.9L337.9 168.4zM178.9 290.3L185.6 290.7L184.9 296.3L178.1 295.9zM158.0 294.6L164.7 295.1L163.9 300.7L157.2 300.3zM195.1 319.3L201.9 319.6L201.0 325.2L194.3 324.8zM125.9 326.8L132.7 327.2L131.8 332.8L125.0 332.4z"/>
<path fill="#8a2c1d" stroke="#8a2c1d" stroke-width="1" d="M351.6 164.0L358.3 164.6L358.0 169.9L351.3 169.4zM350.2 190.8L356.9 191.3L356.5 196.7L349.8 196.2zM349.8 196.2L356.5 196.7L356.2 202.0L349.5 201.6zM349.5 201.6L356.2 202.0L355.8 207.3L349.1 206.9zM325.4 248.7L332.2 249.1L331.6 254.5L324.9 254.1zM332.2 249.1L338.9 249.4L338.3 254.8L331.6 254.5zM338.9 249.4L345.6 249.8L345.1 255.1L338.3 254.8zM345.6 249.8L352.3 250.1L351.8 255.5L345.1 255.1zM324.9 254.1L331.6 254.5L331.1 259.8L324.4 259.5zM331.6 254.5L338.3 254.8L337.8 260.2L331.1 259.8zM338.3 254.8L345.1 255.1L344.5 260.5L337.8 260.2zM345.1 255.1L351.8 255.5L351.2 260.8L344.5 260.5zM324.4 259.5L331.1 259.8L330.5 265.2L323.8 264.9zM331.1 259.8L337.8 260.2L337.2 265.5L330.5 265.2zM337.8 260.2L344.5 260.5L344.0 265.8L337.2 265.5zM344.5 260.5L351.2 260.8L350.7 266.2L344.0 265.8zM323.8 264.9L330.5 265.2L330.0 270.6L323.2 270.3zM330.5 265.2L337.2 265.5L336.7 270.9L330.0 270.6zM337.2 265.5L344.0 265.8L343.4 271.2L336.7 270.9zM344.0 265.8L350.7 266.2L350.1 271.5L343.4 271.2zM323.2 270.3L330.0 270.6L329.4 276.0L322.6 275.7zM330.0 270.6L336.7 270.9L336.1 276.3L329.4 276.0zM336.7 270.9L343.4 271.2L342.8 276.6L336.1 276.3zM343.4 271.2L350.1 271.5L349.5 276.8L342.8 276.6zM322.6 275.7L329.4 276.0L328.7 281.4L322.0 281.1zM329.4 276.0L336.1 276.3L335.5 281.6L328.7 281.4zM336.1 276.3L342.8 276.6L342.2 281.9L335.5 281.6zM342.8 276.6L349.5 276.8L348.9 282.2L342.2 281.9zM322.0 281.1L328.7 281.4L328.1 286.7L321.4 286.5zM328.7 281.4L335.5 281.6L334.8 287.0L328.1 286.7zM335.5 281.6L342.2 281.9L341.6 287.3L334.8 287.0zM342.2 281.9L348.9 282.2L348.3 287.5L341.6 287.3zM328.1 286.7L334.8 287.0L334.2 292.4L327.5 292.1zM334.8 287.0L341.6 287.3L340.9 292.6L334.2 292.4zM341.6 287.3L348.3 287.5L347.6 292.9L340.9 292.6zM327.5 292.1L334.2 292.4L333.5 297.7L326.8 297.5zM334.2 292.4L340.9 292.6L340.2 298.0L333.5 297.7zM340.9 292.6L347.6 292.9L347.0 298.2L340.2 298.0zM326.8 297.5L333.5 297.7L332.8 303.1L326.1 302.9zM333.5 297.7L340.2 298.0L339.6 303.4L332.8 303.1zM340.2 298.0L347.0 298.2L346.3 303.6L339.6 303.4zM326.1 302.9L332.8 303.1L332.1 308.5L325.4 308.3zM332.8 303.1L339.6 303.4L338.9 308.7L332.1 308.5zM339.6 303.4L346.3 303.6L345.6 308.9L338.9 308.7zM325.4 308.3L332.1 308.5L331.4 313.9L324.7 313.6zM332.1 308.5L338.9 308.7L338.1 314.1L331.4 313.9zM338.9 308.7L345.6 308.9L344.9 314.3L338.1 314.1z"/>
<path fill="#c1cfca" stroke="#c1cfca" stroke-width="1" d="M89.7 146.8L96.4 147.5L96.2 153.2L89.5 152.5z"/>
<path fill="#9fc7c6" stroke="#9fc7c6" stroke-width="1" d="M96.4 147.5L103.1 148.1L102.9 153.8L96.2 153.2z"/>
<path fill="#19318a" stroke="#19318a" stroke-width="1" d="M130.0 150.6L136.7 151.2L136.4 156.9L129.7 156.3z"/>
<path fill="#19318b" stroke="#19318b" stroke-width="1" d="M136.7 151.2L143.4 151.9L143.1 157.5L136.4 156.9zM122.7 161.3L129.4 161.9L129.2 167.6L122.5 167.0zM140.9 197.0L147.6 197.6L147.2 203.2L140.5 202.6zM147.6 197.6L154.3 198.1L153.9 203.7L147.2 203.2z"/>
<path fill="#3674b4" stroke="#3674b4" stroke-width="1" d="M156.8 153.1L163.5 153.7L163.2 159.3L156.5 158.7zM93.5 198.7L100.2 199.2L99.8 204.9L93.1 204.3z"/>
<path fill="#438fba" stroke="#438fba" stroke-width="1" d="M170.2 154.3L176.9 154.9L176.7 160.5L170.0 159.9zM105.6 216.8L112.3 217.4L111.8 223.1L105.1 222.5z"/>
<path fill="#3675b4" stroke="#3675b4" stroke-width="1" d="M176.9 154.9L183.6 155.5L183.4 161.1L176.7 160.5z"/>
<path fill="#2853a6" stroke="#2853a6" stroke-width="1" d="M190.3 156.1L197.0 156.7L196.8 162.3L190.1 161.7z"/>
<path fill="#2d60af" stroke="#2d60af" stroke-width="1" d="M197.0 156.7L203.7 157.3L203.5 162.8L196.8 162.3zM121.1 189.6L127.8 190.2L127.4 195.9L120.7 195.3z"/>
<path fill="#3d86b9" stroke="#3d86b9" stroke-width="1" d="M223.9 159.0L230.6 159.6L230.3 165.1L223.6 164.6z"/>
<path fill="#dbd4c8" stroke="#dbd4c8" stroke-width="1" d="M250.7 161.3L257.4 161.8L257.1 167.4L250.4 166.8zM185.6 228.8L192.3 229.3L191.8 234.8L185.1 234.4z"/>
<path fill="#e2ce97" stroke="#e2ce97" stroke-width="1" d="M264.1 162.4L270.8 163.0L270.6 168.4L263.9 167.9z"/>
<path fill="#e1c888" stroke="#e1c888" stroke-width="1" d="M270.8 163.0L277.5 163.5L277.3 169.0L270.6 168.4zM263.9 167.9L270.6 168.4L270.3 173.9L263.6 173.4zM270.6 168.4L277.3 169.0L277.0 174.5L270.3 173.9zM277.3 169.0L284.0 169.5L283.7 175.0L277.0 174.5zM284.0 169.5L290.7 170.1L290.4 175.5L283.7 175.0zM290.7 170.1L297.4 170.6L297.1 176.1L290.4 175.5zM297.4 170.6L304.1 171.1L303.8 176.6L297.1 176.1zM211.4 241.8L218.1 242.2L217.6 247.8L210.9 247.4zM95.0 256.1L101.7 256.6L101.1 262.2L94.3 261.7zM240.1 288.1L246.8 288.5L246.1 294.0L239.4 293.6z"/>
<path fill="#e0c37b" stroke="#e0c37b" stroke-width="1" d="M277.5 163.5L284.2 164.1L284.0 169.5L277.3 169.0z"/>
<path fill="#e0bd6f" stroke="#e0bd6f" stroke-width="1" d="M284.2 164.1L290.9 164.6L290.7 170.1L284.0 169.5zM192.3 229.3L199.0 229.7L198.5 235.3L191.8 234.8zM94.3 261.7L101.1 262.2L100.4 267.9L93.7 267.4z"/>
<path fill="#ddb466" stroke="#ddb466" stroke-width="1" d="M290.9 164.6L297.7 165.2L297.4 170.6L290.7 170.1z"/>
<path fill="#b45b29" stroke="#b45b29" stroke-width="1" d="M331.2 167.8L337.9 168.4L337.6 173.7L330.9 173.2zM107.5 314.2L114.3 314.6L113.4 320.3L106.6 319.9z"/>
<path fill="#a24422" stroke="#a24422" stroke-width="1" d="M337.9 168.4L344.6 168.9L344.3 174.3L337.6 173.7zM336.7 189.9L343.4 190.4L343.1 195.7L336.4 195.3zM163.9 300.7L170.6 301.1L169.8 306.7L163.1 306.3z"/>
<path fill="#93341f" stroke="#93341f" stroke-width="1" d="M344.6 168.9L351.3 169.4L351.1 174.8L344.3 174.3zM328.2 216.4L334.9 216.8L334.5 222.2L327.8 221.8zM305.8 242.2L312.5 242.6L312.0 248.0L305.3 247.6z"/>
<path fill="#2e60af" stroke="#2e60af" stroke-width="1" d="M116.3 155.0L123.0 155.7L122.7 161.3L116.0 160.7z"/>
<path fill="#1e3e95" stroke="#1e3e95" stroke-width="1" d="M123.0 155.7L129.7 156.3L129.4 161.9L122.7 161.3z"/>
<path fill="#17297f" stroke="#17297f" stroke-width="1" d="M129.7 156.3L136.4 156.9L136.1 162.5L129.4 161.9zM136.4 156.9L143.1 157.5L142.9 163.1L136.1 162.5z"/>
<path fill="#1b368f" stroke="#1b368f" stroke-width="1" d="M143.1 157.5L149.8 158.1L149.6 163.7L142.9 163.1zM154.7 192.5L161.4 193.0L161.0 198.7L154.3 198.1z"/>
<path fill="#326ab2" stroke="#326ab2" stroke-width="1" d="M156.5 158.7L163.2 159.3L163.0 164.9L156.3 164.3zM182.2 183.5L188.9 184.0L188.5 189.6L181.8 189.1z"/>
<path fill="#3e86b9" stroke="#3e86b9" stroke-width="1" d="M170.0 159.9L176.7 160.5L176.4 166.1L169.7 165.5zM146.3 214.5L153.0 215.0L152.5 220.6L145.8 220.1z"/>
<path fill="#2956a8" stroke="#2956a8" stroke-width="1" d="M183.4 161.1L190.1 161.7L189.8 167.3L183.1 166.7zM121.5 184.0L128.2 184.6L127.8 190.2L121.1 189.6zM120.7 195.3L127.4 195.9L127.0 201.5L120.3 201.0z"/>
<path fill="#244ba0" stroke="#244ba0" stroke-width="1" d="M190.1 161.7L196.8 162.3L196.5 167.8L189.8 167.3zM189.8 167.3L196.5 167.8L196.2 173.4L189.5 172.9zM168.8 182.4L175.5 182.9L175.1 188.5L168.4 188.0z"/>
<path fill="#ded3b6" stroke="#ded3b6" stroke-width="1" d="M243.7 166.2L250.4 166.8L250.2 172.3L243.5 171.8z"/>
<path fill="#e0c27b" stroke="#e0c27b" stroke-width="1" d="M250.4 166.8L257.1 167.4L256.9 172.9L250.2 172.3zM163.9 244.1L170.6 244.6L170.0 250.2L163.3 249.7zM80.2 266.4L86.9 266.9L86.2 272.6L79.5 272.1z"/>
<path fill="#e1c47f" stroke="#e1c47f" stroke-width="1" d="M304.1 171.1L310.8 171.7L310.5 177.1L303.8 176.6zM262.5 322.3L269.3 322.6L268.4 328.0L261.7 327.8z"/>
<path fill="#d39345" stroke="#d39345" stroke-width="1" d="M317.5 172.2L324.2 172.7L323.9 178.1L317.2 177.6zM141.3 265.2L148.1 265.7L147.4 271.3L140.7 270.8zM257.4 311.1L264.1 311.4L263.3 316.8L256.6 316.6z"/>
<path fill="#b15828" stroke="#b15828" stroke-width="1" d="M330.9 173.2L337.6 173.7L337.4 179.1L330.6 178.6zM266.1 234.3L272.8 234.7L272.3 240.2L265.6 239.8zM174.3 273.1L181.0 273.5L180.3 279.1L173.6 278.7zM305.2 307.5L311.9 307.8L311.2 313.2L304.5 312.9z"/>
<path fill="#9e3f21" stroke="#9e3f21" stroke-width="1" d="M337.6 173.7L344.3 174.3L344.1 179.6L337.4 179.1zM336.1 200.6L342.8 201.1L342.4 206.5L335.7 206.0zM314.4 220.9L321.1 221.3L320.7 226.7L313.9 226.3zM169.8 306.7L176.6 307.0L175.8 312.6L169.0 312.3zM181.7 318.6L188.4 318.9L187.5 324.5L180.8 324.2z"/>
<path fill="#91c5c4" stroke="#91c5c4" stroke-width="1" d="M95.9 158.9L102.6 159.5L102.3 165.2L95.6 164.5zM230.0 170.7L236.8 171.2L236.5 176.7L229.8 176.2z"/>
<path fill="#3776b5" stroke="#3776b5" stroke-width="1" d="M109.3 160.1L116.0 160.7L115.7 166.4L109.0 165.8zM195.6 184.6L202.3 185.1L202.0 190.7L195.2 190.2z"/>
<path fill="#2957a9" stroke="#2957a9" stroke-width="1" d="M116.0 160.7L122.7 161.3L122.5 167.0L115.7 166.4zM156.0 170.0L162.7 170.5L162.4 176.2L155.7 175.6z"/>
<path fill="#152478" stroke="#152478" stroke-width="1" d="M129.4 161.9L136.1 162.5L135.9 168.2L129.2 167.6z"/>
<path fill="#152275" stroke="#152275" stroke-width="1" d="M136.1 162.5L142.9 163.1L142.6 168.8L135.9 168.2zM142.3 174.4L149.0 175.0L148.6 180.6L141.9 180.1z"/>
<path fill="#172b82" stroke="#172b82" stroke-width="1" d="M142.9 163.1L149.6 163.7L149.3 169.4L142.6 168.8z"/>
<path fill="#1f3f96" stroke="#1f3f96" stroke-width="1" d="M149.6 163.7L156.3 164.3L156.0 170.0L149.3 169.4z"/>
<path fill="#3571b3" stroke="#3571b3" stroke-width="1" d="M163.0 164.9L169.7 165.5L169.4 171.1L162.7 170.5zM146.7 208.8L153.4 209.4L153.0 215.0L146.3 214.5zM132.9 213.4L139.6 213.9L139.1 219.6L132.4 219.0z"/>
<path fill="#2650a4" stroke="#2650a4" stroke-width="1" d="M183.1 166.7L189.8 167.3L189.5 172.9L182.8 172.3z"/>
<path fill="#dbd4c5" stroke="#dbd4c5" stroke-width="1" d="M236.8 171.2L243.5 171.8L243.2 177.3L236.5 176.7z"/>
<path fill="#dcb061" stroke="#dcb061" stroke-width="1" d="M256.9 172.9L263.6 173.4L263.3 178.9L256.6 178.4zM278.0 251.5L284.7 251.9L284.1 257.4L277.4 257.0z"/>
<path fill="#e0c278" stroke="#e0c278" stroke-width="1" d="M263.6 173.4L270.3 173.9L270.0 179.4L263.3 178.9z"/>
<path fill="#ded3b4" stroke="#ded3b4" stroke-width="1" d="M277.0 174.5L283.7 175.0L283.4 180.5L276.7 179.9z"/>
<path fill="#ddd3be" stroke="#ddd3be" stroke-width="1" d="M283.7 175.0L290.4 175.5L290.1 181.0L283.4 180.5zM96.8 239.0L103.5 239.5L102.9 245.2L96.2 244.7z"/>
<path fill="#dcd4c4" stroke="#dcd4c4" stroke-width="1" d="M290.4 175.5L297.1 176.1L296.8 181.5L290.1 181.0z"/>
<path fill="#dad4ca" stroke="#dad4ca" stroke-width="1" d="M297.1 176.1L303.8 176.6L303.5 182.0L296.8 181.5z"/>
<path fill="#ddd3bb" stroke="#ddd3bb" stroke-width="1" d="M303.8 176.6L310.5 177.1L310.2 182.5L303.5 182.0zM293.2 296.1L299.9 296.4L299.2 301.9L292.5 301.6z"/>
<path fill="#dfba6c" stroke="#dfba6c" stroke-width="1" d="M310.5 177.1L317.2 177.6L316.9 183.0L310.2 182.5zM191.3 240.4L198.0 240.9L197.4 246.5L190.7 246.0zM219.2 292.6L225.9 292.9L225.2 298.5L218.5 298.1zM298.5 307.3L305.2 307.5L304.5 312.9L297.7 312.7zM242.3 321.5L249.0 321.8L248.2 327.3L241.5 327.0z"/>
<path fill="#d89f4f" stroke="#d89f4f" stroke-width="1" d="M317.2 177.6L323.9 178.1L323.6 183.5L316.9 183.0zM219.6 225.6L226.3 226.1L225.8 231.6L219.1 231.2zM251.1 249.9L257.8 250.3L257.3 255.8L250.6 255.4zM217.0 253.4L223.7 253.8L223.1 259.3L216.4 258.9zM208.5 269.6L215.2 270.0L214.6 275.5L207.8 275.2zM86.2 272.6L93.0 273.1L92.2 278.8L85.5 278.3zM274.4 284.3L281.1 284.6L280.4 290.1L273.7 289.8zM237.9 304.7L244.7 305.0L243.9 310.5L237.2 310.2z"/>
<path fill="#9d3f21" stroke="#9d3f21" stroke-width="1" d="M337.4 179.1L344.1 179.6L343.8 185.0L337.1 184.5z"/>
<path fill="#8d2f1e" stroke="#8d2f1e" stroke-width="1" d="M350.8 180.1L357.5 180.6L357.2 186.0L350.5 185.5zM340.8 227.9L347.5 228.3L347.0 233.7L340.3 233.3zM326.9 232.5L333.6 232.9L333.1 238.3L326.4 237.9zM333.6 232.9L340.3 233.3L339.9 238.7L333.1 238.3zM312.0 248.0L318.7 248.4L318.2 253.8L311.5 253.4zM311.5 253.4L318.2 253.8L317.7 259.2L311.0 258.8zM319.4 302.6L326.1 302.9L325.4 308.3L318.7 308.0z"/>
<path fill="#8bc2c4" stroke="#8bc2c4" stroke-width="1" d="M95.6 164.5L102.3 165.2L102.0 170.8L95.3 170.2z"/>
<path fill="#19308a" stroke="#19308a" stroke-width="1" d="M122.5 167.0L129.2 167.6L128.9 173.2L122.1 172.7z"/>
<path fill="#152477" stroke="#152477" stroke-width="1" d="M129.2 167.6L135.9 168.2L135.6 173.8L128.9 173.2z"/>
<path fill="#142072" stroke="#142072" stroke-width="1" d="M135.9 168.2L142.6 168.8L142.3 174.4L135.6 173.8z"/>
<path fill="#16267b" stroke="#16267b" stroke-width="1" d="M142.6 168.8L149.3 169.4L149.0 175.0L142.3 174.4zM128.9 173.2L135.6 173.8L135.2 179.5L128.5 178.9z"/>
<path fill="#19328c" stroke="#19328c" stroke-width="1" d="M149.3 169.4L156.0 170.0L155.7 175.6L149.0 175.0zM134.5 190.8L141.2 191.4L140.9 197.0L134.2 196.4z"/>
<path fill="#2751a4" stroke="#2751a4" stroke-width="1" d="M182.8 172.3L189.5 172.9L189.2 178.4L182.5 177.9zM169.1 176.7L175.8 177.3L175.5 182.9L168.8 182.4zM127.0 201.5L133.8 202.1L133.3 207.7L126.6 207.2z"/>
<path fill="#2650a3" stroke="#2650a3" stroke-width="1" d="M189.5 172.9L196.2 173.4L195.9 179.0L189.2 178.4zM120.3 201.0L127.0 201.5L126.6 207.2L119.9 206.6zM147.2 203.2L153.9 203.7L153.4 209.4L146.7 208.8z"/>
<path fill="#4b96bc" stroke="#4b96bc" stroke-width="1" d="M202.9 174.0L209.6 174.5L209.3 180.1L202.6 179.6zM125.2 224.2L131.9 224.7L131.4 230.3L124.7 229.8z"/>
<path fill="#93c5c5" stroke="#93c5c5" stroke-width="1" d="M223.0 175.7L229.8 176.2L229.4 181.7L222.7 181.2z"/>
<path fill="#e2d09c" stroke="#e2d09c" stroke-width="1" d="M236.5 176.7L243.2 177.3L242.9 182.8L236.2 182.3zM151.0 237.5L157.7 238.0L157.2 243.6L150.5 243.1zM221.3 275.9L228.0 276.3L227.3 281.9L220.6 281.5zM268.4 328.0L275.2 328.3L274.4 333.7L267.6 333.5z"/>
<path fill="#b7cdc9" stroke="#b7cdc9" stroke-width="1" d="M270.0 179.4L276.7 179.9L276.4 185.4L269.7 184.9zM296.5 186.9L303.2 187.4L302.9 192.9L296.2 192.4zM144.8 231.4L151.6 231.9L151.0 237.5L144.3 237.0z"/>
<path fill="#d9d4cd" stroke="#d9d4cd" stroke-width="1" d="M303.5 182.0L310.2 182.5L309.9 187.9L303.2 187.4z"/>
<path fill="#ddb364" stroke="#ddb364" stroke-width="1" d="M310.2 182.5L316.9 183.0L316.6 188.4L309.9 187.9zM206.7 219.1L213.4 219.6L212.9 225.1L206.2 224.6z"/>
<path fill="#b55d29" stroke="#b55d29" stroke-width="1" d="M330.4 184.0L337.1 184.5L336.7 189.9L330.0 189.4zM191.6 296.6L198.3 297.0L197.6 302.6L190.8 302.2z"/>
<path fill="#a04222" stroke="#a04222" stroke-width="1" d="M337.1 184.5L343.8 185.0L343.4 190.4L336.7 189.9zM336.4 195.3L343.1 195.7L342.8 201.1L336.1 200.6zM307.2 225.9L313.9 226.3L313.5 231.7L306.8 231.3zM170.6 301.1L177.4 301.5L176.6 307.0L169.8 306.7zM163.1 306.3L169.8 306.7L169.0 312.3L162.3 311.9zM176.6 307.0L183.3 307.4L182.5 313.0L175.8 312.6zM162.3 311.9L169.0 312.3L168.2 317.9L161.4 317.5zM161.4 317.5L168.2 317.9L167.3 323.5L160.6 323.1zM160.6 323.1L167.3 323.5L166.4 329.1L159.7 328.7zM159.7 328.7L166.4 329.1L165.5 334.7L158.8 334.3z"/>
<path fill="#8b2d1d" stroke="#8b2d1d" stroke-width="1" d="M350.5 185.5L357.2 186.0L356.9 191.3L350.2 190.8zM326.0 243.3L332.7 243.7L332.2 249.1L325.4 248.7zM332.7 243.7L339.4 244.1L338.9 249.4L332.2 249.1zM339.4 244.1L346.1 244.4L345.6 249.8L338.9 249.4zM346.1 244.4L352.8 244.8L352.3 250.1L345.6 249.8zM321.4 286.5L328.1 286.7L327.5 292.1L320.7 291.8z"/>
<path fill="#4691bb" stroke="#4691bb" stroke-width="1" d="M108.7 171.4L115.4 172.1L115.1 177.7L108.4 177.1z"/>
<path fill="#1a358e" stroke="#1a358e" stroke-width="1" d="M122.1 172.7L128.9 173.2L128.5 178.9L121.8 178.3z"/>
<path fill="#141f71" stroke="#141f71" stroke-width="1" d="M135.6 173.8L142.3 174.4L141.9 180.1L135.2 179.5zM283.5 317.6L290.3 317.9L289.5 323.3L282.7 323.1z"/>
<path fill="#182d84" stroke="#182d84" stroke-width="1" d="M149.0 175.0L155.7 175.6L155.4 181.2L148.6 180.6z"/>
<path fill="#254ca0" stroke="#254ca0" stroke-width="1" d="M155.7 175.6L162.4 176.2L162.1 181.8L155.4 181.2z"/>
<path fill="#2855a7" stroke="#2855a7" stroke-width="1" d="M175.8 177.3L182.5 177.9L182.2 183.5L175.5 182.9zM113.6 200.4L120.3 201.0L119.9 206.6L113.2 206.1z"/>
<path fill="#2b59ab" stroke="#2b59ab" stroke-width="1" d="M182.5 177.9L189.2 178.4L188.9 184.0L182.2 183.5z"/>
<path fill="#2b5cac" stroke="#2b5cac" stroke-width="1" d="M189.2 178.4L195.9 179.0L195.6 184.6L188.9 184.0z"/>
<path fill="#ced2cc" stroke="#ced2cc" stroke-width="1" d="M222.7 181.2L229.4 181.7L229.1 187.3L222.4 186.8zM97.9 227.6L104.6 228.2L104.1 233.9L97.4 233.3z"/>
<path fill="#e0d2ab" stroke="#e0d2ab" stroke-width="1" d="M229.4 181.7L236.2 182.3L235.8 187.8L229.1 187.3zM186.1 223.2L192.8 223.7L192.3 229.3L185.6 228.8zM204.2 246.9L210.9 247.4L210.3 252.9L203.6 252.5z"/>
<path fill="#deb768" stroke="#deb768" stroke-width="1" d="M236.2 182.3L242.9 182.8L242.5 188.3L235.8 187.8zM257.3 255.8L264.0 256.2L263.4 261.7L256.7 261.3zM242.7 266.1L249.4 266.4L248.8 271.9L242.1 271.6zM231.9 298.8L238.7 299.1L237.9 304.7L231.2 304.3z"/>
<path fill="#d59a4b" stroke="#d59a4b" stroke-width="1" d="M242.9 182.8L249.6 183.3L249.2 188.9L242.5 188.3z"/>
<path fill="#d08c40" stroke="#d08c40" stroke-width="1" d="M249.6 183.3L256.3 183.9L255.9 189.4L249.2 188.9zM176.8 250.7L183.5 251.1L182.9 256.7L176.2 256.3zM202.4 263.6L209.1 264.0L208.5 269.6L201.8 269.2zM126.6 275.5L133.3 276.0L132.6 281.6L125.8 281.2zM91.5 284.5L98.2 284.9L97.4 290.6L90.7 290.1zM258.8 300.1L265.6 300.4L264.8 305.9L258.1 305.6zM217.0 309.2L223.7 309.5L222.9 315.1L216.2 314.7zM220.4 331.7L227.1 331.9L226.2 337.5L219.5 337.2z"/>
<path fill="#e1ca8e" stroke="#e1ca8e" stroke-width="1" d="M263.0 184.4L269.7 184.9L269.4 190.4L262.6 189.9z"/>
<path fill="#abcac7" stroke="#abcac7" stroke-width="1" d="M289.8 186.4L296.5 186.9L296.2 192.4L289.5 191.9zM165.0 232.9L171.7 233.4L171.2 239.0L164.4 238.5z"/>
<path fill="#dbaa5b" stroke="#dbaa5b" stroke-width="1" d="M309.9 187.9L316.6 188.4L316.3 193.8L309.6 193.4zM135.3 259.1L142.0 259.5L141.3 265.2L134.6 264.7zM238.7 299.1L245.4 299.5L244.7 305.0L237.9 304.7zM228.8 320.9L235.6 321.2L234.7 326.7L228.0 326.4z"/>
<path fill="#d79c4d" stroke="#d79c4d" stroke-width="1" d="M316.6 188.4L323.3 188.9L323.0 194.3L316.3 193.8zM230.4 254.2L237.1 254.6L236.6 260.1L229.9 259.7z"/>
<path fill="#b75f2a" stroke="#b75f2a" stroke-width="1" d="M330.0 189.4L336.7 189.9L336.4 195.3L329.7 194.8zM285.7 241.0L292.4 241.4L291.9 246.8L285.2 246.5zM181.0 273.5L187.7 273.9L187.0 279.5L180.3 279.1zM197.6 302.6L204.3 302.9L203.5 308.5L196.8 308.1zM116.0 303.3L122.7 303.8L121.9 309.4L115.1 309.0zM99.9 319.4L106.6 319.9L105.7 325.5L99.0 325.1z"/>
<path fill="#68b0bf" stroke="#68b0bf" stroke-width="1" d="M101.7 176.5L108.4 177.1L108.1 182.8L101.4 182.2z"/>
<path fill="#3777b5" stroke="#3777b5" stroke-width="1" d="M115.1 177.7L121.8 178.3L121.5 184.0L114.8 183.4zM288.7 328.8L295.4 329.0L294.6 334.4L287.8 334.2z"/>
<path fill="#204298" stroke="#204298" stroke-width="1" d="M121.8 178.3L128.5 178.9L128.2 184.6L121.5 184.0z"/>
<path fill="#152377" stroke="#152377" stroke-width="1" d="M135.2 179.5L141.9 180.1L141.6 185.7L134.9 185.1zM148.3 186.3L155.0 186.9L154.7 192.5L147.9 191.9z"/>
<path fill="#152173" stroke="#152173" stroke-width="1" d="M141.9 180.1L148.6 180.6L148.3 186.3L141.6 185.7z"/>
<path fill="#16287d" stroke="#16287d" stroke-width="1" d="M148.6 180.6L155.4 181.2L155.0 186.9L148.3 186.3zM141.2 191.4L147.9 191.9L147.6 197.6L140.9 197.0z"/>
<path fill="#1e3c94" stroke="#1e3c94" stroke-width="1" d="M155.4 181.2L162.1 181.8L161.7 187.4L155.0 186.9zM285.0 306.7L291.8 307.0L291.0 312.4L284.3 312.2z"/>
<path fill="#22479c" stroke="#22479c" stroke-width="1" d="M162.1 181.8L168.8 182.4L168.4 188.0L161.7 187.4zM278.3 306.5L285.0 306.7L284.3 312.2L277.6 311.9z"/>
<path fill="#3f8bba" stroke="#3f8bba" stroke-width="1" d="M202.3 185.1L209.0 185.7L208.7 191.2L202.0 190.7zM93.9 193.0L100.6 193.6L100.2 199.2L93.5 198.7z"/>
<path fill="#dcb162" stroke="#dcb162" stroke-width="1" d="M229.1 187.3L235.8 187.8L235.5 193.3L228.8 192.8zM206.2 224.6L212.9 225.1L212.4 230.7L205.7 230.2zM114.5 263.3L121.2 263.7L120.5 269.4L113.8 268.9zM233.9 332.2L240.6 332.5L239.8 338.0L233.0 337.7z"/>
<path fill="#d08b3f" stroke="#d08b3f" stroke-width="1" d="M255.9 189.4L262.6 189.9L262.3 195.4L255.6 194.9zM261.9 200.9L268.6 201.4L268.3 206.8L261.6 206.4z"/>
<path fill="#e1c786" stroke="#e1c786" stroke-width="1" d="M262.6 189.9L269.4 190.4L269.0 195.9L262.3 195.4zM222.1 192.3L228.8 192.8L228.4 198.4L221.7 197.9zM193.2 218.1L199.9 218.6L199.5 224.2L192.8 223.7zM225.9 292.9L232.7 293.3L231.9 298.8L225.2 298.5z"/>
<path fill="#ccd1cb" stroke="#ccd1cb" stroke-width="1" d="M276.1 190.9L282.8 191.4L282.4 196.9L275.7 196.4zM204.7 241.3L211.4 241.8L210.9 247.4L204.2 246.9z"/>
<path fill="#dfd3ae" stroke="#dfd3ae" stroke-width="1" d="M282.8 191.4L289.5 191.9L289.1 197.4L282.4 196.9z"/>
<path fill="#e2d2a2" stroke="#e2d2a2" stroke-width="1" d="M289.5 191.9L296.2 192.4L295.8 197.8L289.1 197.4z"/>
<path fill="#e2cf99" stroke="#e2cf99" stroke-width="1" d="M296.2 192.4L302.9 192.9L302.5 198.3L295.8 197.8zM95.6 250.4L102.3 250.9L101.7 256.6L95.0 256.1z"/>
<path fill="#b35928" stroke="#b35928" stroke-width="1" d="M329.7 194.8L336.4 195.3L336.1 200.6L329.4 200.2zM145.3 288.2L152.0 288.6L151.2 294.2L144.5 293.8zM105.7 325.5L112.5 326.0L111.5 331.6L104.8 331.2z"/>
<path fill="#1d3a92" stroke="#1d3a92" stroke-width="1" d="M128.2 184.6L134.9 185.1L134.5 190.8L127.8 190.2z"/>
<path fill="#172b81" stroke="#172b81" stroke-width="1" d="M134.9 185.1L141.6 185.7L141.2 191.4L134.5 190.8z"/>
<path fill="#152174" stroke="#152174" stroke-width="1" d="M141.6 185.7L148.3 186.3L147.9 191.9L141.2 191.4zM284.3 312.2L291.0 312.4L290.3 317.9L283.5 317.6z"/>
<path fill="#183089" stroke="#183089" stroke-width="1" d="M155.0 186.9L161.7 187.4L161.4 193.0L154.7 192.5z"/>
<path fill="#1d3b93" stroke="#1d3b93" stroke-width="1" d="M161.7 187.4L168.4 188.0L168.1 193.6L161.4 193.0z"/>
<path fill="#21459b" stroke="#21459b" stroke-width="1" d="M168.4 188.0L175.1 188.5L174.8 194.1L168.1 193.6z"/>
<path fill="#2f64b0" stroke="#2f64b0" stroke-width="1" d="M175.1 188.5L181.8 189.1L181.5 194.7L174.8 194.1z"/>
<path fill="#3879b5" stroke="#3879b5" stroke-width="1" d="M181.8 189.1L188.5 189.6L188.2 195.2L181.5 194.7z"/>
<path fill="#cad1cb" stroke="#cad1cb" stroke-width="1" d="M215.4 191.8L222.1 192.3L221.7 197.9L215.0 197.3z"/>
<path fill="#c67834" stroke="#c67834" stroke-width="1" d="M248.9 194.4L255.6 194.9L255.2 200.4L248.5 199.9z"/>
<path fill="#e1c37c" stroke="#e1c37c" stroke-width="1" d="M262.3 195.4L269.0 195.9L268.6 201.4L261.9 200.9z"/>
<path fill="#e0c076" stroke="#e0c076" stroke-width="1" d="M282.4 196.9L289.1 197.4L288.8 202.8L282.1 202.3zM212.4 230.7L219.1 231.2L218.6 236.7L211.9 236.2z"/>
<path fill="#deb86a" stroke="#deb86a" stroke-width="1" d="M289.1 197.4L295.8 197.8L295.5 203.3L288.8 202.8zM295.8 197.8L302.5 198.3L302.2 203.7L295.5 203.3zM177.3 245.1L184.0 245.5L183.5 251.1L176.8 250.7zM229.3 265.3L236.0 265.7L235.4 271.2L228.6 270.8zM239.4 293.6L246.1 294.0L245.4 299.5L238.7 299.1z"/>
<path fill="#23489d" stroke="#23489d" stroke-width="1" d="M127.8 190.2L134.5 190.8L134.2 196.4L127.4 195.9z"/>
<path fill="#17287e" stroke="#17287e" stroke-width="1" d="M147.9 191.9L154.7 192.5L154.3 198.1L147.6 197.6z"/>
<path fill="#3572b4" stroke="#3572b4" stroke-width="1" d="M174.8 194.1L181.5 194.7L181.1 200.3L174.4 199.7z"/>
<path fill="#d5d3cc" stroke="#d5d3cc" stroke-width="1" d="M215.0 197.3L221.7 197.9L221.3 203.4L214.6 202.9z"/>
<path fill="#c27031" stroke="#c27031" stroke-width="1" d="M248.5 199.9L255.2 200.4L254.9 205.9L248.1 205.4zM281.7 207.8L288.4 208.3L288.0 213.7L281.3 213.3z"/>
<path fill="#d18e42" stroke="#d18e42" stroke-width="1" d="M295.5 203.3L302.2 203.7L301.8 209.2L295.1 208.7zM228.0 203.9L234.7 204.4L234.3 209.9L227.6 209.4zM201.8 269.2L208.5 269.6L207.8 275.2L201.1 274.7zM78.0 283.5L84.8 284.0L84.0 289.6L77.2 289.2zM256.6 316.6L263.3 316.8L262.5 322.3L255.8 322.0z"/>
<path fill="#bb652c" stroke="#bb652c" stroke-width="1" d="M315.6 204.7L322.3 205.1L321.9 210.5L315.2 210.1zM301.8 209.2L308.5 209.6L308.1 215.1L301.4 214.6zM289.7 268.6L296.4 269.0L295.8 274.4L289.1 274.1zM174.9 267.5L181.6 267.9L181.0 273.5L174.3 273.1zM109.3 302.9L116.0 303.3L115.1 309.0L108.4 308.6zM203.5 308.5L210.2 308.9L209.4 314.4L202.7 314.1zM101.7 308.1L108.4 308.6L107.5 314.2L100.8 313.8z"/>
<path fill="#af5427" stroke="#af5427" stroke-width="1" d="M322.3 205.1L329.0 205.6L328.6 211.0L321.9 210.5zM272.8 234.7L279.5 235.1L279.0 240.6L272.3 240.2zM196.8 308.1L203.5 308.5L202.7 314.1L196.0 313.7z"/>
<path fill="#92321f" stroke="#92321f" stroke-width="1" d="M342.4 206.5L349.1 206.9L348.7 212.3L342.0 211.8zM308.6 280.5L315.3 280.8L314.7 286.2L308.0 285.9z"/>
<path fill="#8b2d1e" stroke="#8b2d1e" stroke-width="1" d="M349.1 206.9L355.8 207.3L355.4 212.7L348.7 212.3zM318.7 248.4L325.4 248.7L324.9 254.1L318.2 253.8zM318.2 253.8L324.9 254.1L324.4 259.5L317.7 259.2zM317.7 259.2L324.4 259.5L323.8 264.9L317.1 264.6zM317.1 264.6L323.8 264.9L323.2 270.3L316.5 270.0zM320.7 291.8L327.5 292.1L326.8 297.5L320.1 297.2z"/>
<path fill="#244b9f" stroke="#244b9f" stroke-width="1" d="M127.4 195.9L134.2 196.4L133.8 202.1L127.0 201.5z"/>
<path fill="#204197" stroke="#204197" stroke-width="1" d="M134.2 196.4L140.9 197.0L140.5 202.6L133.8 202.1z"/>
<path fill="#22469b" stroke="#22469b" stroke-width="1" d="M154.3 198.1L161.0 198.7L160.6 204.3L153.9 203.7z"/>
<path fill="#2a59ab" stroke="#2a59ab" stroke-width="1" d="M161.0 198.7L167.7 199.2L167.3 204.8L160.6 204.3z"/>
<path fill="#dcae5f" stroke="#dcae5f" stroke-width="1" d="M221.3 203.4L228.0 203.9L227.6 209.4L220.9 208.9zM256.1 266.8L262.8 267.2L262.2 272.7L255.5 272.3zM262.8 267.2L269.5 267.6L268.9 273.0L262.2 272.7zM121.2 263.7L127.9 264.2L127.2 269.9L120.5 269.4zM93.7 267.4L100.4 267.9L99.7 273.6L93.0 273.1zM236.4 315.7L243.1 316.0L242.3 321.5L235.6 321.2z"/>
<path fill="#bb662c" stroke="#bb662c" stroke-width="1" d="M254.9 205.9L261.6 206.4L261.2 211.9L254.5 211.4z"/>
<path fill="#c26f30" stroke="#c26f30" stroke-width="1" d="M261.6 206.4L268.3 206.8L267.9 212.3L261.2 211.9zM85.5 324.2L92.2 324.7L91.2 330.3L84.5 329.9z"/>
<path fill="#c47432" stroke="#c47432" stroke-width="1" d="M268.3 206.8L275.0 207.3L274.6 212.8L267.9 212.3zM275.0 207.3L281.7 207.8L281.3 213.3L274.6 212.8zM265.6 239.8L272.3 240.2L271.8 245.7L265.1 245.2zM182.3 262.3L189.0 262.8L188.3 268.3L181.6 267.9zM288.4 279.5L295.2 279.8L294.5 285.3L287.8 285.0zM193.0 285.5L199.8 285.9L199.1 291.4L192.3 291.1zM125.1 286.8L131.8 287.3L131.1 292.9L124.3 292.5zM88.2 307.2L94.9 307.6L94.1 313.3L87.3 312.9zM73.8 311.9L80.6 312.4L79.7 318.1L72.9 317.6zM80.6 312.4L87.3 312.9L86.4 318.5L79.7 318.1z"/>
<path fill="#b35b29" stroke="#b35b29" stroke-width="1" d="M308.5 209.6L315.2 210.1L314.8 215.5L308.1 215.1z"/>
<path fill="#a04122" stroke="#a04122" stroke-width="1" d="M321.9 210.5L328.6 211.0L328.2 216.4L321.5 215.9zM187.5 324.5L194.3 324.8L193.4 330.4L186.7 330.1z"/>
<path fill="#983920" stroke="#983920" stroke-width="1" d="M328.6 211.0L335.3 211.4L334.9 216.8L328.2 216.4zM299.6 236.4L306.3 236.8L305.8 242.2L299.1 241.8z"/>
<path fill="#dad4cd" stroke="#dad4cd" stroke-width="1" d="M207.5 207.9L214.2 208.4L213.8 214.0L207.1 213.5zM110.2 240.1L116.9 240.6L116.4 246.3L109.6 245.7z"/>
<path fill="#cf8a3e" stroke="#cf8a3e" stroke-width="1" d="M227.6 209.4L234.3 209.9L233.9 215.5L227.2 215.0zM200.5 280.3L207.2 280.7L206.5 286.3L199.8 285.9z"/>
<path fill="#c67734" stroke="#c67734" stroke-width="1" d="M241.0 210.4L247.7 210.9L247.3 216.4L240.6 216.0zM154.8 266.1L161.5 266.6L160.8 272.2L154.1 271.7zM89.1 301.5L95.8 302.0L94.9 307.6L88.2 307.2zM210.2 308.9L217.0 309.2L216.2 314.7L209.4 314.4zM74.7 306.2L81.5 306.7L80.6 312.4L73.8 311.9zM81.5 306.7L88.2 307.2L87.3 312.9L80.6 312.4z"/>
<path fill="#a24423" stroke="#a24423" stroke-width="1" d="M314.8 215.5L321.5 215.9L321.1 221.3L314.4 220.9zM298.1 252.7L304.8 253.0L304.3 258.5L297.5 258.1zM148.8 311.1L155.6 311.5L154.7 317.1L148.0 316.7zM155.6 311.5L162.3 311.9L161.4 317.5L154.7 317.1zM148.0 316.7L154.7 317.1L153.8 322.7L147.1 322.3zM154.7 317.1L161.4 317.5L160.6 323.1L153.8 322.7zM133.6 321.5L140.3 321.9L139.4 327.6L132.7 327.2zM140.3 321.9L147.1 322.3L146.2 328.0L139.4 327.6zM147.1 322.3L153.8 322.7L152.9 328.3L146.2 328.0zM153.8 322.7L160.6 323.1L159.7 328.7L152.9 328.3zM139.4 327.6L146.2 328.0L145.2 333.6L138.5 333.2zM146.2 328.0L152.9 328.3L152.0 333.9L145.2 333.6zM152.9 328.3L159.7 328.7L158.8 334.3L152.0 333.9z"/>
<path fill="#993920" stroke="#993920" stroke-width="1" d="M321.5 215.9L328.2 216.4L327.8 221.8L321.1 221.3zM306.6 296.7L313.3 297.0L312.7 302.4L305.9 302.1z"/>
<path fill="#92331f" stroke="#92331f" stroke-width="1" d="M334.9 216.8L341.6 217.2L341.2 222.6L334.5 222.2zM320.7 226.7L327.4 227.1L326.9 232.5L320.2 232.1z"/>
<path fill="#90311e" stroke="#90311e" stroke-width="1" d="M341.6 217.2L348.3 217.6L347.9 223.0L341.2 222.6zM327.8 221.8L334.5 222.2L334.1 227.6L327.4 227.1zM334.5 222.2L341.2 222.6L340.8 227.9L334.1 227.6zM320.2 232.1L326.9 232.5L326.4 237.9L319.7 237.5zM317.2 318.8L323.9 319.0L323.2 324.4L316.4 324.2z"/>
<path fill="#8d2e1e" stroke="#8d2e1e" stroke-width="1" d="M348.3 217.6L355.0 218.0L354.6 223.4L347.9 223.0zM347.9 223.0L354.6 223.4L354.2 228.7L347.5 228.3zM340.3 233.3L347.0 233.7L346.6 239.1L339.9 238.7zM319.2 242.9L326.0 243.3L325.4 248.7L318.7 248.4z"/>
<path fill="#3a7fb7" stroke="#3a7fb7" stroke-width="1" d="M93.1 204.3L99.8 204.9L99.4 210.6L92.7 210.0z"/>
<path fill="#2e61af" stroke="#2e61af" stroke-width="1" d="M119.9 206.6L126.6 207.2L126.2 212.8L119.5 212.3z"/>
<path fill="#4591bb" stroke="#4591bb" stroke-width="1" d="M166.9 210.4L173.6 211.0L173.1 216.6L166.4 216.0zM92.7 210.0L99.4 210.6L98.9 216.3L92.2 215.7z"/>
<path fill="#bbcec9" stroke="#bbcec9" stroke-width="1" d="M187.0 212.0L193.7 212.5L193.2 218.1L186.5 217.6zM151.6 231.9L158.3 232.4L157.7 238.0L151.0 237.5z"/>
<path fill="#e1d2a4" stroke="#e1d2a4" stroke-width="1" d="M193.7 212.5L200.4 213.0L199.9 218.6L193.2 218.1zM234.7 276.7L241.4 277.1L240.8 282.6L234.1 282.2z"/>
<path fill="#e1c889" stroke="#e1c889" stroke-width="1" d="M200.4 213.0L207.1 213.5L206.7 219.1L199.9 218.6zM242.1 271.6L248.8 271.9L248.1 277.4L241.4 277.1z"/>
<path fill="#daa95a" stroke="#daa95a" stroke-width="1" d="M213.8 214.0L220.5 214.5L220.1 220.1L213.4 219.6zM250.6 255.4L257.3 255.8L256.7 261.3L250.0 260.9zM269.5 267.6L276.3 267.9L275.6 273.4L268.9 273.0z"/>
<path fill="#c57633" stroke="#c57633" stroke-width="1" d="M240.6 216.0L247.3 216.4L246.9 221.9L240.2 221.5zM132.6 281.6L139.3 282.1L138.5 287.7L131.8 287.3zM110.9 291.6L117.6 292.0L116.8 297.7L110.1 297.2zM96.6 296.3L103.4 296.8L102.5 302.4L95.8 302.0zM255.0 327.5L261.7 327.8L260.9 333.3L254.1 333.0z"/>
<path fill="#bc662c" stroke="#bc662c" stroke-width="1" d="M247.3 216.4L254.0 216.9L253.6 222.4L246.9 221.9zM291.4 252.3L298.1 252.7L297.5 258.1L290.8 257.7zM289.1 274.1L295.8 274.4L295.2 279.8L288.4 279.5z"/>
<path fill="#aa4d25" stroke="#aa4d25" stroke-width="1" d="M301.0 220.1L307.7 220.5L307.2 225.9L300.5 225.5zM292.4 241.4L299.1 241.8L298.6 247.2L291.9 246.8zM166.9 278.2L173.6 278.7L172.9 284.3L166.2 283.8z"/>
<path fill="#a44723" stroke="#a44723" stroke-width="1" d="M307.7 220.5L314.4 220.9L313.9 226.3L307.2 225.9z"/>
<path fill="#336eb3" stroke="#336eb3" stroke-width="1" d="M119.5 212.3L126.2 212.8L125.7 218.5L119.0 218.0z"/>
<path fill="#daa959" stroke="#daa959" stroke-width="1" d="M213.4 219.6L220.1 220.1L219.6 225.6L212.9 225.1zM216.4 258.9L223.1 259.3L222.5 264.9L215.8 264.5z"/>
<path fill="#d79d4d" stroke="#d79d4d" stroke-width="1" d="M220.1 220.1L226.8 220.5L226.3 226.1L219.6 225.6zM209.7 258.5L216.4 258.9L215.8 264.5L209.1 264.0zM268.9 273.0L275.6 273.4L275.0 278.9L268.3 278.5z"/>
<path fill="#bb642c" stroke="#bb642c" stroke-width="1" d="M246.9 221.9L253.6 222.4L253.1 227.9L246.4 227.5z"/>
<path fill="#aa4e25" stroke="#aa4e25" stroke-width="1" d="M287.1 224.6L293.8 225.1L293.4 230.5L286.7 230.1zM196.0 313.7L202.7 314.1L201.9 319.6L195.1 319.3zM121.0 315.1L127.8 315.5L126.9 321.1L120.1 320.7zM302.2 329.2L308.9 329.4L308.1 334.8L301.3 334.6z"/>
<path fill="#a64924" stroke="#a64924" stroke-width="1" d="M300.5 225.5L307.2 225.9L306.8 231.3L300.1 230.9zM295.8 274.4L302.5 274.7L301.9 280.2L295.2 279.8zM301.2 285.6L308.0 285.9L307.3 291.3L300.6 291.0zM184.1 301.8L190.8 302.2L190.0 307.8L183.3 307.4zM135.4 310.3L142.1 310.7L141.2 316.3L134.5 315.9z"/>
<path fill="#8e2f1e" stroke="#8e2f1e" stroke-width="1" d="M327.4 227.1L334.1 227.6L333.6 232.9L326.9 232.5zM334.1 227.6L340.8 227.9L340.3 233.3L333.6 232.9zM319.7 237.5L326.4 237.9L326.0 243.3L319.2 242.9zM311.0 258.8L317.7 259.2L317.1 264.6L310.4 264.2zM310.4 264.2L317.1 264.6L316.5 270.0L309.8 269.6zM309.8 269.6L316.5 270.0L315.9 275.4L309.2 275.1zM314.0 291.6L320.7 291.8L320.1 297.2L313.3 297.0zM315.6 329.6L322.4 329.8L321.6 335.2L314.8 335.0zM314.8 335.0L321.6 335.2L320.8 340.5L314.0 340.4z"/>
<path fill="#3c82b8" stroke="#3c82b8" stroke-width="1" d="M132.4 219.0L139.1 219.6L138.6 225.2L131.9 224.7z"/>
<path fill="#ddb264" stroke="#ddb264" stroke-width="1" d="M199.5 224.2L206.2 224.6L205.7 230.2L199.0 229.7zM107.8 262.8L114.5 263.3L113.8 268.9L107.1 268.4z"/>
<path fill="#af5527" stroke="#af5527" stroke-width="1" d="M253.1 227.9L259.8 228.3L259.4 233.8L252.7 233.4zM114.3 314.6L121.0 315.1L120.1 320.7L113.4 320.3zM201.9 319.6L208.6 319.9L207.8 325.5L201.0 325.2z"/>
<path fill="#ad5126" stroke="#ad5126" stroke-width="1" d="M273.3 229.2L280.0 229.7L279.5 235.1L272.8 234.7z"/>
<path fill="#ddd3ba" stroke="#ddd3ba" stroke-width="1" d="M85.0 220.8L91.7 221.4L91.2 227.1L84.5 226.5zM80.9 260.7L87.6 261.2L86.9 266.9L80.2 266.4z"/>
<path fill="#a4c9c7" stroke="#a4c9c7" stroke-width="1" d="M178.9 228.3L185.6 228.8L185.1 234.4L178.4 233.9zM287.1 290.4L293.9 290.7L293.2 296.1L286.5 295.9z"/>
<path fill="#e1ca8d" stroke="#e1ca8d" stroke-width="1" d="M199.0 229.7L205.7 230.2L205.2 235.8L198.5 235.3zM235.4 271.2L242.1 271.6L241.4 277.1L234.7 276.7z"/>
<path fill="#dfd3af" stroke="#dfd3af" stroke-width="1" d="M205.7 230.2L212.4 230.7L211.9 236.2L205.2 235.8zM157.7 238.0L164.4 238.5L163.9 244.1L157.2 243.6zM123.6 241.1L130.4 241.6L129.8 247.3L123.1 246.8z"/>
<path fill="#a54823" stroke="#a54823" stroke-width="1" d="M286.2 235.5L292.9 236.0L292.4 241.4L285.7 241.0zM297.5 258.1L304.3 258.5L303.7 263.9L297.0 263.5zM297.0 263.5L303.7 263.9L303.1 269.3L296.4 269.0zM166.2 283.8L172.9 284.3L172.2 289.9L165.4 289.4zM172.9 284.3L179.6 284.7L178.9 290.3L172.2 289.9zM150.5 299.8L157.2 300.3L156.4 305.9L149.6 305.5zM126.9 321.1L133.6 321.5L132.7 327.2L125.9 326.8z"/>
<path fill="#91321e" stroke="#91321e" stroke-width="1" d="M313.0 237.2L319.7 237.5L319.2 242.9L312.5 242.6z"/>
<path fill="#e0d3ac" stroke="#e0d3ac" stroke-width="1" d="M84.5 226.5L91.2 227.1L90.7 232.8L83.9 232.2z"/>
<path fill="#87c1c3" stroke="#87c1c3" stroke-width="1" d="M104.6 228.2L111.3 228.7L110.8 234.4L104.1 233.9z"/>
<path fill="#dfd3b2" stroke="#dfd3b2" stroke-width="1" d="M198.5 235.3L205.2 235.8L204.7 241.3L198.0 240.9z"/>
<path fill="#d9a253" stroke="#d9a253" stroke-width="1" d="M218.6 236.7L225.3 237.2L224.8 242.7L218.1 242.2z"/>
<path fill="#c27131" stroke="#c27131" stroke-width="1" d="M238.8 238.0L245.5 238.5L244.9 244.0L238.2 243.6zM95.8 302.0L102.5 302.4L101.7 308.1L94.9 307.6zM72.9 317.6L79.7 318.1L78.7 323.8L72.0 323.3zM79.7 318.1L86.4 318.5L85.5 324.2L78.7 323.8z"/>
<path fill="#c16e30" stroke="#c16e30" stroke-width="1" d="M279.0 240.6L285.7 241.0L285.2 246.5L278.5 246.1z"/>
<path fill="#8f301e" stroke="#8f301e" stroke-width="1" d="M312.5 242.6L319.2 242.9L318.7 248.4L312.0 248.0zM309.2 275.1L315.9 275.4L315.3 280.8L308.6 280.5zM313.3 297.0L320.1 297.2L319.4 302.6L312.7 302.4zM318.7 308.0L325.4 308.3L324.7 313.6L317.9 313.4zM317.9 313.4L324.7 313.6L323.9 319.0L317.2 318.8zM316.4 324.2L323.2 324.4L322.4 329.8L315.6 329.6z"/>
<path fill="#b6cdc9" stroke="#b6cdc9" stroke-width="1" d="M83.9 232.2L90.7 232.8L90.1 238.5L83.4 237.9z"/>
<path fill="#c3cfca" stroke="#c3cfca" stroke-width="1" d="M90.7 232.8L97.4 233.3L96.8 239.0L90.1 238.5z"/>
<path fill="#d8d3cd" stroke="#d8d3cd" stroke-width="1" d="M97.4 233.3L104.1 233.9L103.5 239.5L96.8 239.0z"/>
<path fill="#c0cfca" stroke="#c0cfca" stroke-width="1" d="M117.5 234.9L124.2 235.5L123.6 241.1L116.9 240.6zM274.4 333.7L281.1 334.0L280.2 339.4L273.5 339.2z"/>
<path fill="#dcd4c3" stroke="#dcd4c3" stroke-width="1" d="M124.2 235.5L130.9 236.0L130.4 241.6L123.6 241.1zM184.6 239.9L191.3 240.4L190.7 246.0L184.0 245.5z"/>
<path fill="#e2ce96" stroke="#e2ce96" stroke-width="1" d="M130.9 236.0L137.6 236.5L137.1 242.1L130.4 241.6z"/>
<path fill="#e1c887" stroke="#e1c887" stroke-width="1" d="M137.6 236.5L144.3 237.0L143.8 242.6L137.1 242.1zM129.8 247.3L136.5 247.8L135.9 253.4L129.2 252.9zM102.3 250.9L109.0 251.4L108.4 257.1L101.7 256.6z"/>
<path fill="#e2cd95" stroke="#e2cd95" stroke-width="1" d="M198.0 240.9L204.7 241.3L204.2 246.9L197.4 246.5z"/>
<path fill="#d29144" stroke="#d29144" stroke-width="1" d="M224.8 242.7L231.5 243.1L231.0 248.7L224.3 248.2zM190.2 251.6L196.9 252.0L196.3 257.6L189.6 257.2zM260.9 283.6L267.6 284.0L267.0 289.5L260.3 289.1zM267.6 333.5L274.4 333.7L273.5 339.2L266.8 339.0z"/>
<path fill="#d59749" stroke="#d59749" stroke-width="1" d="M278.5 246.1L285.2 246.5L284.7 251.9L278.0 251.5zM206.5 286.3L213.2 286.6L212.5 292.2L205.8 291.8zM266.3 294.9L273.0 295.2L272.3 300.7L265.6 300.4z"/>
<path fill="#9f4122" stroke="#9f4122" stroke-width="1" d="M298.6 247.2L305.3 247.6L304.8 253.0L298.1 252.7zM186.7 330.1L193.4 330.4L192.5 336.0L185.8 335.7z"/>
<path fill="#dbd4c7" stroke="#dbd4c7" stroke-width="1" d="M103.5 239.5L110.2 240.1L109.6 245.7L102.9 245.2z"/>
<path fill="#dcd3c1" stroke="#dcd3c1" stroke-width="1" d="M116.9 240.6L123.6 241.1L123.1 246.8L116.4 246.3zM227.3 281.9L234.1 282.2L233.4 287.8L226.7 287.4zM295.4 329.0L302.2 329.2L301.3 334.6L294.6 334.4z"/>
<path fill="#e1cb8f" stroke="#e1cb8f" stroke-width="1" d="M130.4 241.6L137.1 242.1L136.5 247.8L129.8 247.3z"/>
<path fill="#e0c075" stroke="#e0c075" stroke-width="1" d="M143.8 242.6L150.5 243.1L149.9 248.8L143.2 248.3zM136.5 247.8L143.2 248.3L142.6 253.9L135.9 253.4z"/>
<path fill="#e0c177" stroke="#e0c177" stroke-width="1" d="M150.5 243.1L157.2 243.6L156.6 249.3L149.9 248.8z"/>
<path fill="#dfbb6c" stroke="#dfbb6c" stroke-width="1" d="M210.9 247.4L217.6 247.8L217.0 253.4L210.3 252.9z"/>
<path fill="#ddb163" stroke="#ddb163" stroke-width="1" d="M257.8 250.3L264.5 250.7L264.0 256.2L257.3 255.8z"/>
<path fill="#e0c27a" stroke="#e0c27a" stroke-width="1" d="M264.5 250.7L271.2 251.1L270.7 256.6L264.0 256.2zM214.6 275.5L221.3 275.9L220.6 281.5L213.9 281.1zM241.5 327.0L248.2 327.3L247.4 332.8L240.6 332.5z"/>
<path fill="#e0d3ad" stroke="#e0d3ad" stroke-width="1" d="M109.6 245.7L116.4 246.3L115.8 251.9L109.0 251.4zM272.3 300.7L279.0 301.0L278.3 306.5L271.6 306.2z"/>
<path fill="#e2d19f" stroke="#e2d19f" stroke-width="1" d="M123.1 246.8L129.8 247.3L129.2 252.9L122.5 252.4z"/>
<path fill="#dcb062" stroke="#dcb062" stroke-width="1" d="M149.9 248.8L156.6 249.3L156.0 254.9L149.3 254.4z"/>
<path fill="#deb769" stroke="#deb769" stroke-width="1" d="M203.6 252.5L210.3 252.9L209.7 258.5L203.0 258.0zM263.3 316.8L270.0 317.1L269.3 322.6L262.5 322.3z"/>
<path fill="#e0c279" stroke="#e0c279" stroke-width="1" d="M264.0 256.2L270.7 256.6L270.1 262.1L263.4 261.7zM273.7 289.8L280.4 290.1L279.7 295.6L273.0 295.2z"/>
<path fill="#ddb566" stroke="#ddb566" stroke-width="1" d="M277.4 257.0L284.1 257.4L283.6 262.8L276.8 262.5zM248.8 271.9L255.5 272.3L254.9 277.8L248.1 277.4z"/>
<path fill="#e1cb8e" stroke="#e1cb8e" stroke-width="1" d="M109.0 251.4L115.8 251.9L115.1 257.6L108.4 257.1z"/>
<path fill="#e1ca8c" stroke="#e1ca8c" stroke-width="1" d="M115.8 251.9L122.5 252.4L121.8 258.1L115.1 257.6zM213.9 281.1L220.6 281.5L219.9 287.0L213.2 286.6z"/>
<path fill="#e0bf72" stroke="#e0bf72" stroke-width="1" d="M129.2 252.9L135.9 253.4L135.3 259.1L128.6 258.6zM108.4 257.1L115.1 257.6L114.5 263.3L107.8 262.8z"/>
<path fill="#deb567" stroke="#deb567" stroke-width="1" d="M135.9 253.4L142.6 253.9L142.0 259.5L135.3 259.1zM234.7 326.7L241.5 327.0L240.6 332.5L233.9 332.2z"/>
<path fill="#daa657" stroke="#daa657" stroke-width="1" d="M243.3 260.5L250.0 260.9L249.4 266.4L242.7 266.1zM127.9 264.2L134.6 264.7L134.0 270.4L127.2 269.9z"/>
<path fill="#ddb263" stroke="#ddb263" stroke-width="1" d="M250.0 260.9L256.7 261.3L256.1 266.8L249.4 266.4zM249.4 266.4L256.1 266.8L255.5 272.3L248.8 271.9zM225.2 298.5L231.9 298.8L231.2 304.3L224.5 304.0z"/>
<path fill="#dfb96a" stroke="#dfb96a" stroke-width="1" d="M270.1 262.1L276.8 262.5L276.3 267.9L269.5 267.6zM235.6 321.2L242.3 321.5L241.5 327.0L234.7 326.7z"/>
<path fill="#ddb162" stroke="#ddb162" stroke-width="1" d="M276.8 262.5L283.6 262.8L283.0 268.3L276.3 267.9zM215.8 264.5L222.5 264.9L221.9 270.4L215.2 270.0z"/>
<path fill="#d7d3cd" stroke="#d7d3cd" stroke-width="1" d="M88.3 255.5L95.0 256.1L94.3 261.7L87.6 261.2z"/>
<path fill="#e0be71" stroke="#e0be71" stroke-width="1" d="M101.7 256.6L108.4 257.1L107.8 262.8L101.1 262.2z"/>
<path fill="#dfbc6d" stroke="#dfbc6d" stroke-width="1" d="M121.8 258.1L128.6 258.6L127.9 264.2L121.2 263.7z"/>
<path fill="#d39446" stroke="#d39446" stroke-width="1" d="M148.7 260.0L155.4 260.5L154.8 266.1L148.1 265.7zM99.0 279.3L105.7 279.8L104.9 285.4L98.2 284.9zM222.1 320.6L228.8 320.9L228.0 326.4L221.2 326.1z"/>
<path fill="#c37232" stroke="#c37232" stroke-width="1" d="M175.6 261.9L182.3 262.3L181.6 267.9L174.9 267.5z"/>
<path fill="#cb8138" stroke="#cb8138" stroke-width="1" d="M195.7 263.2L202.4 263.6L201.8 269.2L195.1 268.8z"/>
<path fill="#deb668" stroke="#deb668" stroke-width="1" d="M222.5 264.9L229.3 265.3L228.6 270.8L221.9 270.4z"/>
<path fill="#a34523" stroke="#a34523" stroke-width="1" d="M296.4 269.0L303.1 269.3L302.5 274.7L295.8 274.4zM156.4 305.9L163.1 306.3L162.3 311.9L155.6 311.5zM141.2 316.3L148.0 316.7L147.1 322.3L140.3 321.9zM193.4 330.4L200.1 330.7L199.2 336.3L192.5 336.0z"/>
<path fill="#91321f" stroke="#91321f" stroke-width="1" d="M303.1 269.3L309.8 269.6L309.2 275.1L302.5 274.7z"/>
<path fill="#8c2d1e" stroke="#8c2d1e" stroke-width="1" d="M316.5 270.0L323.2 270.3L322.6 275.7L315.9 275.4z"/>
<path fill="#e2d2a1" stroke="#e2d2a1" stroke-width="1" d="M87.6 261.2L94.3 261.7L93.7 267.4L86.9 266.9z"/>
<path fill="#ba632b" stroke="#ba632b" stroke-width="1" d="M168.2 267.0L174.9 267.5L174.3 273.1L167.5 272.6z"/>
<path fill="#e1c47d" stroke="#e1c47d" stroke-width="1" d="M221.9 270.4L228.6 270.8L228.0 276.3L221.3 275.9z"/>
<path fill="#e1c98b" stroke="#e1c98b" stroke-width="1" d="M228.6 270.8L235.4 271.2L234.7 276.7L228.0 276.3z"/>
<path fill="#d9a454" stroke="#d9a454" stroke-width="1" d="M255.5 272.3L262.2 272.7L261.6 278.2L254.9 277.8zM303.7 318.4L310.5 318.6L309.7 324.0L302.9 323.8z"/>
<path fill="#d69a4c" stroke="#d69a4c" stroke-width="1" d="M127.2 269.9L134.0 270.4L133.3 276.0L126.6 275.5z"/>
<path fill="#b55c29" stroke="#b55c29" stroke-width="1" d="M160.8 272.2L167.5 272.6L166.9 278.2L160.1 277.8zM202.7 314.1L209.4 314.4L208.6 319.9L201.9 319.6z"/>
<path fill="#ae5327" stroke="#ae5327" stroke-width="1" d="M167.5 272.6L174.3 273.1L173.6 278.7L166.9 278.2z"/>
<path fill="#c27030" stroke="#c27030" stroke-width="1" d="M187.7 273.9L194.4 274.3L193.7 279.9L187.0 279.5zM209.4 314.4L216.2 314.7L215.3 320.3L208.6 319.9zM72.0 323.3L78.7 323.8L77.7 329.5L71.0 329.0zM78.7 323.8L85.5 324.2L84.5 329.9L77.7 329.5z"/>
<path fill="#ca7f37" stroke="#ca7f37" stroke-width="1" d="M194.4 274.3L201.1 274.7L200.5 280.3L193.7 279.9zM252.8 294.3L259.6 294.6L258.8 300.1L252.1 299.8z"/>
<path fill="#e0d2a9" stroke="#e0d2a9" stroke-width="1" d="M228.0 276.3L234.7 276.7L234.1 282.2L227.3 281.9z"/>
<path fill="#e2cd94" stroke="#e2cd94" stroke-width="1" d="M241.4 277.1L248.1 277.4L247.5 283.0L240.8 282.6z"/>
<path fill="#dbad5e" stroke="#dbad5e" stroke-width="1" d="M248.1 277.4L254.9 277.8L254.2 283.3L247.5 283.0z"/>
<path fill="#d69c4d" stroke="#d69c4d" stroke-width="1" d="M275.0 278.9L281.7 279.2L281.1 284.6L274.4 284.3zM227.1 331.9L233.9 332.2L233.0 337.7L226.2 337.5z"/>
<path fill="#b9622b" stroke="#b9622b" stroke-width="1" d="M153.4 277.4L160.1 277.8L159.4 283.4L152.7 283.0zM131.1 292.9L137.8 293.4L137.0 299.0L130.3 298.6zM123.5 298.1L130.3 298.6L129.5 304.2L122.7 303.8zM100.8 313.8L107.5 314.2L106.6 319.9L99.9 319.4z"/>
<path fill="#be682d" stroke="#be682d" stroke-width="1" d="M187.0 279.5L193.7 279.9L193.0 285.5L186.3 285.1z"/>
<path fill="#c87a35" stroke="#c87a35" stroke-width="1" d="M193.7 279.9L200.5 280.3L199.8 285.9L193.0 285.5zM82.3 301.0L89.1 301.5L88.2 307.2L81.5 306.7z"/>
<path fill="#e2d29f" stroke="#e2d29f" stroke-width="1" d="M240.8 282.6L247.5 283.0L246.8 288.5L240.1 288.1zM293.9 290.7L300.6 291.0L299.9 296.4L293.2 296.1z"/>
<path fill="#ce883d" stroke="#ce883d" stroke-width="1" d="M287.8 285.0L294.5 285.3L293.9 290.7L287.1 290.4z"/>
<path fill="#bf6c2e" stroke="#bf6c2e" stroke-width="1" d="M294.5 285.3L301.2 285.6L300.6 291.0L293.9 290.7zM94.9 307.6L101.7 308.1L100.8 313.8L94.1 313.3z"/>
<path fill="#983820" stroke="#983820" stroke-width="1" d="M308.0 285.9L314.7 286.2L314.0 291.6L307.3 291.3z"/>
<path fill="#d08a3f" stroke="#d08a3f" stroke-width="1" d="M112.4 280.2L119.1 280.7L118.4 286.4L111.6 285.9z"/>
<path fill="#b35a28" stroke="#b35a28" stroke-width="1" d="M152.7 283.0L159.4 283.4L158.7 289.0L152.0 288.6zM130.3 298.6L137.0 299.0L136.2 304.6L129.5 304.2z"/>
<path fill="#a94d25" stroke="#a94d25" stroke-width="1" d="M179.6 284.7L186.3 285.1L185.6 290.7L178.9 290.3zM184.9 296.3L191.6 296.6L190.8 302.2L184.1 301.8zM119.2 326.4L125.9 326.8L125.0 332.4L118.2 332.0z"/>
<path fill="#e0bf73" stroke="#e0bf73" stroke-width="1" d="M213.2 286.6L219.9 287.0L219.2 292.6L212.5 292.2z"/>
<path fill="#e1d2a7" stroke="#e1d2a7" stroke-width="1" d="M219.9 287.0L226.7 287.4L225.9 292.9L219.2 292.6zM233.4 287.8L240.1 288.1L239.4 293.6L232.7 293.3z"/>
<path fill="#dfd3b4" stroke="#dfd3b4" stroke-width="1" d="M226.7 287.4L233.4 287.8L232.7 293.3L225.9 292.9z"/>
<path fill="#e2d19d" stroke="#e2d19d" stroke-width="1" d="M280.4 290.1L287.1 290.4L286.5 295.9L279.7 295.6z"/>
<path fill="#c87b35" stroke="#c87b35" stroke-width="1" d="M118.4 286.4L125.1 286.8L124.3 292.5L117.6 292.0zM75.6 300.5L82.3 301.0L81.5 306.7L74.7 306.2z"/>
<path fill="#b9632b" stroke="#b9632b" stroke-width="1" d="M138.5 287.7L145.3 288.2L144.5 293.8L137.8 293.4z"/>
<path fill="#a54723" stroke="#a54723" stroke-width="1" d="M165.4 289.4L172.2 289.9L171.4 295.5L164.7 295.1zM142.9 305.1L149.6 305.5L148.8 311.1L142.1 310.7z"/>
<path fill="#a24523" stroke="#a24523" stroke-width="1" d="M171.4 295.5L178.1 295.9L177.4 301.5L170.6 301.1zM178.1 295.9L184.9 296.3L184.1 301.8L177.4 301.5zM132.7 327.2L139.4 327.6L138.5 333.2L131.8 332.8z"/>
<path fill="#be6a2d" stroke="#be6a2d" stroke-width="1" d="M198.3 297.0L205.0 297.4L204.3 302.9L197.6 302.6z"/>
<path fill="#a14322" stroke="#a14322" stroke-width="1" d="M305.9 302.1L312.7 302.4L311.9 307.8L305.2 307.5z"/>
<path fill="#a74a24" stroke="#a74a24" stroke-width="1" d="M143.7 299.4L150.5 299.8L149.6 305.5L142.9 305.1zM190.0 307.8L196.8 308.1L196.0 313.7L189.2 313.4zM311.2 313.2L317.9 313.4L317.2 318.8L310.5 318.6zM127.8 315.5L134.5 315.9L133.6 321.5L126.9 321.1z"/>
<path fill="#a14422" stroke="#a14422" stroke-width="1" d="M177.4 301.5L184.1 301.8L183.3 307.4L176.6 307.0z"/>
<path fill="#9e4022" stroke="#9e4022" stroke-width="1" d="M311.9 307.8L318.7 308.0L317.9 313.4L311.2 313.2z"/>
<path fill="#a94d24" stroke="#a94d24" stroke-width="1" d="M136.2 304.6L142.9 305.1L142.1 310.7L135.4 310.3zM128.6 309.9L135.4 310.3L134.5 315.9L127.8 315.5z"/>
<path fill="#182f88" stroke="#182f88" stroke-width="1" d="M277.6 311.9L284.3 312.2L283.5 317.6L276.8 317.4z"/>
<path fill="#892b1d" stroke="#892b1d" stroke-width="1" d="M324.7 313.6L331.4 313.9L330.7 319.2L323.9 319.0zM331.4 313.9L338.1 314.1L337.4 319.4L330.7 319.2zM323.9 319.0L330.7 319.2L329.9 324.6L323.2 324.4zM323.2 324.4L329.9 324.6L329.1 330.0L322.4 329.8z"/>
<path fill="#882b1d" stroke="#882b1d" stroke-width="1" d="M338.1 314.1L344.9 314.3L344.1 319.6L337.4 319.4z"/>
<path fill="#9d3e21" stroke="#9d3e21" stroke-width="1" d="M169.0 312.3L175.8 312.6L174.9 318.2L168.2 317.9zM168.2 317.9L174.9 318.2L174.1 323.8L167.3 323.5zM174.9 318.2L181.7 318.6L180.8 324.2L174.1 323.8zM180.8 324.2L187.5 324.5L186.7 330.1L179.9 329.8z"/>
<path fill="#a14222" stroke="#a14222" stroke-width="1" d="M182.5 313.0L189.2 313.4L188.4 318.9L181.7 318.6zM188.4 318.9L195.1 319.3L194.3 324.8L187.5 324.5z"/>
<path fill="#daa656" stroke="#daa656" stroke-width="1" d="M243.1 316.0L249.8 316.3L249.0 321.8L242.3 321.5z"/>
<path fill="#182e86" stroke="#182e86" stroke-width="1" d="M276.8 317.4L283.5 317.6L282.7 323.1L276.0 322.8z"/>
<path fill="#872a1d" stroke="#872a1d" stroke-width="1" d="M330.7 319.2L337.4 319.4L336.6 324.8L329.9 324.6zM337.4 319.4L344.1 319.6L343.4 325.0L336.6 324.8zM329.9 324.6L336.6 324.8L335.9 330.1L329.1 330.0zM336.6 324.8L343.4 325.0L342.6 330.3L335.9 330.1zM329.1 330.0L335.9 330.1L335.1 335.5L328.3 335.3zM335.9 330.1L342.6 330.3L341.8 335.7L335.1 335.5zM328.3 335.3L335.1 335.5L334.2 340.9L327.5 340.7zM335.1 335.5L341.8 335.7L341.0 341.0L334.2 340.9z"/>
<path fill="#c37131" stroke="#c37131" stroke-width="1" d="M87.3 312.9L94.1 313.3L93.1 319.0L86.4 318.5z"/>
<path fill="#bd672d" stroke="#bd672d" stroke-width="1" d="M208.6 319.9L215.3 320.3L214.5 325.8L207.8 325.5z"/>
<path fill="#162579" stroke="#162579" stroke-width="1" d="M282.7 323.1L289.5 323.3L288.7 328.8L281.9 328.5z"/>
<path fill="#2753a5" stroke="#2753a5" stroke-width="1" d="M289.5 323.3L296.2 323.6L295.4 329.0L288.7 328.8z"/>
<path fill="#56a0bd" stroke="#56a0bd" stroke-width="1" d="M296.2 323.6L302.9 323.8L302.2 329.2L295.4 329.0z"/>
<path fill="#bd672c" stroke="#bd672c" stroke-width="1" d="M93.1 319.0L99.9 319.4L99.0 325.1L92.2 324.7z"/>
<path fill="#9c3d21" stroke="#9c3d21" stroke-width="1" d="M167.3 323.5L174.1 323.8L173.2 329.4L166.4 329.1zM174.1 323.8L180.8 324.2L179.9 329.8L173.2 329.4zM179.9 329.8L186.7 330.1L185.8 335.7L179.0 335.3z"/>
<path fill="#ba642c" stroke="#ba642c" stroke-width="1" d="M207.8 325.5L214.5 325.8L213.6 331.4L206.9 331.0z"/>
<path fill="#892c1d" stroke="#892c1d" stroke-width="1" d="M322.4 329.8L329.1 330.0L328.3 335.3L321.6 335.2zM321.6 335.2L328.3 335.3L327.5 340.7L320.8 340.5z"/>
<path fill="#b8612b" stroke="#b8612b" stroke-width="1" d="M206.9 331.0L213.6 331.4L212.8 336.9L206.0 336.6z"/>
<path fill="#c77834" stroke="#c77834" stroke-width="1" d="M213.6 331.4L220.4 331.7L219.5 337.2L212.8 336.9z"/>
</g></g>
<rect x="373" y="261" width="13" height="131" fill="url(#lg)"/>
<path d="M383 261.5h10" stroke="#e8e8e8" stroke-width="1"/>
<path d="M383 296.5h10" stroke="#e8e8e8" stroke-width="1"/>
<path d="M383 333.5h10" stroke="#e8e8e8" stroke-width="1"/>
<path d="M383 370.5h10" stroke="#e8e8e8" stroke-width="1"/>
<path d="M383 391.5h10" stroke="#e8e8e8" stroke-width="1"/>
<g font-family="Liberation Sans, sans-serif" font-size="13.200" fill="#efefef">
<text x="397" y="264.8">2.8e+02</text>
<text x="397" y="300">282</text>
<text x="397" y="336.5">280</text>
<text x="397" y="373.5">278</text>
<text x="397" y="395.3">2.8e+02</text>
<text transform="translate(458.500,325.500) rotate(-90)" text-anchor="middle">t2m</text>
</g>
<path d="M52.200 351v-21" stroke="#cfcb00" stroke-width=".9"/><path d="M50.400 330l1.800-6 1.800 6z" fill="#e6e200"/>
<path d="M53 351.500h21" stroke="#d01010" stroke-width=".9"/><path d="M73.500 349.700l5 1.800-5 1.800z" fill="#f00000"/>
<circle cx="52.200" cy="351.500" r="2.300" fill="#0a6a1a"/>
<g font-family="Liberation Sans, sans-serif" font-size="7.500" font-weight="bold" fill="#f4f4f4"><text x="54.500" y="329.500">Y</text><text x="55" y="350">Z</text><text x="77" y="349.500">X</text></g>
<rect x="1.100" y="1.100" width="466.500" height="402" fill="none" stroke="#0808fa" stroke-width="1.800"/>
</svg>
</body></html>
